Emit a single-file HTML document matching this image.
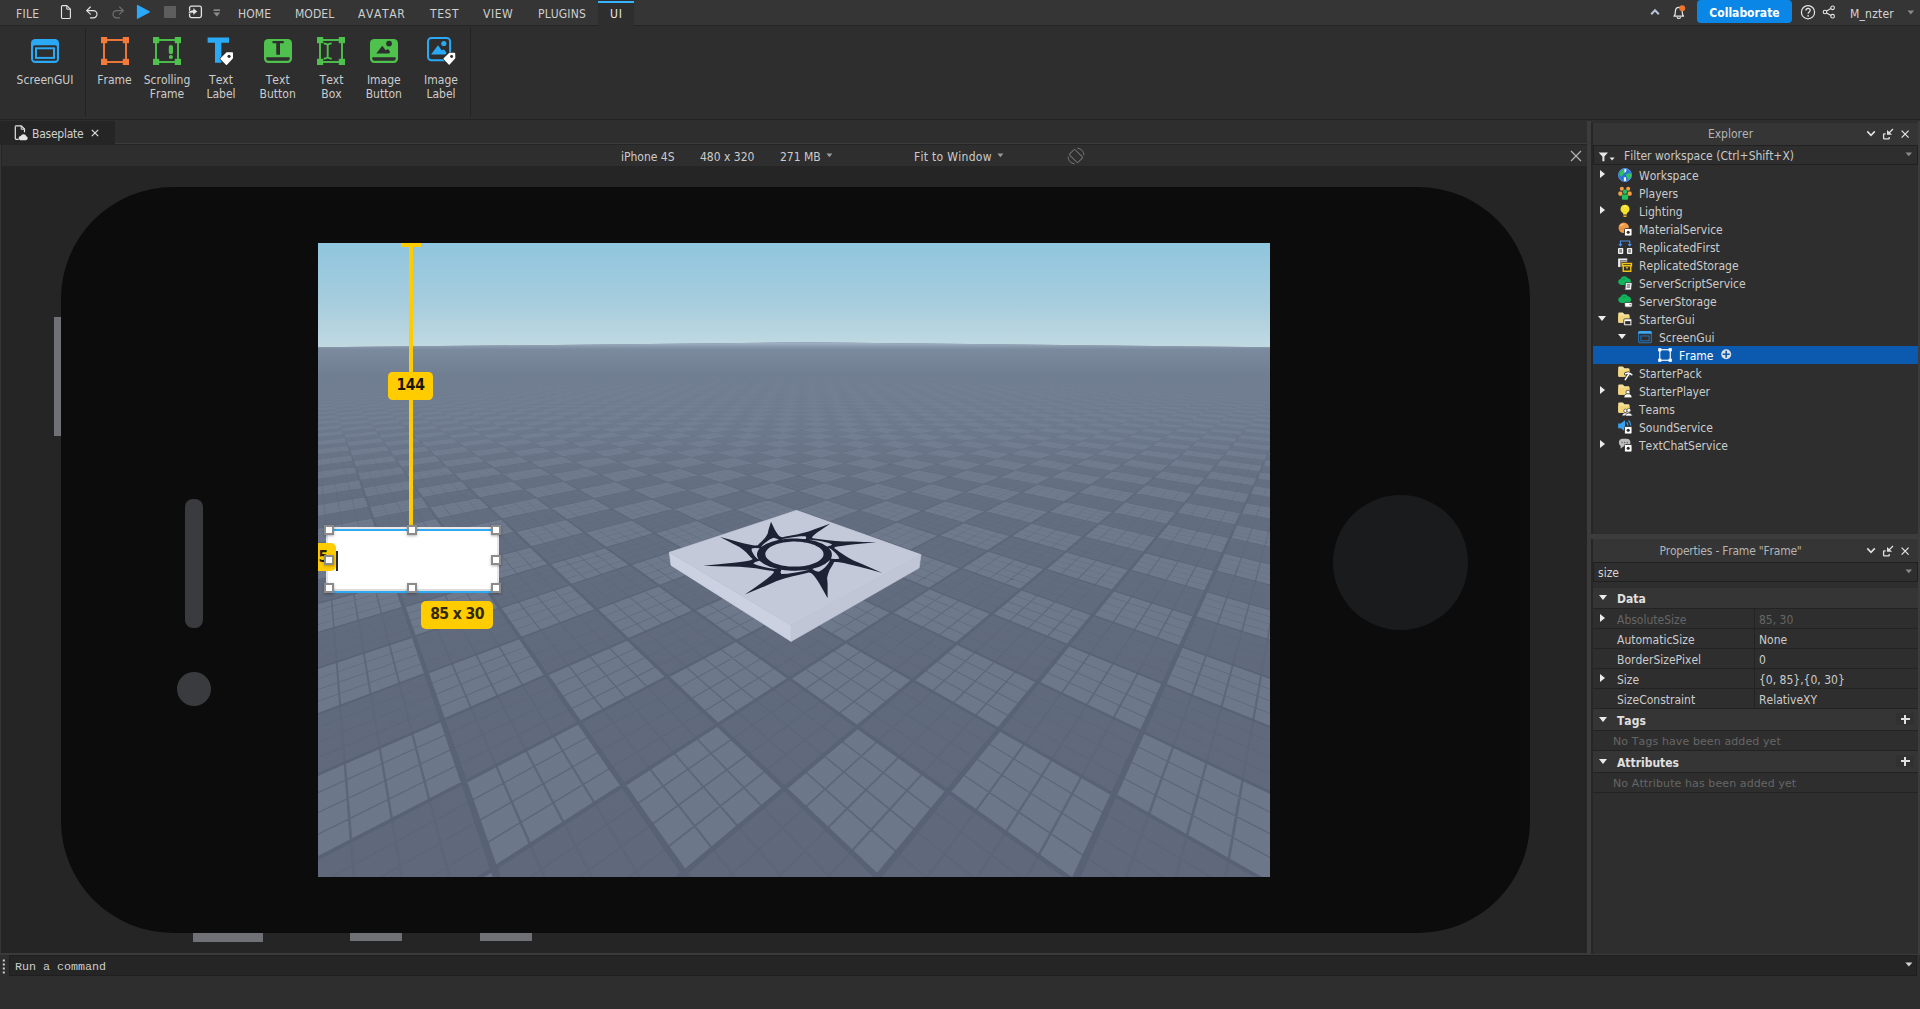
<!DOCTYPE html>
<html lang="en">
<head>
<meta charset="utf-8">
<title>Baseplate - Roblox Studio</title>
<style>
*{box-sizing:border-box;margin:0;padding:0}
html,body{width:1920px;height:1009px;overflow:hidden;background:#2e2e2e}
body{position:relative;font-kerning:none;font-family:"DejaVu Sans Condensed","Liberation Sans",sans-serif;font-size:12px;color:#ccc;line-height:14px;-webkit-font-smoothing:antialiased}
.abs{position:absolute}
.t{position:absolute;white-space:nowrap;line-height:14px}
.c{transform:translateX(-50%);text-align:center}
svg{position:absolute;overflow:visible}
/* top bar */
#topbar{position:absolute;left:0;top:0;width:1920px;height:25px;background:#353535}
#topline{position:absolute;left:0;top:25px;width:1920px;height:1px;background:#252525}
#ribbon{position:absolute;left:0;top:26px;width:1920px;height:93px;background:#2e2e2e}
#ribline{position:absolute;left:0;top:119px;width:1920px;height:1px;background:#232323}
.menu{top:6px;font-size:12px;color:#ccc}
#uitab{position:absolute;left:598px;top:0;width:36px;height:26px;background:#2e2e2e}
#uitab:before{content:"";position:absolute;left:0;top:1px;width:36px;height:2px;background:#35b5ff}
.vsep{position:absolute;top:28px;width:1px;height:89px;background:#232323}
.rl{top:73px;color:#ccc}
/* doc tab + device bar */
#tabbar{position:absolute;left:0;top:120px;width:1587px;height:24px;background:#2e2e2e}
#tabbar .line{position:absolute;left:115px;right:0;top:23px;height:1px;background:#3c3c3c}
#doctab{position:absolute;left:0;top:1px;width:115px;height:24px;background:#252525}
#devbar{position:absolute;left:2px;top:145px;width:1585px;height:21px;background:#2e2e2e}
#viewport{position:absolute;left:0;top:144px;width:1587px;height:810px;background:#252525}
#vpbottom{position:absolute;left:0;top:953px;width:1920px;height:2px;background:#3a3a3a}
#device{position:absolute;left:61px;top:187px;width:1469px;height:746px;border-radius:112px;background:#0c0c0c}
#screen{position:absolute;left:318px;top:243px;width:952px;height:634px;overflow:hidden;background:#8fc5de}
.hw{position:absolute;background:#707177}
/* command bar */
#cmd{position:absolute;left:0;top:955px;width:1920px;height:21px;background:#2e2e2e}
#cmdbox{position:absolute;left:9px;top:0;width:1908px;height:21px;background:#252525;border:1px solid #1f1f1f}
#cmdtxt{position:absolute;left:15px;top:5px;font-family:"Liberation Mono",monospace;font-size:11.67px;color:#ccc;white-space:nowrap;line-height:14px}
/* side panels */
#split{position:absolute;left:1587px;top:121px;width:4px;height:833px;background:#3c3c3c}
#rightedge{position:absolute;left:1918px;top:121px;width:2px;height:833px;background:#3c3c3c}
.panel{position:absolute;left:1591px;width:1329px;background:#2e2e2e}
.phead{position:absolute;left:1593px;width:325px;height:22px;background:#353535}
.ptitle{top:4px;left:137px;color:#bdbdbd}
.row{position:absolute;left:1593px;width:325px;height:18px}
.row.sel{background:#0b5aaf}
.row .t{top:3px}
.arr{position:absolute;width:0;height:0}
.arr.r{border-left:5.4px solid #ececec;border-top:4.2px solid transparent;border-bottom:4.2px solid transparent}
.arr.d{border-top:5.2px solid #ececec;border-left:4.1px solid transparent;border-right:4.1px solid transparent}
.ico{position:absolute;width:14px;height:14px;top:2px}
.prow{position:absolute;left:1593px;width:325px;height:20px;border-bottom:1px solid #232323}
.prow .t{top:4px}
.psec{position:absolute;left:1593px;width:325px;height:21px;background:#353535;border-bottom:1px solid #232323}
.psec .t{top:4px;left:24px;font-weight:bold;color:#e0e0e0;font-size:12px}
.dim{color:#666}
.pdiv{position:absolute;left:161px;top:0;width:1px;height:20px;background:#232323}
.plus{position:absolute;left:303px;top:4px;width:18px;height:12px;background:#313131}
.plus:before{content:"";position:absolute;left:4.5px;top:5.4px;width:9px;height:1.2px;background:#e0e0e0}
.plus:after{content:"";position:absolute;left:8.4px;top:1.5px;width:1.2px;height:9px;background:#e0e0e0}
</style>
</head>
<body>
<div id="topbar"></div><div id="topline"></div><div id="ribbon"></div><div id="ribline"></div>
<div id="uitab"></div>
<div class="t" style="left:16px;top:7px;color:#cfcfcf;letter-spacing:0.25px">FILE</div>
<div class="t" style="left:238px;top:7px;color:#cfcfcf;letter-spacing:0.1px">HOME</div>
<div class="t" style="left:295px;top:7px;color:#cfcfcf;letter-spacing:0.05px">MODEL</div>
<div class="t" style="left:358px;top:7px;color:#cfcfcf;letter-spacing:0.63px">AVATAR</div>
<div class="t" style="left:430px;top:7px;color:#cfcfcf;letter-spacing:0.57px">TEST</div>
<div class="t" style="left:483px;top:7px;color:#cfcfcf;letter-spacing:0.57px">VIEW</div>
<div class="t" style="left:538px;top:7px;color:#cfcfcf;letter-spacing:0.14px">PLUGINS</div>
<div class="t" style="left:610px;top:7px;color:#e6e6e6;letter-spacing:0.8px">UI</div>
<svg style="left:60px;top:4px" width="12" height="16" viewBox="0 0 12 16" ><path d="M2.400 1.600h4.400l3.600 3.600v8.400a.9.900 0 0 1-.9.900H2.400a.9.900 0 0 1-.9-.9V2.500a.9.900 0 0 1 .9-.9z" fill="none" stroke="#e4e4e4" stroke-width="1.150" stroke-linejoin="round"/><path d="M6.800 1.800v3.400h3.400" fill="none" stroke="#e4e4e4" stroke-width="1"/></svg>
<svg style="left:85px;top:5px" width="14" height="14" viewBox="0 0 14 14" ><path d="M5.400 2L1.600 5.600l3.800 3.600M1.900 5.600h6.500a3.600 3.600 0 0 1 0 7.200H5.400" fill="none" stroke="#e4e4e4" stroke-width="1.150" stroke-linecap="round" stroke-linejoin="round"/></svg>
<svg style="left:111px;top:5px" width="14" height="14" viewBox="0 0 14 14" ><path d="M8.600 2l3.800 3.600-3.800 3.600M12.100 5.600H5.600a3.600 3.600 0 0 0 0 7.200h3" fill="none" stroke="#707070" stroke-width="1.150" stroke-linecap="round" stroke-linejoin="round"/></svg>
<svg style="left:136px;top:4px" width="16" height="17" viewBox="0 0 16 17" ><path d="M1.500 1.500v12.800L13.200 7.900z" fill="#2aa9f9" stroke="#2aa9f9" stroke-width="1.200" stroke-linejoin="round"/></svg>
<div class="abs" style="left:164px;top:6px;width:12px;height:12px;background:#5e5e5e;border-radius:1px"></div>
<svg style="left:188px;top:5px" width="15" height="14" viewBox="0 0 15 14" ><rect x="1.6" y="1.2" width="11.8" height="11.4" rx="1.8" fill="none" stroke="#e4e4e4" stroke-width="1.3"/><path d="M0 8.6c.6-2.6 2.4-3.6 5-3.6V2.6l4.6 3.9L5 10.4V8c-2 0-3.6.2-5 .6z" fill="#e4e4e4" stroke="#353535" stroke-width=".7"/></svg>
<svg style="left:213px;top:9px" width="8" height="9" viewBox="0 0 8 9" ><rect x=".6" y=".3" width="6.4" height="1.6" fill="#8d8d8d"/><path d="M.4 3.6h6.8L3.8 7.6z" fill="#8d8d8d"/></svg>
<svg style="left:1650px;top:8px" width="10" height="8" viewBox="0 0 10 8" ><path d="M1.2 6.2L5 2.2l3.8 4" fill="none" stroke="#b9c2d6" stroke-width="2.1"/></svg>
<svg style="left:1671px;top:4px" width="16" height="17" viewBox="0 0 16 17" ><path d="M3 12.2c1.2-1 1.4-2.4 1.4-4.6 0-2.4 1.4-4.2 3.4-4.2s3.4 1.8 3.4 4.2c0 2.2.2 3.6 1.4 4.6z" fill="none" stroke="#e4e4e4" stroke-width="1.25" stroke-linejoin="round"/><path d="M6 13.2a1.9 1.9 0 0 0 3.6 0" fill="none" stroke="#e4e4e4" stroke-width="1.25"/><circle cx="11.2" cy="4.2" r="3" fill="#f0742b"/></svg>
<div class="abs" style="left:1697px;top:0;width:95px;height:23px;border-radius:4px;background:#0a86e6"></div>
<div class="t c" style="left:1744.5px;top:6px;font-weight:bold;color:#fff;font-size:12px">Collaborate</div>
<svg style="left:1800px;top:4px" width="16" height="16" viewBox="0 0 16 16" ><circle cx="8" cy="8.2" r="6.6" fill="none" stroke="#e4e4e4" stroke-width="1.2"/><path d="M5.9 6.6c0-1.4 1-2.2 2.2-2.2s2.1.8 2.1 1.9c0 1.6-2.1 1.7-2.1 3.5" fill="none" stroke="#e4e4e4" stroke-width="1.25"/><circle cx="8.1" cy="11.8" r=".85" fill="#e4e4e4"/></svg>
<svg style="left:1822px;top:5px" width="14" height="14" viewBox="0 0 14 14" ><circle cx="10.6" cy="2.8" r="1.8" fill="none" stroke="#e4e4e4" stroke-width="1.1"/><circle cx="10.6" cy="11.2" r="1.8" fill="none" stroke="#e4e4e4" stroke-width="1.1"/><circle cx="3" cy="7" r="1.8" fill="none" stroke="#e4e4e4" stroke-width="1.1"/><path d="M4.6 6.1l4.4-2.5M4.6 7.9l4.4 2.5" stroke="#e4e4e4" stroke-width="1.1"/></svg>
<div class="t" style="left:1850px;top:7px;color:#d6d6d6;letter-spacing:.2px">M_nzter</div>
<svg style="left:1907px;top:10px" width="8" height="5" viewBox="0 0 8 5" ><path d="M.5 .6h6.6L3.8 4.4z" fill="#8a8a8a"/></svg>
<div class="vsep" style="left:85px"></div><div class="vsep" style="left:470px"></div>
<svg style="left:31px;top:39px" width="28" height="24" viewBox="0 0 28 24" ><rect x="0" y="0" width="28" height="24" rx="4.2" fill="#2aa9f6"/><rect x="2.1" y="6.2" width="23.8" height="15.6" rx="1.6" fill="#2e2e2e"/><rect x="5" y="9.3" width="18" height="9.6" fill="none" stroke="#2aa9f6" stroke-width="2"/></svg>
<svg style="left:101px;top:37px" width="28" height="28" viewBox="0 0 28 28" ><rect x="3" y="3" width="22" height="22" fill="none" stroke="#f37a38" stroke-width="1.9"/><rect x="0" y="0" width="6.2" height="6.2" fill="#f37a38"/><rect x="0" y="21.8" width="6.2" height="6.2" fill="#f37a38"/><rect x="21.8" y="0" width="6.2" height="6.2" fill="#f37a38"/><rect x="21.8" y="21.8" width="6.2" height="6.2" fill="#f37a38"/></svg>
<svg style="left:153px;top:37px" width="28" height="28" viewBox="0 0 28 28" ><rect x="3" y="3" width="22" height="22" fill="none" stroke="#4ec24d" stroke-width="1.9"/><rect x="0" y="0" width="6.2" height="6.2" fill="#4ec24d"/><rect x="0" y="21.8" width="6.2" height="6.2" fill="#4ec24d"/><rect x="21.8" y="0" width="6.2" height="6.2" fill="#4ec24d"/><rect x="21.8" y="21.8" width="6.2" height="6.2" fill="#4ec24d"/><rect x="15.8" y="8" width="4.2" height="9.3" rx="2.1" fill="#4ec24d"/><circle cx="17.9" cy="20" r="2.1" fill="#4ec24d"/></svg>
<svg style="left:207px;top:37px" width="28" height="29" viewBox="0 0 28 29" ><path d="M.6 .4h21.400v5.400H14.400v20H8V5.800H.6z" fill="#2aa9f6"/><g transform="translate(13.2 15.1) scale(1.08)"><path d="M5.9 .2l5.3-.1q.6 0 .6.600l.1 4.600q0 .5-.4.900L6.300 11.800q-.5.500-1 0L.3 6.700q-.5-.5 0-1z" fill="#fff" stroke="#2e2e2e" stroke-width="1.100" paint-order="stroke"/><circle cx="8.200" cy="3.900" r="1.450" fill="#2e2e2e"/></g></svg>
<svg style="left:264px;top:39px" width="28" height="24" viewBox="0 0 28 24" ><rect width="28" height="24" rx="4.200" fill="#4ec24d"/><path d="M2.300 18.200h23.400v1.500a2 2 0 0 1-2 2H4.300a2 2 0 0 1-2-2z" fill="#2e2e2e"/><path d="M8.500 2.100h11.250v2.200H16v11.500h-3.750V4.300H8.500z" fill="#2e2e2e"/></svg>
<svg style="left:317px;top:37px" width="28" height="28" viewBox="0 0 28 28" ><rect x="3" y="3" width="22" height="22" fill="none" stroke="#4ec24d" stroke-width="1.9"/><rect x="0" y="0" width="6.2" height="6.2" fill="#4ec24d"/><rect x="0" y="21.8" width="6.2" height="6.2" fill="#4ec24d"/><rect x="21.8" y="0" width="6.2" height="6.2" fill="#4ec24d"/><rect x="21.8" y="21.8" width="6.2" height="6.2" fill="#4ec24d"/><path d="M6.700 6.400q2.700.200 4 1.400 1.300-1.200 4-1.400M6.700 21.800q2.700-.2 4-1.400 1.300 1.200 4 1.400M10.700 7.600v13" fill="none" stroke="#4ec24d" stroke-width="1.900"/></svg>
<svg style="left:370px;top:39px" width="28" height="24" viewBox="0 0 28 24" ><rect width="28" height="24" rx="4.200" fill="#4ec24d"/><path d="M2.300 18.200h23.400v1.500a2 2 0 0 1-2 2H4.300a2 2 0 0 1-2-2z" fill="#2e2e2e"/><path d="M6.300 14.500L12.300 6.800l3.400 4.500 2.300-1.300 1.800 2.300q.6 2.200-1.200 2.200z" fill="#2e2e2e"/><circle cx="19.050" cy="4.600" r="2.900" fill="#2e2e2e"/></svg>
<svg style="left:427px;top:37px" width="30" height="29" viewBox="0 0 30 29" ><rect x="1" y=".9" width="22.100" height="22.300" rx="3.400" fill="none" stroke="#2aa9f6" stroke-width="2"/><path d="M4 17.600L11 8.200l3.700 5 2.300-.8 2.200 2.900q.5 2.300-1.300 2.300z" fill="#2aa9f6"/><circle cx="16.800" cy="6.500" r="2.600" fill="#2aa9f6"/><g transform="translate(16.4 15.6) scale(1)"><path d="M5.9 .2l5.3-.1q.6 0 .6.600l.1 4.600q0 .5-.4.900L6.300 11.800q-.5.500-1 0L.3 6.700q-.5-.5 0-1z" fill="#fff" stroke="#2e2e2e" stroke-width="1.100" paint-order="stroke"/><circle cx="8.200" cy="3.900" r="1.450" fill="#2e2e2e"/></g></svg>
<div class="t c" style="left:45px;top:73px;">ScreenGUI</div>
<div class="t c" style="left:114.5px;top:73px;">Frame</div>
<div class="t c" style="left:167px;top:73px;">Scrolling</div>
<div class="t c" style="left:167px;top:87px;">Frame</div>
<div class="t c" style="left:221px;top:73px;">Text</div>
<div class="t c" style="left:221px;top:87px;">Label</div>
<div class="t c" style="left:277.7px;top:73px;">Text</div>
<div class="t c" style="left:277.7px;top:87px;">Button</div>
<div class="t c" style="left:331.5px;top:73px;">Text</div>
<div class="t c" style="left:331.5px;top:87px;">Box</div>
<div class="t c" style="left:383.8px;top:73px;">Image</div>
<div class="t c" style="left:383.8px;top:87px;">Button</div>
<div class="t c" style="left:441px;top:73px;">Image</div>
<div class="t c" style="left:441px;top:87px;">Label</div>
<div id="viewport"></div><div class="abs" style="left:0;top:145px;width:1px;height:809px;background:#363636"></div>
<div id="tabbar"><div class="line"></div><div id="doctab"></div></div>
<svg style="left:14px;top:124.5px" width="14" height="16" viewBox="0 0 14 16" ><path d="M1.3 1.6a.8.8 0 0 1 .8-.8h5.2l3.2 3.2v3.2" fill="none" stroke="#e4e4e4" stroke-width="1.2"/><path d="M7.2 1v3.2h3.2" fill="none" stroke="#e4e4e4" stroke-width="1"/><path d="M1.3 1.6v12a.8.8 0 0 0 .8.8h2.6" fill="none" stroke="#e4e4e4" stroke-width="1.2"/><path d="M6.2 15.2a2.2 2.2 0 0 1 .5-4.3 3 3 0 0 1 5.6.4 2 2 0 0 1-.3 3.9z" fill="#e4e4e4"/></svg>
<div class="t" style="left:32px;top:127px;color:#d0d0d0;letter-spacing:-.25px">Baseplate</div>
<svg style="left:91px;top:129px" width="8" height="8" viewBox="0 0 8 8" ><path d="M.8 .8l6.4 6.4M7.2 .8L.8 7.2" stroke="#dcdcdc" stroke-width="1.2"/></svg>
<div id="devbar"></div>
<div class="t" style="left:621px;top:150px;">iPhone 4S</div>
<div class="t" style="left:700px;top:150px;">480 x 320</div>
<div class="t" style="left:780px;top:150px;">271 MB</div>
<svg style="left:826px;top:153px" width="7" height="5" viewBox="0 0 7 5" ><path d="M.4 .4h6L3.4 4.2z" fill="#9a9a9a"/></svg>
<div class="t" style="left:914px;top:150px;letter-spacing:.3px">Fit to Window</div>
<svg style="left:997px;top:153px" width="7" height="5" viewBox="0 0 7 5" ><path d="M.4 .4h6L3.4 4.2z" fill="#9a9a9a"/></svg>
<svg style="left:1067px;top:147px" width="18" height="18" viewBox="0 0 18 18" ><g fill="none" stroke="#73767b" stroke-width="1"><rect x="5.200" y="3.050" width="7.600" height="11.900" rx=".9" transform="rotate(-45 9 9)"/><path d="M10.400 1.100A8 8 0 0 1 17 8.300M7.600 16.900A8 8 0 0 1 1 9.700"/></g></svg>
<svg style="left:1570px;top:150px" width="12" height="12" viewBox="0 0 12 12" ><path d="M1 1l10 10M11 1L1 11" stroke="#b4b4b4" stroke-width="1.2"/></svg>
<div class="hw" style="left:54px;top:317px;width:7px;height:119px"></div>
<div class="hw" style="left:193px;top:933px;width:70px;height:9px"></div>
<div class="hw" style="left:350px;top:933px;width:52px;height:8px"></div>
<div class="hw" style="left:480px;top:933px;width:52px;height:8px"></div>
<div id="device"></div>
<div class="abs" style="left:185px;top:498.500px;width:18px;height:129.500px;border-radius:8px;background:#3a3b3e"></div>
<div class="abs" style="left:177px;top:672px;width:34px;height:34px;border-radius:17px;background:#3a3b3e"></div>
<div class="abs" style="left:1333px;top:494.500px;width:135px;height:135px;border-radius:68px;background:#1a1b1d"></div>
<div id="screen"><svg class="scene" width="952" height="634" viewBox="0 0 952 634">
<defs><linearGradient id="sky" x1="0" y1="0" x2="0" y2="1"><stop offset="0" stop-color="#8fc5de"/><stop offset="0.55" stop-color="#a7cddd"/><stop offset="1" stop-color="#c4dbe2"/></linearGradient><linearGradient id="gnd" gradientUnits="userSpaceOnUse" x1="0" y1="100" x2="0" y2="634"><stop offset="0" stop-color="#667083"/><stop offset="0.12" stop-color="#667083"/><stop offset="0.3" stop-color="#60697c"/><stop offset="1" stop-color="#60697c"/></linearGradient><linearGradient id="fog" gradientUnits="userSpaceOnUse" x1="0" y1="100" x2="0" y2="634"><stop offset="0" stop-color="#a6b8cb" stop-opacity="0.9"/><stop offset="0.012" stop-color="#8698ac" stop-opacity="0.66"/><stop offset="0.06" stop-color="#8093a6" stop-opacity="0.42"/><stop offset="0.25" stop-color="#8093a6" stop-opacity="0.13"/><stop offset="0.6" stop-color="#8093a6" stop-opacity="0.03"/><stop offset="1" stop-color="#8093a6" stop-opacity="0"/></linearGradient><clipPath id="scclip"><rect x="0" y="0" width="952" height="634"/></clipPath></defs>
<g clip-path="url(#scclip)">
<rect x="0" y="0" width="952" height="110" fill="url(#sky)"/>
<polygon points="655054.8,7210.2 211603.4,2385.4 486.6,99.3 -10662.2,214.9 -627201.6,7210.2" fill="url(#gnd)"/>
<path fill="#6d778a" d="M-14 949.5l233.7-196.6 -43.9-127.5 -188.3 120.9zM-11.5 621.1l157.5-81.9 -21.4-62.1 -135.5 59.1zM-10.4 474.9l118.8-44.7 -12.6-36.7 -105.9 35zM-9.8 392.2l95.4-28.1 -8.3-24.2 -86.9 23.1zM-9.4 339l79.7-19.3 -5.9-17.2 -73.7 16.4zM-9.1 301.9l68.4-14.1 -4.4-12.8 -63.9 12.2zM-8.9 274.5l59.9-10.7 -3.4-9.9 -56.5 9.5zM-8.8 253.5l53.4-8.4 -2.8-7.9 -50.5 7.6zM-8.7 236.9l48.1-6.8 -2.2-6.4 -45.8 6.2zM-8.6 223.5l43.8-5.6 -1.9-5.4 -41.8 5.1zM-8.5 212.3l40.1-4.7 -1.5-4.5 -38.5 4.3zM-8.4 202.9l37-4 -1.3-3.8 -35.7 3.7zM-8.3 194.9l34.3-3.4 -1.1-3.4 -33.2 3.2zM-8.3 188l32.1-3 -1-2.9 -31.1 2.8zM-8.2 182l30.1-2.7 -.9-2.5 -29.2 2.4zM-8.2 176.7l28.3-2.3 -.7-2.3 -27.6 2.2zM291.5 960.9l165.2-201.3 -90.6-129.9 -146.4 123.2zM175.8 625.4l129.3-83.1 -43.9-62.9 -115.2 59.8zM124.6 477.1l103.6-45.2 -25.9-37 -93.9 35.3zM95.8 393.5l85.8-28.3 -17-24.4 -79 23.3zM77.3 339.9l73.1-19.4 -12.1-17.3 -68 16.5zM64.4 302.5l63.6-14.1 -8.9-12.9 -59.8 12.3zM54.9 275l56.3-10.7 -6.9-10 -53.3 9.5zM47.6 253.9l50.5-8.4 -5.5-7.9 -48 7.5zM41.8 237.2l45.8-6.8 -4.5-6.4 -43.7 6.1zM37.2 223.7l41.8-5.6 -3.8-5.4 -40 5.2zM33.3 212.5l38.5-4.7 -3.2-4.5 -37 4.3zM30.1 203.1l35.6-4 -2.7-3.9 -34.4 3.7zM27.3 195.1l33.2-3.5 -2.3-3.3 -32.2 3.2zM24.9 188.1l31.1-3 -2-2.9 -30.2 2.8zM22.8 182.1l29.2-2.6 -1.8-2.6 -28.3 2.4zM21 176.8l27.5-2.3 -1.6-2.3 -26.8 2.2zM19.4 172.1l26-2.1 -1.4-2.1 -25.4 2zM605.2 972.5l93.3-206.1 -138.9-132.2 -102.9 125.4zM366.1 629.7l100.3-84.3 -66.9-63.7 -94.4 60.6zM261.2 479.4l87.9-45.7 -39.2-37.4 -81.7 35.6zM202.3 394.9l76.1-28.6 -25.8-24.6 -71 23.5zM164.6 340.8l66.4-19.6 -18.2-17.3 -62.4 16.6zM138.3 303.2l58.9-14.2 -13.6-13 -55.6 12.4zM119.1 275.5l52.6-10.8 -10.5-10 -50 9.6zM104.3 254.3l47.6-8.5 -8.4-7.9 -45.4 7.6zM92.6 237.6l43.4-6.9 -6.8-6.5 -41.6 6.2zM83.1 224l39.9-5.7 -5.7-5.4 -38.3 5.2zM75.2 212.7l36.9-4.7 -4.7-4.5 -35.6 4.3zM68.6 203.3l34.4-4 -4.1-3.9 -33.2 3.7zM63 195.2l32.1-3.4 -3.5-3.4 -31.1 3.2zM58.2 188.3l30.1-3 -3.1-3 -29.2 2.8zM54 182.2l28.3-2.6 -2.7-2.6 -27.6 2.5zM50.2 176.9l26.8-2.3 -2.4-2.3 -26.1 2.2zM46.9 172.2l25.4-2.1 -2.1-2.1 -24.8 2zM927.5 984.5l17.9-211.1 -189-134.7 -57.9 127.7zM559.6 634.2l70.3-85.7 -90.5-64.5 -73 61.4zM399.5 481.7l71.9-46.2 -53-37.8 -69.3 36zM309.9 396.3l66.1-28.8 -34.8-24.8 -62.8 23.6zM252.6 341.7l59.7-19.7 -24.6-17.5 -56.7 16.7zM212.8 303.9l53.9-14.3 -18.2-13 -51.3 12.4zM183.6 276l48.9-10.8 -14.1-10.1 -46.7 9.6zM161.2 254.7l44.7-8.5 -11.2-8 -42.8 7.6zM143.5 237.9l41.1-6.9 -9.1-6.5 -39.5 6.2zM129.2 224.2l38-5.6 -7.6-5.4 -36.6 5.1zM117.3 212.9l35.3-4.7 -6.4-4.6 -34.1 4.4zM107.4 203.5l32.9-4.1 -5.5-3.9 -31.8 3.8zM98.9 195.4l30.9-3.5 -4.8-3.4 -29.9 3.3zM91.6 188.4l29-3 -4.1-3 -28.2 2.9zM85.2 182.3l27.4-2.6 -3.6-2.6 -26.7 2.5zM79.6 177l26-2.4 -3.3-2.3 -25.3 2.3zM74.6 172.3l24.7-2.1 -2.9-2.1 -24.1 2zM756.4 638.7l39.3-87 -114.7-65.4 -51.1 62.2zM539.4 484l55.5-46.7 -66.9-38.2 -56.6 36.4zM418.4 397.7l56-29.1 -43.8-25 -54.6 23.9zM341.2 342.7l52.9-19.9 -30.9-17.6 -50.9 16.8zM287.7 304.5l49-14.4 -23-13 -47 12.5zM248.5 276.6l45.2-11 -17.8-10.1 -43.4 9.7zM218.4 255.1l41.8-8.6 -14.1-8 -40.2 7.7zM194.7 238.2l38.7-6.9 -11.5-6.5 -37.3 6.2zM175.5 224.5l36-5.7 -9.5-5.4 -34.8 5.2zM159.6 213.2l33.6-4.8 -8-4.6 -32.6 4.4zM146.2 203.6l31.6-4 -6.9-3.9 -30.6 3.7zM134.8 195.5l29.7-3.4 -5.9-3.4 -28.8 3.2zM125 188.5l28.1-3 -5.2-2.9 -27.3 2.8zM116.5 182.4l26.5-2.6 -4.5-2.6 -25.9 2.5zM109 177.1l25.2-2.4 -4.1-2.3 -24.5 2.2zM102.3 172.3l24-2 -3.6-2.1 -23.4 2zM956.4 643.2l7.5-88.3 -139.6-66.2 -28.6 63zM681 486.3l38.7-47.2 -81.2-38.5 -43.6 36.7zM528 399.1l45.7-29.3 -53.1-25.2 -46.2 24zM430.6 343.6l45.8-20 -37.3-17.7 -45 16.9zM363.2 305.2l43.9-14.5 -27.7-13.1 -42.7 12.5zM313.7 277.1l41.4-11 -21.4-10.2 -40 9.7zM275.9 255.5l38.8-8.6 -17-8.1 -37.5 7.7zM246.1 238.5l36.3-6.9 -13.8-6.6 -35.2 6.3zM221.9 224.8l34.1-5.8 -11.5-5.4 -33 5.2zM202 213.4l32-4.8 -9.7-4.6 -31.1 4.4zM185.2 203.8l30.2-4 -8.3-4 -29.3 3.8zM170.9 195.7l28.5-3.5 -7.1-3.4 -27.8 3.3zM158.6 188.7l27-3.1 -6.2-2.9 -26.3 2.8zM147.9 182.6l25.6-2.7 -5.5-2.6 -25 2.5zM138.5 177.2l24.4-2.4 -4.9-2.3 -23.8 2.2zM130.1 172.4l23.3-2 -4.4-2.1 -22.7 2zM824.3 488.7l21.6-47.8 -95.7-38.9 -30.5 37.1zM638.5 400.6l35.3-29.7 -62.5-25.3 -37.6 24.2zM520.6 344.6l38.8-20.2 -43.9-17.8 -39.1 17zM439.1 305.9l38.8-14.6 -32.5-13.2 -38.3 12.6zM379.4 277.6l37.5-11.1 -25.1-10.2 -36.7 9.8zM333.7 255.9l35.8-8.6 -19.9-8.1 -34.9 7.7zM297.7 238.8l33.9-6.9 -16.2-6.6 -33 6.3zM268.6 225l32.1-5.7 -13.5-5.5 -31.2 5.2zM244.5 213.6l30.4-4.8 -11.3-4.6 -29.6 4.4zM224.3 204l28.8-4.1 -9.7-3.9 -28 3.8zM207.1 195.8l27.3-3.4 -8.3-3.4 -26.7 3.2zM192.3 188.8l25.9-3 -7.3-3 -25.3 2.8zM179.4 182.7l24.7-2.7 -6.4-2.6 -24.2 2.5zM168 177.3l23.6-2.4 -5.7-2.3 -23 2.2zM158 172.5l22.5-2.1 -5.1-2 -22 2zM969.3 491.1l4.1-48.3 -110.5-39.3 -17 37.4zM750.2 402l24.5-29.9 -71.9-25.6 -29 24.4zM611.3 345.6l31.6-20.3 -50.5-18 -33 17.1zM515.5 306.6l33.7-14.7 -37.5-13.3 -33.8 12.7zM445.4 278.1l33.6-11.1 -28.8-10.3 -33.3 9.8zM391.8 256.3l32.8-8.7 -22.9-8.1 -32.2 7.8zM349.6 239.2l31.5-7 -18.7-6.7 -30.8 6.4zM315.4 225.3l30.1-5.8 -15.4-5.5 -29.4 5.3zM287.2 213.8l28.7-4.8 -13-4.6 -28 4.4zM263.6 204.2l27.3-4.1 -11.1-3.9 -26.7 3.7zM243.4 196l26.1-3.5 -9.6-3.4 -25.5 3.3zM226.1 189l24.9-3.1 -8.4-3 -24.4 2.9zM210.9 182.8l23.8-2.7 -7.3-2.6 -23.3 2.5zM197.7 177.4l22.7-2.3 -6.5-2.4 -22.3 2.2zM185.9 172.6l21.8-2.1 -5.8-2 -21.4 1.9zM862.9 403.5l13.6-30.2 -81.6-25.8 -20.2 24.6zM702.8 346.5l24.3-20.4 -57.3-18.1 -26.9 17.3zM592.4 307.3l28.4-14.8 -42.3-13.4 -29.3 12.8zM511.7 278.6l29.7-11.2 -32.6-10.3 -29.8 9.9zM450.2 256.7l29.7-8.7 -25.9-8.2 -29.4 7.8zM401.7 239.5l29-7 -21-6.7 -28.6 6.4zM362.4 225.5l28.2-5.7 -17.5-5.5 -27.6 5.2zM330.1 214l27-4.8 -14.6-4.6 -26.6 4.4zM302.9 204.4l26-4.1 -12.5-4 -25.5 3.8zM279.8 196.2l24.9-3.5 -10.8-3.5 -24.4 3.3zM259.9 189.1l23.9-3.1 -9.5-3 -23.3 2.9zM242.6 182.9l22.9-2.6 -8.3-2.7 -22.5 2.5zM227.4 177.5l21.9-2.3 -7.3-2.4 -21.6 2.3zM213.9 172.7l21.1-2.1 -6.6-2.1 -20.7 2zM976.6 404.9l2.6-30.4 -91.5-26 -11.2 24.8zM794.9 347.5l16.9-20.6 -64.1-18.2 -20.6 17.4zM669.8 308l23.2-14.9 -47.4-13.4 -24.8 12.8zM578.5 279.1l25.7-11.2 -36.4-10.4 -26.4 9.9zM508.8 257.1l26.6-8.8 -28.9-8.2 -26.6 7.9zM454 239.8l26.6-7.1 -23.5-6.6 -26.4 6.4zM409.7 225.8l26-5.8 -19.4-5.5 -25.7 5.3zM373.1 214.3l25.4-4.9 -16.4-4.6 -25 4.4zM342.5 204.6l24.5-4.1 -14-4 -24.1 3.8zM316.4 196.3l23.6-3.5 -12-3.4 -23.3 3.3zM293.9 189.2l22.8-3 -10.5-3 -22.4 2.8zM274.3 183l22-2.6 -9.3-2.7 -21.5 2.6zM257.2 177.6l21.1-2.3 -8.2-2.4 -20.8 2.3zM242 172.8l20.3-2.1 -7.3-2.1 -20 2zM887.7 348.5l9.4-20.8 -70.9-18.3 -14.4 17.5zM747.7 308.7l17.8-15 -52.4-13.5 -20.1 12.9zM645.6 279.7l21.7-11.3 -40.3-10.4 -22.8 9.9zM567.8 257.5l23.5-8.8 -32-8.2 -23.9 7.8zM506.5 240.1l24.1-7.1 -25.9-6.7 -24.1 6.4zM457.1 226.1l24-5.8 -21.5-5.6 -23.9 5.3zM416.3 214.5l23.7-4.9 -18.1-4.7 -23.4 4.5zM382.1 204.8l23.1-4.2 -15.4-4 -22.8 3.9zM353 196.5l22.4-3.6 -13.3-3.4 -22.1 3.3zM328 189.4l21.7-3.1 -11.6-3 -21.4 2.9zM306.2 183.2l21-2.7 -10.2-2.7 -20.7 2.6zM287 177.7l20.3-2.3 -9-2.4 -20 2.3zM270.1 172.9l19.6-2.1 -8.1-2.1 -19.3 2zM981.3 349.5l1.8-20.9 -78-18.5 -8 17.6zM826.2 309.4l12.3-15 -57.5-13.7 -15.5 13zM713.1 280.2l17.7-11.4 -44.2-10.4 -19.3 10zM627 258l20.4-8.9 -35-8.3 -21.1 7.9zM559.3 240.5l21.6-7.2 -28.4-6.7 -21.9 6.4zM504.7 226.3l22-5.8 -23.6-5.6 -22 5.4zM459.6 214.7l22-4.9 -19.8-4.7 -21.8 4.5zM421.9 204.9l21.6-4.1 -16.9-4 -21.4 3.8zM389.8 196.6l21.2-3.5 -14.6-3.5 -21 3.3zM362.1 189.5l20.7-3.1 -12.7-3 -20.4 2.9zM338.1 183.3l20.1-2.7 -11.2-2.7 -19.8 2.6zM317 177.8l19.5-2.3 -10-2.4 -19.2 2.3zM298.3 173l18.9-2.1 -8.9-2.1 -18.6 2zM905.1 310.1l6.9-15.1 -62.7-13.7 -10.8 13.1zM781 280.7l13.6-11.4 -48.2-10.5 -15.6 10zM686.6 258.4l17.1-8.9 -38.1-8.4 -18.2 8zM612.4 240.8l19-7.2 -30.9-6.7 -19.6 6.4zM552.5 226.6l19.9-5.9 -25.6-5.5 -20.1 5.3zM503.1 214.9l20.3-4.9 -21.6-4.7 -20.2 4.5zM461.8 205.1l20.2-4.1 -18.4-4 -20.1 3.8zM426.6 196.8l20-3.6 -15.8-3.4 -19.8 3.3zM396.4 189.6l19.6-3 -13.8-3.1 -19.4 2.9zM370.1 183.4l19.1-2.7 -12.1-2.6 -18.9 2.5zM347 177.9l18.6-2.3 -10.7-2.4 -18.4 2.3zM326.5 173.1l18.2-2.1 -9.6-2.1 -17.9 2zM984.6 310.8l1.3-15.2 -68-13.8 -5.9 13.2zM849.3 281.3l9.4-11.5 -52.1-10.6 -12 10.1zM746.4 258.8l14-9 -41.3-8.3 -15.4 8zM665.6 241.1l16.5-7.2 -33.5-6.7 -17.2 6.4zM600.5 226.9l17.8-5.9 -27.7-5.6 -18.2 5.3zM546.8 215.2l18.5-5 -23.3-4.7 -18.6 4.5zM501.8 205.3l18.8-4.1 -19.9-4.1 -18.7 3.9zM463.6 197l18.7-3.6 -17.1-3.5 -18.6 3.3zM430.8 189.8l18.5-3.1 -15-3 -18.3 2.9zM402.2 183.5l18.2-2.7 -13.2-2.6 -18 2.5zM377.1 178.1l17.8-2.4 -11.6-2.4 -17.7 2.3zM354.9 173.2l17.4-2.1 -10.4-2.1 -17.2 2zM917.9 281.8l5.3-11.6 -56.2-10.6 -8.3 10.2zM806.6 259.2l10.7-9 -44.4-8.4 -12.5 8zM719.1 241.5l13.9-7.3 -36-6.8 -14.9 6.5zM648.6 227.2l15.8-6 -29.8-5.6 -16.3 5.4zM590.6 215.4l16.8-5 -25-4.7 -17.1 4.5zM542 205.5l17.3-4.2 -21.3-4 -17.4 3.9zM500.7 197.1l17.5-3.5 -18.4-3.5 -17.5 3.3zM465.2 189.9l17.4-3.1 -16-3 -17.3 2.9zM434.3 183.7l17.3-2.8 -14.1-2.6 -17.1 2.5zM407.2 178.2l17-2.4 -12.5-2.4 -16.8 2.3zM383.3 173.3l16.7-2.1 -11.2-2.1 -16.5 2zM987 282.3l1-11.6 -60.2-10.7 -4.6 10.2zM867 259.6l7.4-9 -47.5-8.5 -9.6 8.1zM772.9 241.8l11.3-7.3 -38.6-6.8 -12.6 6.5zM697 227.4l13.6-5.9 -31.8-5.7 -14.4 5.4zM634.6 215.6l15-4.9 -26.8-4.8 -15.4 4.5zM582.4 205.7l15.7-4.2 -22.8-4 -16 3.8zM538 197.3l16.1-3.6 -19.6-3.5 -16.3 3.4zM499.8 190.1l16.3-3.1 -17.1-3.1 -16.4 2.9zM466.6 183.8l16.3-2.7 -15.1-2.7 -16.2 2.5zM437.5 178.3l16.1-2.4 -13.3-2.4 -16.1 2.3zM411.7 173.4l16-2.1 -11.9-2.2 -15.8 2.1zM927.8 260l4.1-9.1 -50.8-8.4 -6.7 8.1zM826.9 242.1l8.6-7.3 -41.1-6.8 -10.2 6.5zM745.6 227.7l11.5-6 -34-5.6 -12.5 5.4zM678.8 215.8l13.2-4.9 -28.6-4.8 -13.8 4.6zM622.8 205.9l14.3-4.2 -24.3-4.1 -14.7 3.9zM575.3 197.5l14.9-3.6 -21-3.5 -15.1 3.3zM534.5 190.2l15.2-3.1 -18.3-3.1 -15.3 3zM499 183.9l15.3-2.7 -16.1-2.7 -15.3 2.6zM467.8 178.4l15.3-2.4 -14.2-2.4 -15.3 2.3zM440.3 173.5l15.2-2.2 -12.7-2.1 -15.1 2.1zM988.9 260.5l.7-9.2 -54-8.5 -3.7 8.1zM881.1 242.5l6-7.4 -43.7-6.9 -7.9 6.6zM794.4 228l9.3-6 -36.1-5.7 -10.5 5.4zM723.1 216.1l11.4-5 -30.3-4.8 -12.2 4.6zM663.4 206.1l12.8-4.2 -25.8-4.1 -13.3 3.9zM612.8 197.6l13.6-3.6 -22.3-3.5 -13.9 3.4zM569.2 190.4l14.1-3.2 -19.4-3 -14.2 2.9zM531.4 184l14.4-2.7 -17.1-2.7 -14.4 2.6zM498.2 178.5l14.5-2.4 -15.1-2.4 -14.5 2.3zM468.9 173.6l14.4-2.2 -13.4-2.1 -14.4 2zM935.6 242.8l3.3-7.3 -46.4-7 -5.4 6.6zM843.4 228.2l7.1-6 -38.3-5.7 -8.5 5.5zM767.6 216.3l9.6-5 -32.2-4.8 -10.5 4.6zM704.2 206.3l11.2-4.3 -27.3-4 -11.9 3.9zM650.4 197.8l12.3-3.6 -23.6-3.6 -12.7 3.4zM604.1 190.5l13-3.1 -20.5-3.1 -13.3 2.9zM563.9 184.2l13.4-2.8 -18-2.7 -13.5 2.6zM528.7 178.6l13.6-2.4 -16-2.4 -13.6 2.3zM497.6 173.7l13.6-2.2 -14.2-2.1 -13.7 2zM990.3 243.1l.6-7.3 -49-7 -3 6.7zM892.5 228.5l5-6 -40.5-5.8 -6.5 5.5zM812.2 216.5l7.8-5 -33.9-4.8 -8.9 4.6zM745 206.5l9.8-4.3 -28.9-4.1 -10.5 3.9zM688.1 198l11-3.7 -24.9-3.5 -11.5 3.4zM639.1 190.6l11.9-3.1 -21.7-3.1 -12.2 3zM596.6 184.3l12.4-2.8 -19.1-2.7 -12.6 2.6zM559.3 178.7l12.7-2.4 -16.9-2.4 -12.8 2.3zM526.3 173.8l12.9-2.2 -15-2.1 -13 2zM941.9 228.8l2.8-6.1 -42.7-5.7 -4.5 5.5zM857 216.7l6-5 -35.8-4.8 -7.2 4.6zM786.1 206.7l8.2-4.3 -30.5-4.1 -9 3.9zM725.9 198.1l9.7-3.6 -26.2-3.6 -10.3 3.4zM674.2 190.8l10.7-3.2 -22.8-3.1 -11.1 3zM629.3 184.4l11.4-2.8 -20.1-2.7 -11.6 2.6zM589.9 178.8l11.9-2.4 -17.8-2.4 -12 2.3zM555.1 173.9l12.2-2.2 -15.8-2.1 -12.3 2zM991.5 229.1l.5-6.1 -44.8-5.8 -2.5 5.5zM902 217l4.2-5.1 -37.7-4.8 -5.5 4.6zM827.2 206.9l6.7-4.3 -32-4.1 -7.6 3.9zM763.8 198.3l8.4-3.7 -27.6-3.5 -9 3.4zM709.4 190.9l9.6-3.1 -24-3.1 -10.1 2.9zM662.1 184.5l10.4-2.7 -21.1-2.8 -10.7 2.6zM620.6 178.9l11-2.4 -18.6-2.4 -11.2 2.3zM584 174l11.4-2.2 -16.6-2.1 -11.5 2zM947.2 217.2l2.3-5.1 -39.5-4.8 -3.8 4.6zM868.5 207.1l5.1-4.3 -33.5-4.2 -6.2 4zM801.9 198.5l7-3.7 -28.9-3.6 -7.8 3.4zM744.6 191.1l8.5-3.2 -25.1-3.1 -9 3zM695 184.7l9.4-2.8 -22.1-2.8 -9.8 2.7zM651.4 179l10.2-2.4 -19.6-2.4 -10.4 2.3zM613 174.1l10.6-2.2 -17.4-2.2 -10.8 2.1zM992.5 217.4l.4-5.1 -41.3-4.8 -2.1 4.6zM910 207.3l3.5-4.4 -35.1-4.1 -4.8 4zM840.1 198.6l5.7-3.7 -30.3-3.5 -6.6 3.4zM780 191.2l7.3-3.2 -26.3-3.1 -7.9 3zM728 184.8l8.4-2.8 -23.1-2.7 -8.9 2.6zM682.3 179.1l9.3-2.4 -20.5-2.4 -9.5 2.3zM642 174.2l9.9-2.2 -18.3-2.2 -10 2.1zM951.6 207.5l1.9-4.4 -36.7-4.1 -3.3 3.9zM878.4 198.8l4.4-3.7 -31.7-3.6 -5.3 3.4zM815.5 191.4l6.2-3.2 -27.5-3.2 -6.9 3zM761 184.9l7.5-2.8 -24.2-2.7 -7.9 2.6zM713.3 179.3l8.4-2.5 -21.4-2.4 -8.7 2.3zM671.1 174.3l9.1-2.2 -19-2.2 -9.3 2.1zM993.3 207.6l.4-4.3 -38.3-4.2 -1.9 4zM916.8 199l3-3.7 -32.9-3.7 -4.1 3.5zM851.1 191.5l5-3.2 -28.6-3.1 -5.8 3zM794.2 185l6.4-2.8 -25.1-2.7 -7 2.6zM744.3 179.4l7.5-2.5 -22.2-2.4 -7.9 2.3zM700.3 174.4l8.3-2.2 -19.9-2.2 -8.5 2.1zM955.4 199.1l1.6-3.7 -34.3-3.6 -2.9 3.5zM886.9 191.6l3.8-3.2 -29.9-3.1 -4.7 3zM827.5 185.2l5.4-2.8 -26.2-2.8 -6.1 2.6zM775.5 179.5l6.5-2.5 -23.1-2.4 -7.1 2.3zM729.6 174.5l7.4-2.2 -20.6-2.2 -7.8 2.1zM922.7 191.8l2.6-3.2 -31-3.2 -3.6 3zM860.8 185.3l4.4-2.8 -27.2-2.8 -5.1 2.7zM806.7 179.6l5.7-2.5 -24.1-2.4 -6.3 2.3zM758.9 174.6l6.6-2.2 -21.4-2.2 -7.1 2.1zM958.6 191.9l1.5-3.2 -32.3-3.2 -2.5 3.1zM894.3 185.4l3.3-2.8 -28.3-2.8 -4.1 2.7zM838 179.7l4.7-2.5 -25-2.4 -5.3 2.3zM788.3 174.7l5.8-2.2 -22.2-2.2 -6.4 2.1zM927.8 185.5l2.3-2.8 -29.3-2.8 -3.2 2.7zM869.3 179.8l3.9-2.5 -25.9-2.4 -4.6 2.3zM817.7 174.8l5.1-2.2 -23.1-2.2 -5.6 2.1zM961.4 185.7l1.3-2.9 -30.4-2.8 -2.2 2.7zM900.8 179.9l3-2.5 -26.9-2.4 -3.7 2.3zM847.3 174.9l4.2-2.2 -23.9-2.2 -4.8 2.1zM932.3 180l2.1-2.5 -27.8-2.4 -2.8 2.3zM876.9 175l3.4-2.3 -24.7-2.2 -4.1 2.2zM963.9 180.2l1.2-2.6 -28.8-2.4 -1.9 2.3zM906.6 175.1l2.6-2.3 -25.6-2.2 -3.3 2.1zM936.3 175.2l1.9-2.3 -26.5-2.2 -2.5 2.1zM966.2 175.3l1-2.3 -27.3-2.2 -1.7 2.1z"/>
<path fill="#6c7689" d="M-8.2 172l26.8-2.1 -.7-2 -26.1 1.9zM-8.1 167.8l25.3-1.9 -.6-1.8 -24.7 1.7zM-8.1 164l24.1-1.7 -.6-1.6 -23.5 1.6zM17.9 167.9l24.8-1.9 -1.3-1.8 -24.2 1.7zM16.6 164.1l23.5-1.7 -1.1-1.6 -23 1.5zM44 167.9l24.1-1.8 -1.9-1.9 -23.5 1.8zM41.4 164.2l23-1.7 -1.8-1.7 -22.5 1.6zM70.2 168l23.5-1.8 -2.6-1.9 -23 1.8zM66.2 164.2l22.4-1.6 -2.3-1.7 -21.9 1.6zM96.4 168.1l22.8-1.9 -3.2-1.8 -22.3 1.8zM91.1 164.3l21.8-1.7 -2.9-1.6 -21.4 1.6zM122.7 168.2l22.2-1.9 -3.9-1.8 -21.8 1.7zM116 164.4l21.3-1.7 -3.6-1.7 -20.8 1.6zM149 168.3l21.6-1.9 -4.6-1.9 -21.1 1.8zM141 164.5l20.7-1.7 -4.2-1.7 -20.2 1.6zM175.4 168.4l21-1.9 -5.3-1.9 -20.5 1.8zM166 164.5l20.1-1.6 -4.7-1.7 -19.7 1.6zM201.9 168.5l20.3-1.9 -5.9-1.9 -19.9 1.8zM191.1 164.6l19.5-1.7 -5.3-1.7 -19.2 1.7zM228.4 168.5l19.6-1.9 -6.6-1.8 -19.2 1.8zM216.3 164.7l18.9-1.7 -6-1.7 -18.6 1.6zM255 168.6l19-1.9 -7.3-1.8 -18.7 1.7zM241.4 164.8l18.4-1.7 -6.6-1.7 -18 1.6zM281.6 168.7l18.4-1.9 -8-1.9 -18 1.8zM266.7 164.9l17.8-1.8 -7.2-1.7 -17.5 1.7zM308.3 168.8l17.7-1.9 -8.6-1.9 -17.4 1.8zM292 164.9l17.2-1.7 -7.8-1.7 -16.9 1.6zM335.1 168.9l17-1.9 -9.3-1.9 -16.8 1.8zM317.4 165l16.6-1.7 -8.5-1.7 -16.3 1.6zM361.9 169l16.4-1.9 -10-1.9 -16.2 1.8zM342.8 165.1l16-1.7 -9.1-1.7 -15.7 1.6zM388.8 169.1l15.7-2 -10.7-1.9 -15.5 1.9zM368.3 165.2l15.3-1.8 -9.6-1.7 -15.2 1.7zM415.8 169.1l15-1.9 -11.4-1.9 -14.9 1.8zM393.8 165.2l14.8-1.7 -10.3-1.7 -14.7 1.6zM442.8 169.2l14.3-1.9 -12.1-1.9 -14.2 1.8zM419.4 165.3l14.2-1.7 -10.9-1.7 -14.1 1.6zM469.9 169.3l13.6-1.9 -12.8-1.9 -13.6 1.8zM445 165.4l13.6-1.7 -11.5-1.8 -13.5 1.7zM497 169.4l13-1.9 -13.5-1.9 -13 1.8zM470.7 165.5l13-1.8 -12.2-1.7 -12.9 1.7zM524.2 169.5l12.3-2 -14.2-1.9 -12.3 1.9zM496.5 165.6l12.3-1.8 -12.8-1.7 -12.3 1.6zM471.5 162l12.3-1.6 -11.6-1.5 -12.3 1.5zM551.5 169.6l11.6-2 -14.9-1.9 -11.7 1.8zM522.3 165.6l11.7-1.7 -13.4-1.8 -11.8 1.7zM496 162.1l11.8-1.6 -12.2-1.6 -11.8 1.5zM578.8 169.7l10.9-2 -15.6-1.9 -11 1.8zM548.2 165.7l11.1-1.7 -14.1-1.8 -11.2 1.7zM520.6 162.1l11.2-1.5 -12.8-1.6 -11.2 1.5zM606.2 169.7l10.2-1.9 -16.3-1.9 -10.4 1.8zM574.1 165.8l10.5-1.8 -14.8-1.7 -10.5 1.7zM545.2 162.2l10.6-1.6 -13.3-1.5 -10.7 1.5zM633.6 169.8l9.6-1.9 -17.1-2 -9.7 1.9zM600.1 165.9l9.8-1.8 -15.4-1.7 -9.9 1.6zM569.8 162.3l10.1-1.6 -13.9-1.6 -10.2 1.5zM661.2 169.9l8.8-1.9 -17.8-2 -9 1.9zM626.1 165.9l9.2-1.7 -16-1.8 -9.4 1.7zM594.5 162.4l9.6-1.6 -14.6-1.6 -9.6 1.5zM688.7 170l8.2-2 -18.5-1.9 -8.4 1.9zM652.2 166l8.6-1.7 -16.7-1.8 -8.8 1.7zM619.3 162.4l9-1.6 -15.2-1.6 -9 1.6zM716.4 170.1l7.4-2 -19.2-1.9 -7.7 1.8zM678.4 166.1l7.9-1.8 -17.3-1.7 -8.2 1.7zM644.1 162.5l8.4-1.6 -15.7-1.6 -8.5 1.5zM744.1 170.2l6.7-2 -20-1.9 -7 1.8zM704.6 166.2l7.3-1.8 -18-1.8 -7.6 1.7zM669 162.6l7.8-1.6 -16.3-1.6 -8 1.5zM771.9 170.3l6-2 -20.7-2 -6.4 1.9zM730.8 166.3l6.7-1.8 -18.6-1.8 -7 1.7zM693.9 162.6l7.2-1.6 -16.9-1.6 -7.4 1.6zM799.7 170.4l5.3-2 -21.5-2 -5.6 1.9zM757.2 166.3l6-1.7 -19.3-1.8 -6.4 1.7zM718.9 162.7l6.6-1.6 -17.5-1.6 -6.9 1.5zM827.6 170.5l4.6-2 -22.2-2 -5 1.9zM783.5 166.4l5.5-1.8 -20-1.7 -5.8 1.7zM743.9 162.8l6.1-1.6 -18.1-1.6 -6.4 1.5zM855.6 170.5l3.8-1.9 -22.9-2 -4.3 1.9zM810 166.5l4.8-1.8 -20.7-1.8 -5.1 1.7zM769 162.9l5.5-1.7 -18.7-1.6 -5.8 1.6zM883.6 170.6l3.1-2 -23.6-1.9 -3.7 1.9zM836.5 166.6l4.1-1.8 -21.3-1.8 -4.5 1.7zM794.1 162.9l4.9-1.6 -19.3-1.6 -5.2 1.5zM911.7 170.7l2.4-2 -24.4-2 -3 1.9zM863.1 166.7l3.4-1.8 -22-1.8 -3.9 1.7zM819.3 163l4.3-1.6 -19.9-1.6 -4.7 1.5zM939.9 170.8l1.6-2 -25.1-2 -2.3 1.9zM889.7 166.7l2.8-1.8 -22.7-1.7 -3.3 1.7zM844.5 163.1l3.8-1.6 -20.6-1.7 -4.1 1.6zM968.1 170.9l.9-2 -25.9-2 -1.6 1.9zM916.4 166.8l2.1-1.8 -23.3-1.8 -2.7 1.7zM869.8 163.2l3.1-1.7 -21.1-1.6 -3.5 1.6zM943.1 166.9l1.5-1.8 -24.1-1.8 -2 1.7zM895.2 163.2l2.5-1.6 -21.8-1.6 -3 1.5zM969.9 167l.8-1.8 -24.7-1.8 -1.4 1.7zM920.5 163.3l2-1.6 -22.4-1.7 -2.4 1.6zM946 163.4l1.3-1.7 -22.9-1.6 -1.9 1.6zM971.5 163.5l.7-1.7 -23.6-1.6 -1.3 1.5z"/>
<path fill="#6b7588" d="M-8.1 160.6l23-1.5 -.5-1.5 -22.5 1.4zM-8.1 157.5l22-1.3 -.5-1.4 -21.5 1.3zM-8 154.7l20.9-1.2 -.4-1.3 -20.5 1.2zM15.4 160.7l22.5-1.5 -1.1-1.5 -21.9 1.4zM14.4 157.6l21.4-1.4 -.9-1.4 -21 1.4zM13.4 154.8l20.5-1.3 -.8-1.2 -20.2 1.2zM39 160.8l21.9-1.6 -1.6-1.5 -21.4 1.5zM36.8 157.7l21-1.4 -1.4-1.4 -20.6 1.3zM34.9 154.8l20.1-1.2 -1.3-1.3 -19.8 1.2zM62.6 160.8l21.4-1.5 -2.1-1.5 -21 1.4zM59.3 157.7l20.6-1.4 -2-1.4 -20.1 1.4zM56.4 154.9l19.7-1.3 -1.8-1.2 -19.3 1.2zM86.3 160.9l20.9-1.5 -2.7-1.6 -20.5 1.5zM81.9 157.8l20.1-1.4 -2.5-1.4 -19.6 1.3zM77.9 154.9l19.3-1.2 -2.2-1.3 -18.9 1.2zM110 161l20.4-1.6 -3.3-1.5 -19.9 1.5zM104.5 157.8l19.6-1.3 -3-1.4 -19.1 1.3zM99.5 155l18.8-1.3 -2.6-1.2 -18.5 1.2zM133.7 161l19.9-1.5 -3.8-1.5 -19.4 1.4zM127.1 157.9l19.1-1.4 -3.4-1.4 -18.7 1.4zM121.1 155.1l18.4-1.3 -3.1-1.3 -18.1 1.2zM157.5 161.1l19.4-1.5 -4.3-1.6 -19 1.5zM149.8 158l18.7-1.4 -4-1.4 -18.3 1.3zM142.8 155.1l18-1.3 -3.6-1.2 -17.7 1.2zM181.4 161.2l18.8-1.6 -4.9-1.5 -18.4 1.5zM172.6 158l18.1-1.4 -4.4-1.4 -17.8 1.4zM164.5 155.2l17.6-1.3 -4.1-1.3 -17.2 1.2zM205.3 161.2l18.3-1.5 -5.4-1.5 -18 1.4zM195.3 158.1l17.7-1.4 -4.9-1.4 -17.4 1.3zM186.3 155.2l17.1-1.2 -4.5-1.3 -16.8 1.2zM229.2 161.3l17.8-1.5 -6-1.6 -17.4 1.5zM218.2 158.2l17.2-1.4 -5.5-1.5 -16.9 1.4zM208.1 155.3l16.6-1.3 -4.9-1.3 -16.4 1.3zM253.2 161.4l17.3-1.6 -6.5-1.5 -17 1.5zM241 158.2l16.7-1.4 -5.9-1.4 -16.4 1.4zM229.9 155.3l16.2-1.2 -5.4-1.3 -16 1.2zM277.3 161.4l16.7-1.5 -7.1-1.6 -16.4 1.5zM264 158.3l16.2-1.4 -6.5-1.4 -16 1.3zM251.8 155.4l15.8-1.3 -5.9-1.3 -15.6 1.3zM301.4 161.5l16.1-1.5 -7.6-1.6 -15.9 1.5zM286.9 158.3l15.7-1.4 -6.9-1.4 -15.5 1.4zM273.7 155.5l15.3-1.3 -6.3-1.3 -15.1 1.2zM325.5 161.6l15.7-1.6 -8.2-1.5 -15.5 1.5zM309.9 158.4l15.2-1.4 -7.4-1.4 -15.1 1.3zM295.7 155.5l14.8-1.3 -6.8-1.3 -14.7 1.3zM349.7 161.7l15.1-1.6 -8.7-1.6 -14.9 1.5zM333 158.5l14.7-1.4 -8-1.5 -14.6 1.4zM317.7 155.6l14.4-1.3 -7.3-1.3 -14.3 1.2zM374 161.7l14.5-1.5 -9.3-1.6 -14.4 1.5zM356.1 158.5l14.2-1.4 -8.5-1.4 -14.1 1.4zM339.7 155.6l14-1.3 -7.8-1.3 -13.8 1.3zM398.3 161.8l14-1.6 -9.9-1.5 -13.9 1.5zM379.2 158.6l13.7-1.4 -9-1.4 -13.6 1.3zM361.8 155.7l13.5-1.3 -8.2-1.3 -13.4 1.2zM422.7 161.9l13.4-1.6 -10.5-1.6 -13.3 1.5zM402.4 158.7l13.2-1.5 -9.5-1.4 -13.2 1.4zM383.9 155.8l13.1-1.3 -8.7-1.4 -13 1.3zM447.1 161.9l12.8-1.5 -11-1.6 -12.8 1.5zM425.6 158.7l12.8-1.4 -10.1-1.4 -12.7 1.3zM406.1 155.8l12.6-1.3 -9.2-1.3 -12.5 1.3zM448.9 158.8l12.2-1.4 -10.5-1.5 -12.2 1.4zM428.3 155.9l12.2-1.3 -9.7-1.3 -12.1 1.2zM472.2 158.9l11.8-1.5 -11.1-1.4 -11.8 1.4zM450.6 155.9l11.7-1.3 -10.2-1.3 -11.6 1.3zM495.6 158.9l11.2-1.4 -11.6-1.5 -11.2 1.4zM472.9 156l11.2-1.3 -10.6-1.3 -11.2 1.2zM519 159l10.7-1.5 -12.1-1.4 -10.8 1.4zM495.2 156l10.8-1.3 -11.2-1.3 -10.7 1.3zM542.5 159.1l10.2-1.5 -12.7-1.4 -10.3 1.3zM517.6 156.1l10.3-1.3 -11.6-1.3 -10.3 1.2zM566 159.1l9.7-1.4 -13.2-1.5 -9.8 1.4zM540 156.2l9.8-1.4 -12.1-1.3 -9.8 1.3zM589.5 159.2l9.2-1.5 -13.7-1.4 -9.3 1.4zM562.5 156.2l9.3-1.3 -12.5-1.3 -9.5 1.2zM613.1 159.2l8.7-1.4 -14.3-1.5 -8.8 1.4zM585 156.3l8.9-1.3 -13.1-1.4 -9 1.3zM636.8 159.3l8.2-1.4 -14.9-1.5 -8.3 1.4zM607.5 156.3l8.4-1.3 -13.5-1.3 -8.5 1.3zM660.5 159.4l7.6-1.5 -15.3-1.4 -7.8 1.4zM630.1 156.4l8-1.3 -14.1-1.4 -8.1 1.3zM684.2 159.4l7.2-1.4 -16-1.5 -7.3 1.4zM652.8 156.5l7.4-1.4 -14.5-1.3 -7.6 1.3zM708 159.5l6.6-1.5 -16.4-1.4 -6.8 1.4zM675.4 156.5l7-1.3 -15-1.3 -7.2 1.2zM731.9 159.6l6-1.5 -17-1.5 -6.3 1.4zM698.2 156.6l6.5-1.4 -15.6-1.3 -6.7 1.3zM755.8 159.6l5.5-1.4 -17.6-1.5 -5.8 1.4zM720.9 156.6l6.1-1.3 -16.1-1.3 -6.2 1.2zM779.7 159.7l5-1.5 -18.1-1.4 -5.3 1.4zM743.7 156.7l5.6-1.3 -16.6-1.4 -5.7 1.3zM803.7 159.8l4.5-1.5 -18.7-1.5 -4.8 1.4zM766.6 156.8l5.1-1.4 -17.1-1.3 -5.3 1.3zM827.7 159.8l4-1.4 -19.3-1.5 -4.2 1.4zM789.5 156.8l4.6-1.3 -17.6-1.4 -4.8 1.3zM851.8 159.9l3.4-1.5 -19.8-1.5 -3.7 1.5zM812.4 156.9l4.1-1.4 -18-1.3 -4.4 1.3zM875.9 160l2.9-1.5 -20.3-1.5 -3.3 1.4zM835.4 156.9l3.6-1.3 -18.6-1.4 -3.9 1.3zM900.1 160l2.3-1.4 -20.9-1.5 -2.7 1.4zM858.5 157l3.1-1.3 -19.1-1.4 -3.5 1.3zM924.4 160.1l1.7-1.5 -21.4-1.5 -2.3 1.5zM881.5 157.1l2.6-1.4 -19.6-1.3 -2.9 1.3zM842.5 154.3l3.3-1.2 -18-1.3 -3.6 1.2zM948.6 160.2l1.3-1.5 -22.1-1.5 -1.7 1.4zM904.7 157.1l2.1-1.3 -20.1-1.4 -2.6 1.3zM864.5 154.4l2.9-1.3 -18.4-1.2 -3.2 1.2zM973 160.2l.6-1.5 -22.6-1.4 -1.1 1.4zM927.8 157.2l1.6-1.4 -20.6-1.3 -2 1.3zM886.7 154.4l2.4-1.2 -19-1.3 -2.7 1.2zM951 157.3l1.1-1.4 -21.1-1.4 -1.6 1.3zM908.8 154.5l1.9-1.3 -19.3-1.2 -2.3 1.2zM974.3 157.3l.6-1.4 -21.7-1.3 -1.1 1.3zM931 154.5l1.5-1.2 -19.9-1.3 -1.9 1.2zM953.2 154.6l1.1-1.3 -20.4-1.2 -1.4 1.2zM975.5 154.6l.6-1.2 -20.9-1.3 -.9 1.2z"/>
<path fill="#6b7487" d="M-8 152.1l20.1-1.1 -.4-1.2 -19.7 1.1zM-8 149.8l19.3-1.1 -.4-1.1 -18.9 1.1zM12.5 152.2l19.7-1.2 -.8-1.1 -19.3 1.1zM11.7 149.8l18.9-1 -.7-1.1 -18.6 1zM33.1 152.3l19.3-1.2 -1.2-1.2 -19 1.1zM31.4 149.9l18.6-1.1 -1.1-1.1 -18.3 1.1zM53.7 152.3l18.9-1.2 -1.7-1.1 -18.5 1.1zM51.2 149.9l18.2-1 -1.5-1.1 -17.9 1zM74.3 152.4l18.5-1.2 -2-1.2 -18.2 1.1zM70.9 150l17.9-1.1 -1.9-1.1 -17.5 1.1zM95 152.4l18.1-1.2 -2.5-1.1 -17.8 1.1zM90.8 150l17.5-1.1 -2.3-1 -17.2 1zM115.7 152.5l17.7-1.2 -2.9-1.2 -17.4 1.1zM110.6 150.1l17.2-1.1 -2.7-1.1 -16.8 1zM136.4 152.5l17.4-1.2 -3.4-1.1 -17 1.1zM130.5 150.1l16.8-1.1 -3.1-1 -16.4 1zM157.2 152.6l16.9-1.2 -3.7-1.2 -16.6 1.1zM150.4 150.2l16.4-1.1 -3.4-1.1 -16.1 1zM178 152.6l16.5-1.2 -4.1-1.1 -16.3 1.1zM170.4 150.2l16-1.1 -3.8-1.1 -15.8 1.1zM198.9 152.7l16.1-1.2 -4.6-1.2 -15.9 1.1zM190.4 150.3l15.7-1.1 -4.3-1.1 -15.4 1zM219.8 152.7l15.7-1.2 -5-1.1 -15.5 1.1zM210.4 150.3l15.3-1.1 -4.6-1.1 -15 1.1zM201.8 148.1l14.9-1 -4.3-1 -14.6 .9zM240.7 152.8l15.3-1.2 -5.4-1.2 -15.1 1.1zM230.5 150.4l14.9-1.1 -5-1.1 -14.7 1zM221.1 148.1l14.5-1 -4.6-1 -14.3 1zM261.7 152.8l14.9-1.2 -5.9-1.1 -14.7 1.1zM250.6 150.4l14.5-1.1 -5.4-1.1 -14.3 1.1zM240.4 148.2l14.2-1 -5-1 -14 .9zM282.7 152.9l14.5-1.2 -6.3-1.2 -14.3 1.1zM270.7 150.5l14.2-1.1 -5.8-1.1 -14 1zM259.7 148.2l13.8-1 -5.3-1 -13.6 1zM303.7 152.9l14.1-1.2 -6.7-1.1 -13.9 1.1zM290.9 150.5l13.8-1.1 -6.2-1.1 -13.6 1.1zM279.1 148.3l13.5-1 -5.8-1.1 -13.3 1zM324.8 153l13.7-1.2 -7.2-1.2 -13.5 1.1zM311.1 150.6l13.4-1.1 -6.6-1.1 -13.2 1zM298.5 148.3l13.1-1 -6.1-1 -12.9 1zM345.9 153l13.3-1.2 -7.6-1.1 -13.1 1.1zM331.3 150.6l13.1-1.1 -7-1.1 -12.9 1.1zM317.9 148.4l12.8-1 -6.5-1.1 -12.6 1zM367.1 153.1l12.8-1.2 -8-1.2 -12.7 1.1zM351.6 150.7l12.6-1.1 -7.3-1.1 -12.5 1zM337.4 148.4l12.4-1 -6.8-1 -12.3 1zM388.3 153.1l12.4-1.1 -8.4-1.2 -12.4 1.1zM371.9 150.7l12.3-1.1 -7.8-1.1 -12.2 1.1zM356.9 148.5l12-1.1 -7.2-1 -11.9 1zM409.5 153.2l12-1.2 -8.9-1.2 -11.9 1.2zM392.3 150.8l11.8-1.1 -8.2-1.2 -11.7 1.1zM376.4 148.5l11.7-1 -7.6-1 -11.6 .9zM430.8 153.3l11.6-1.2 -9.3-1.2 -11.6 1.1zM412.6 150.8l11.5-1.1 -8.6-1.1 -11.4 1.1zM395.9 148.5l11.4-1 -7.9-1 -11.3 1zM452.1 153.3l11.2-1.2 -9.8-1.2 -11.1 1.2zM433.1 150.9l11-1.2 -8.9-1.1 -11.1 1.1zM415.5 148.6l11-1 -8.3-1.1 -10.9 1zM473.5 153.4l10.7-1.2 -10.2-1.2 -10.7 1.1zM453.5 150.9l10.7-1.1 -9.4-1.1 -10.7 1zM435.2 148.6l10.6-1 -8.7-1 -10.6 1zM494.8 153.4l10.4-1.2 -10.7-1.2 -10.3 1.2zM474 151l10.3-1.2 -9.8-1.1 -10.3 1.1zM454.8 148.7l10.3-1 -9.1-1.1 -10.2 1zM516.3 153.5l9.9-1.2 -11.1-1.2 -9.9 1.1zM494.5 151l9.9-1.1 -10.2-1.1 -9.9 1zM474.5 148.7l9.9-1 -9.4-1 -9.9 1zM537.7 153.5l9.5-1.2 -11.5-1.2 -9.5 1.2zM515.1 151.1l9.5-1.2 -10.6-1.1 -9.6 1.1zM494.2 148.8l9.6-1.1 -9.9-1 -9.5 1zM559.3 153.6l9-1.2 -12-1.2 -9.1 1.1zM535.7 151.1l9.1-1.1 -11-1.1 -9.2 1zM514 148.8l9.2-1 -10.2-1 -9.2 .9zM580.8 153.6l8.6-1.2 -12.4-1.2 -8.7 1.2zM556.3 151.2l8.7-1.2 -11.4-1.1 -8.8 1.1zM533.8 148.9l8.8-1.1 -10.6-1 -8.8 1zM602.4 153.7l8.2-1.2 -12.9-1.2 -8.3 1.1zM577 151.2l8.3-1.1 -11.9-1.1 -8.4 1zM553.6 148.9l8.4-1 -10.9-1.1 -8.5 1zM624 153.7l7.8-1.2 -13.4-1.2 -7.8 1.2zM597.7 151.3l7.9-1.2 -12.3-1.1 -8 1.1zM573.4 149l8.1-1.1 -11.3-1 -8.2 1zM645.7 153.8l7.3-1.2 -13.8-1.2 -7.4 1.1zM618.4 151.3l7.5-1.1 -12.7-1.1 -7.6 1zM593.3 149l7.7-1 -11.7-1.1 -7.8 1zM667.4 153.9l6.9-1.3 -14.3-1.2 -7 1.2zM639.2 151.4l7.1-1.2 -13.1-1.1 -7.3 1.1zM613.2 149.1l7.4-1.1 -12.1-1 -7.5 1zM689.1 153.9l6.5-1.2 -14.8-1.2 -6.5 1.1zM660 151.4l6.7-1.1 -13.5-1.2 -6.9 1.1zM633.2 149.1l7-1 -12.5-1.1 -7.1 1zM710.9 154l6-1.3 -15.2-1.2 -6.1 1.2zM680.8 151.5l6.4-1.2 -14-1.1 -6.5 1.1zM653.2 149.1l6.6-1 -12.9-1 -6.7 1zM732.7 154l5.6-1.2 -15.7-1.2 -5.7 1.1zM701.7 151.5l6-1.1 -14.4-1.2 -6.1 1.1zM673.2 149.2l6.2-1.1 -13.3-1 -6.3 1zM754.6 154.1l5.1-1.3 -16.1-1.2 -5.3 1.2zM722.6 151.6l5.6-1.2 -14.9-1.1 -5.6 1.1zM693.3 149.2l5.8-1 -13.7-1.1 -6 1zM776.5 154.1l4.7-1.2 -16.6-1.2 -4.9 1.1zM743.6 151.6l5.1-1.1 -15.2-1.2 -5.3 1.1zM713.3 149.3l5.5-1.1 -14-1 -5.7 1zM798.5 154.2l4.2-1.3 -17.1-1.2 -4.4 1.2zM764.6 151.7l4.7-1.2 -15.7-1.1 -4.9 1.1zM733.5 149.3l5.1-1 -14.5-1.1 -5.3 1zM820.4 154.2l3.8-1.2 -17.5-1.2 -4 1.1zM785.6 151.7l4.3-1.1 -16.1-1.2 -4.5 1.1zM753.6 149.4l4.8-1.1 -14.9-1 -4.9 1zM806.7 151.8l3.9-1.2 -16.6-1.1 -4.1 1.1zM773.8 149.4l4.4-1 -15.3-1.1 -4.5 1zM827.8 151.8l3.5-1.1 -17-1.2 -3.7 1.1zM794 149.5l4-1.1 -15.6-1 -4.2 1zM849 151.9l3-1.2 -17.4-1.1 -3.3 1.1zM814.3 149.5l3.6-1 -16.1-1.1 -3.8 1zM870.1 151.9l2.7-1.1 -17.9-1.2 -2.9 1.1zM834.6 149.6l3.2-1.1 -16.5-1.1 -3.4 1.1zM891.4 152l2.2-1.2 -18.3-1.1 -2.5 1.1zM854.9 149.6l2.9-1 -16.9-1.1 -3.1 1zM912.6 152l1.8-1.1 -18.7-1.2 -2.1 1.1zM875.3 149.7l2.4-1.1 -17.2-1.1 -2.7 1.1zM933.9 152.1l1.4-1.2 -19.2-1.1 -1.7 1.1zM895.7 149.7l2-1.1 -17.6-1 -2.4 1zM955.2 152.1l1-1.1 -19.6-1.2 -1.3 1.1zM916.1 149.8l1.7-1.1 -18.1-1.1 -2 1zM976.6 152.2l.5-1.2 -20-1.1 -.9 1.1zM936.6 149.8l1.3-1.1 -18.5-1 -1.6 1zM957.1 149.9l.9-1.1 -18.9-1.1 -1.2 1z"/>
<path fill="#6a7486" d="M-8 147.6l18.6-1 -.4-1 -18.2 1zM-8 145.6l17.9-.9 -.3-.9 -17.6 .8zM-8 143.7l17.3-.8 -.3-.9 -17 .8zM10.9 147.6l18.3-.9 -.7-1 -17.9 .9zM10.2 145.6l17.6-.9 -.6-.9 -17.3 .9zM9.6 143.8l16.9-.9 -.6-.8 -16.6 .8zM29.9 147.7l17.9-1 -1.1-1 -17.5 1zM28.5 145.7l17.2-.9 -.9-1 -17 .9zM27.2 143.8l16.6-.9 -.9-.8 -16.4 .8zM48.9 147.7l17.5-1 -1.4-.9 -17.2 .9zM46.7 145.7l17-.9 -1.3-.9 -16.7 .9zM44.8 143.8l16.3-.8 -1.2-.9 -16.1 .8zM67.9 147.8l17.2-1 -1.8-1 -16.9 .9zM65 145.8l16.7-1 -1.7-.9 -16.3 .9zM62.4 143.9l16.1-.9 -1.5-.8 -15.9 .8zM86.9 147.8l16.9-1 -2.1-1 -16.6 1zM83.3 145.8l16.4-.9 -2-1 -16 .9zM80 143.9l15.8-.8 -1.8-.9 -15.5 .8zM106 147.9l16.5-1 -2.4-1 -16.3 .9zM101.7 145.8l16-.9 -2.3-.9 -15.7 .9zM97.7 143.9l15.5-.8 -2.1-.9 -15.3 .9zM125.1 147.9l16.2-1 -2.8-1 -16 1zM120.1 145.9l15.7-.9 -2.6-1 -15.5 .9zM115.4 144l15.3-.9 -2.5-.8 -15 .8zM144.2 148l15.9-1 -3.2-1 -15.6 .9zM138.5 145.9l15.4-.9 -3-.9 -15.1 .9zM133.2 144l14.9-.8 -2.7-.9 -14.7 .8zM163.4 148l15.5-1 -3.5-1 -15.3 1zM156.9 146l15.1-1 -3.3-.9 -14.8 .9zM150.9 144.1l14.7-.9 -3.1-.9 -14.4 .9zM182.6 148l15.2-1 -3.9-1 -15 1zM175.4 146l14.8-.9 -3.7-1 -14.5 .9zM168.7 144.1l14.4-.9 -3.4-.8 -14.1 .8zM193.9 146l14.4-.9 -3.9-.9 -14.2 .9zM186.5 144.1l14.1-.8 -3.7-.9 -13.8 .8zM212.4 146.1l14.1-.9 -4.2-1 -14 .9zM204.4 144.2l13.7-.9 -4-.9 -13.5 .9zM231 146.1l13.8-.9 -4.6-.9 -13.7 .9zM222.3 144.2l13.4-.8 -4.3-.9 -13.3 .8zM249.6 146.2l13.4-1 -4.9-.9 -13.3 .9zM240.2 144.3l13.1-.9 -4.6-.9 -13 .9zM268.2 146.2l13.1-.9 -5.3-1 -13 .9zM258.1 144.3l12.8-.9 -4.9-.8 -12.7 .8zM286.8 146.2l12.9-.9 -5.7-.9 -12.7 .9zM276 144.3l12.6-.8 -5.3-.9 -12.4 .8zM305.5 146.3l12.5-.9 -6-1 -12.3 .9zM294 144.4l12.3-.9 -5.6-.9 -12.1 .9zM324.2 146.3l12.2-.9 -6.3-1 -12.1 1zM312 144.4l12-.9 -5.9-.8 -11.8 .8zM343 146.4l11.8-1 -6.7-.9 -11.7 .9zM330.1 144.4l11.6-.8 -6.2-.9 -11.5 .8zM361.7 146.4l11.5-.9 -7-1 -11.4 .9zM348.1 144.5l11.4-.9 -6.5-.9 -11.3 .9zM380.5 146.5l11.2-1 -7.3-.9 -11.2 .9zM366.2 144.5l11.1-.8 -6.9-.9 -10.9 .8zM399.4 146.5l10.8-.9 -7.7-1 -10.8 .9zM384.4 144.6l10.7-.9 -7.2-.9 -10.6 .9zM418.2 146.5l10.5-.9 -8-1 -10.5 1zM402.5 144.6l10.4-.9 -7.5-.9 -10.3 .9zM437.1 146.6l10.2-1 -8.4-.9 -10.2 .9zM420.7 144.6l10.1-.8 -7.8-.9 -10.1 .8zM456 146.6l9.9-.9 -8.8-1 -9.8 .9zM438.9 144.7l9.8-.9 -8.1-.9 -9.8 .9zM475 146.7l9.5-1 -9.1-.9 -9.5 .9zM457.1 144.7l9.5-.9 -8.4-.8 -9.5 .8zM493.9 146.7l9.2-.9 -9.4-1 -9.2 .9zM475.4 144.8l9.2-.9 -8.8-.9 -9.2 .8zM513 146.8l8.8-1 -9.8-1 -8.9 1zM493.7 144.8l8.9-.9 -9.2-.9 -8.8 .9zM532 146.8l8.5-1 -10.1-.9 -8.6 .9zM512 144.8l8.6-.8 -9.5-.9 -8.5 .8zM551.1 146.8l8.1-.9 -10.5-1 -8.2 .9zM530.4 144.9l8.2-.9 -9.8-.9 -8.2 .9zM511.1 143.1l8.3-.9 -9.1-.8 -8.3 .8zM570.2 146.9l7.8-1 -10.9-.9 -7.9 .9zM548.7 144.9l8-.9 -10.1-.9 -8 .9zM528.8 143.1l8-.8 -9.4-.9 -8 .8zM589.3 146.9l7.5-.9 -11.2-1 -7.6 .9zM567.1 145l7.7-.9 -10.5-.9 -7.6 .8zM546.6 143.1l7.7-.8 -9.8-.8 -7.7 .8zM608.5 147l7.1-1 -11.6-1 -7.2 1zM585.6 145l7.3-.9 -10.8-.9 -7.3 .9zM564.3 143.2l7.4-.9 -10-.8 -7.4 .8zM627.7 147l6.8-1 -12-.9 -6.9 .9zM604 145l7-.9 -11.1-.9 -7 .9zM582.1 143.2l7.1-.8 -10.3-.9 -7.2 .8zM646.9 147.1l6.5-1 -12.3-1 -6.6 .9zM622.5 145.1l6.7-.9 -11.4-.9 -6.8 .8zM599.9 143.2l6.8-.8 -10.6-.8 -6.9 .8zM666.1 147.1l6.2-1 -12.7-.9 -6.2 .9zM641.1 145.1l6.3-.9 -11.8-.9 -6.4 .9zM617.8 143.3l6.5-.8 -11-.9 -6.6 .8zM685.4 147.1l5.8-.9 -13-1 -5.9 .9zM659.6 145.2l6-.9 -12.1-.9 -6.1 .8zM635.6 143.3l6.2-.8 -11.2-.9 -6.3 .9zM704.8 147.2l5.4-1 -13.4-1 -5.6 1zM678.2 145.2l5.7-.9 -12.5-.9 -5.8 .9zM653.5 143.4l5.9-.9 -11.5-.8 -6.1 .8zM724.1 147.2l5.1-.9 -13.8-1 -5.2 .9zM696.8 145.2l5.4-.9 -12.8-.9 -5.5 .9zM671.4 143.4l5.7-.8 -11.9-.9 -5.8 .8zM743.5 147.3l4.7-1 -14.1-1 -4.9 1zM715.4 145.3l5.1-.9 -13.1-.9 -5.2 .8zM689.4 143.4l5.3-.8 -12.2-.9 -5.4 .9zM762.9 147.3l4.4-1 -14.5-.9 -4.6 .9zM734.1 145.3l4.7-.9 -13.4-.9 -4.9 .9zM707.4 143.5l5-.9 -12.6-.8 -5.1 .8zM782.4 147.4l4-1 -14.9-1 -4.2 .9zM752.8 145.4l4.4-.9 -13.8-1 -4.6 .9zM725.4 143.5l4.7-.8 -12.9-.9 -4.8 .8zM801.8 147.4l3.7-1 -15.2-1 -3.9 1zM771.5 145.4l4.1-.9 -14.1-.9 -4.3 .9zM743.4 143.5l4.4-.8 -13.2-.8 -4.5 .8zM821.3 147.4l3.4-.9 -15.6-1 -3.6 .9zM790.3 145.4l3.7-.9 -14.5-.9 -3.9 .9zM761.5 143.6l4.1-.9 -13.5-.8 -4.3 .8zM840.9 147.5l3-1 -16-1 -3.2 1zM809.1 145.5l3.4-.9 -14.9-.9 -3.6 .8zM779.5 143.6l3.8-.8 -13.8-.9 -3.9 .8zM860.5 147.5l2.6-.9 -16.4-1 -2.8 .9zM827.9 145.5l3.1-.9 -15.2-.9 -3.3 .9zM797.6 143.7l3.5-.9 -14.1-.8 -3.7 .8zM880.1 147.6l2.2-1 -16.7-1 -2.5 1zM846.7 145.6l2.8-.9 -15.5-1 -3 .9zM815.8 143.7l3.2-.9 -14.5-.8 -3.4 .8zM899.7 147.6l1.9-1 -17.1-1 -2.2 1zM865.6 145.6l2.4-.9 -15.9-.9 -2.6 .9zM834 143.7l2.8-.8 -14.7-.9 -3.1 .8zM919.4 147.7l1.5-1 -17.5-1 -1.8 .9zM884.5 145.6l2.1-.9 -16.2-.9 -2.4 .9zM852.1 143.8l2.6-.9 -15.1-.8 -2.8 .8zM939.1 147.7l1.2-1 -17.9-1 -1.5 1zM903.4 145.7l1.8-.9 -16.6-1 -2 .9zM870.4 143.8l2.2-.8 -15.4-.9 -2.5 .8zM958.8 147.8l.8-1 -18.2-1 -1.1 .9zM922.4 145.7l1.4-.9 -16.9-.9 -1.7 .9zM888.6 143.8l2-.8 -15.8-.9 -2.2 .9zM941.4 145.8l1.1-.9 -17.3-1 -1.4 .9zM906.9 143.9l1.6-.9 -16-.8 -1.9 .8zM960.4 145.8l.8-.9 -17.7-.9 -1 .9zM925.2 143.9l1.3-.8 -16.4-.9 -1.6 .8zM943.5 144l1.1-.9 -16.8-.9 -1.3 .9zM961.9 144l.7-.9 -17.1-.8 -.9 .8z"/>
<path fill="#697386" d="M-8 142l16.7-.8 -.3-.8 -16.3 .8zM-7.9 140.4l16.1-.8 -.3-.7 -15.8 .7zM9 142l16.4-.8 -.6-.8 -16.1 .8zM8.4 140.4l15.9-.7 -.6-.8 -15.5 .7zM25.9 142.1l16.2-.8 -.9-.8 -15.8 .7zM24.8 140.4l15.6-.7 -.8-.8 -15.3 .8zM23.7 138.9l15.2-.7 -.8-.7 -14.9 .7zM42.9 142.1l15.9-.8 -1.2-.8 -15.5 .8zM41.2 140.5l15.4-.8 -1.1-.7 -15.1 .7zM39.6 138.9l14.9-.7 -1-.7 -14.6 .7zM59.9 142.1l15.6-.8 -1.4-.8 -15.3 .8zM57.6 140.5l15.1-.8 -1.3-.7 -14.8 .7zM55.5 139l14.6-.7 -1.2-.7 -14.4 .6zM77 142.2l15.3-.8 -1.7-.8 -15.1 .7zM74.1 140.5l14.8-.7 -1.5-.8 -14.7 .7zM71.4 139l14.4-.7 -1.5-.7 -14.2 .7zM94 142.2l15.1-.8 -2-.8 -14.8 .8zM90.6 140.6l14.6-.8 -1.9-.7 -14.4 .7zM87.4 139l14.1-.7 -1.7-.7 -14 .7zM111.1 142.2l14.8-.8 -2.3-.8 -14.5 .8zM107.1 140.6l14.3-.8 -2.1-.7 -14.1 .7zM103.3 139.1l13.9-.7 -1.9-.7 -13.8 .6zM128.2 142.3l14.5-.8 -2.5-.8 -14.3 .7zM123.6 140.6l14.1-.7 -2.4-.8 -13.9 .7zM119.3 139.1l13.7-.7 -2.3-.7 -13.5 .7zM145.4 142.3l14.2-.8 -2.9-.8 -14 .8zM140.2 140.7l13.8-.8 -2.7-.7 -13.6 .7zM135.3 139.1l13.4-.7 -2.4-.7 -13.3 .7zM162.5 142.3l14-.8 -3.2-.8 -13.7 .8zM156.7 140.7l13.6-.8 -2.9-.7 -13.4 .7zM151.3 139.2l13.2-.7 -2.7-.8 -13.1 .7zM179.7 142.4l13.7-.8 -3.5-.8 -13.4 .7zM173.3 140.7l13.3-.7 -3.2-.8 -13.1 .7zM167.4 139.2l12.9-.7 -3-.7 -12.8 .7zM196.9 142.4l13.4-.8 -3.7-.8 -13.2 .8zM189.9 140.8l13.1-.8 -3.5-.8 -12.9 .8zM183.4 139.2l12.8-.7 -3.3-.7 -12.6 .7zM214.1 142.4l13.2-.8 -4-.8 -13 .8zM206.6 140.8l12.8-.8 -3.8-.7 -12.6 .7zM199.5 139.2l12.5-.7 -3.5-.7 -12.3 .7zM231.4 142.5l12.8-.8 -4.3-.8 -12.6 .7zM223.3 140.8l12.5-.7 -4-.8 -12.4 .7zM215.6 139.3l12.3-.7 -3.8-.7 -12.1 .6zM248.7 142.5l12.6-.8 -4.6-.8 -12.5 .8zM239.9 140.9l12.3-.8 -4.3-.8 -12.1 .8zM231.8 139.3l12-.7 -4-.7 -11.9 .7zM266 142.6l12.3-.9 -4.9-.8 -12.1 .8zM256.7 140.9l12-.8 -4.6-.7 -11.9 .7zM247.9 139.3l11.8-.7 -4.3-.7 -11.6 .7zM283.3 142.6l12-.8 -5.1-.8 -11.9 .7zM273.4 140.9l11.8-.7 -4.9-.8 -11.6 .7zM264.1 139.4l11.5-.7 -4.5-.7 -11.4 .6zM300.7 142.6l11.7-.8 -5.4-.8 -11.7 .8zM290.2 141l11.5-.8 -5.2-.8 -11.3 .8zM280.3 139.4l11.3-.7 -4.8-.7 -11.2 .7zM318.1 142.7l11.4-.9 -5.7-.8 -11.4 .8zM307 141l11.2-.8 -5.4-.7 -11.1 .7zM296.5 139.4l11.1-.7 -5.1-.7 -10.9 .7zM335.5 142.7l11.2-.8 -6.1-.8 -11.1 .7zM323.8 141l10.9-.7 -5.6-.8 -10.9 .7zM312.8 139.5l10.8-.7 -5.3-.8 -10.7 .7zM353 142.7l10.8-.8 -6.3-.8 -10.8 .8zM340.6 141.1l10.7-.8 -6-.8 -10.6 .8zM329.1 139.5l10.5-.7 -5.6-.7 -10.4 .7zM370.4 142.8l10.6-.8 -6.7-.9 -10.5 .8zM357.5 141.1l10.4-.8 -6.2-.7 -10.4 .7zM345.3 139.5l10.3-.7 -5.8-.7 -10.2 .7zM387.9 142.8l10.3-.8 -6.9-.8 -10.3 .8zM374.3 141.1l10.2-.7 -6.5-.8 -10.1 .7zM361.7 139.6l10-.8 -6.1-.7 -10 .7zM405.4 142.8l10.1-.8 -7.3-.8 -10 .8zM391.3 141.2l9.9-.8 -6.8-.8 -9.9 .8zM378 139.6l9.8-.7 -6.4-.7 -9.7 .6zM423 142.9l9.7-.8 -7.6-.9 -9.6 .8zM408.2 141.2l9.6-.8 -7.1-.7 -9.5 .7zM394.4 139.6l9.5-.7 -6.6-.7 -9.5 .7zM440.6 142.9l9.4-.8 -7.9-.8 -9.4 .8zM425.1 141.2l9.4-.7 -7.3-.8 -9.4 .7zM410.7 139.7l9.3-.8 -6.9-.7 -9.2 .7zM458.2 143l9.1-.9 -8.2-.8 -9.1 .8zM442.1 141.3l9.1-.8 -7.6-.8 -9.1 .8zM427.2 139.7l9-.7 -7.2-.8 -9 .7zM475.8 143l8.9-.8 -8.5-.9 -8.9 .8zM459.1 141.3l8.9-.8 -8-.7 -8.8 .7zM443.6 139.7l8.8-.7 -7.4-.7 -8.8 .7zM493.4 143l8.6-.8 -8.8-.8 -8.5 .8zM476.2 141.3l8.5-.7 -8.2-.8 -8.5 .7zM460 139.8l8.6-.8 -7.7-.7 -8.5 .7zM493.2 141.4l8.3-.8 -8.5-.8 -8.3 .8zM476.5 139.8l8.3-.7 -8-.8 -8.2 .7zM510.3 141.4l8-.8 -8.8-.7 -8 .7zM493 139.8l8-.7 -8.2-.7 -8 .7zM527.4 141.4l7.8-.7 -9.1-.8 -7.8 .7zM509.5 139.9l7.8-.8 -8.5-.7 -7.8 .7zM544.5 141.5l7.5-.8 -9.3-.8 -7.5 .8zM526.1 139.9l7.5-.7 -8.8-.8 -7.5 .7zM561.7 141.5l7.2-.8 -9.7-.8 -7.2 .8zM542.7 139.9l7.2-.7 -9-.7 -7.3 .7zM578.9 141.5l6.9-.7 -9.9-.8 -7 .7zM559.2 139.9l7-.7 -9.3-.7 -7 .7zM596.1 141.6l6.6-.8 -10.2-.8 -6.7 .8zM575.9 140l6.7-.7 -9.6-.8 -6.8 .7zM613.3 141.6l6.4-.8 -10.5-.8 -6.5 .8zM592.5 140l6.5-.7 -9.9-.7 -6.5 .7zM630.6 141.6l6.1-.7 -10.9-.8 -6.1 .7zM609.2 140l6.2-.7 -10.1-.7 -6.3 .7zM647.9 141.7l5.8-.8 -11.1-.8 -5.9 .8zM625.8 140.1l6-.8 -10.4-.7 -6 .7zM665.2 141.7l5.5-.8 -11.4-.8 -5.6 .8zM642.6 140.1l5.7-.7 -10.7-.8 -5.8 .7zM682.5 141.7l5.2-.7 -11.7-.8 -5.3 .7zM659.3 140.1l5.4-.7 -10.9-.7 -5.5 .7zM699.8 141.8l5-.8 -12-.8 -5.1 .8zM676 140.2l5.2-.8 -11.2-.7 -5.3 .7zM717.2 141.8l4.7-.8 -12.3-.8 -4.8 .8zM692.8 140.2l4.9-.7 -11.4-.8 -5.1 .7zM734.6 141.9l4.4-.8 -12.5-.8 -4.6 .7zM709.6 140.2l4.7-.7 -11.8-.7 -4.8 .7zM752.1 141.9l4.1-.8 -12.9-.8 -4.3 .8zM726.5 140.3l4.4-.8 -12.1-.7 -4.5 .7zM769.5 141.9l3.9-.8 -13.2-.8 -4 .8zM743.3 140.3l4.1-.7 -12.3-.8 -4.2 .7zM787 142l3.6-.8 -13.5-.8 -3.7 .7zM760.2 140.3l3.8-.7 -12.6-.7 -4 .7zM804.5 142l3.3-.8 -13.8-.8 -3.4 .8zM777.1 140.4l3.6-.8 -12.9-.7 -3.8 .7zM822.1 142l2.9-.8 -14-.8 -3.2 .8zM794 140.4l3.3-.7 -13.1-.8 -3.5 .7zM839.6 142.1l2.7-.8 -14.4-.8 -2.9 .7zM811 140.4l3-.7 -13.4-.8 -3.3 .8zM784.2 138.9l3.3-.7 -12.6-.7 -3.5 .7zM857.2 142.1l2.4-.8 -14.7-.8 -2.6 .8zM827.9 140.5l2.8-.8 -13.7-.7 -3 .7zM800.6 138.9l3.1-.6 -12.9-.7 -3.3 .6zM874.8 142.1l2.1-.8 -15-.8 -2.3 .8zM844.9 140.5l2.5-.7 -14-.8 -2.7 .7zM817 139l2.9-.7 -13.2-.7 -3 .7zM892.5 142.2l1.8-.8 -15.3-.8 -2.1 .7zM861.9 140.5l2.3-.7 -14.3-.8 -2.5 .8zM833.4 139l2.6-.7 -13.4-.7 -2.7 .7zM910.1 142.2l1.6-.8 -15.6-.8 -1.8 .8zM879 140.6l2-.8 -14.6-.7 -2.2 .7zM849.9 139l2.4-.7 -13.7-.7 -2.6 .7zM927.8 142.2l1.3-.8 -15.9-.8 -1.5 .8zM896.1 140.6l1.7-.7 -14.9-.8 -1.9 .7zM866.4 139.1l2.1-.7 -13.9-.7 -2.3 .6zM945.5 142.3l1-.8 -16.2-.8 -1.2 .7zM913.2 140.6l1.4-.7 -15.2-.8 -1.6 .8zM882.9 139.1l1.9-.7 -14.3-.7 -2 .7zM963.3 142.3l.6-.8 -16.5-.8 -.9 .8zM930.3 140.7l1.1-.8 -15.4-.7 -1.4 .7zM899.4 139.1l1.6-.7 -14.4-.7 -1.8 .7zM947.4 140.7l.9-.7 -15.7-.8 -1.2 .7zM916 139.2l1.3-.7 -14.7-.7 -1.6 .6zM964.6 140.7l.6-.7 -16-.8 -.9 .8zM932.6 139.2l1.1-.7 -15.1-.7 -1.3 .7zM949.2 139.2l.8-.7 -15.3-.7 -1 .7zM965.8 139.3l.6-.7 -15.6-.8 -.8 .7z"/>
<path fill="#687285" d="M-7.9 138.8l15.6-.6 -.3-.7 -15.3 .6zM-7.9 137.4l15.1-.6 -.3-.7 -14.8 .6zM-7.9 136.1l14.6-.6 -.2-.6 -14.4 .6zM7.9 138.9l15.3-.7 -.4-.7 -15.1 .7zM7.4 137.5l14.9-.7 -.5-.7 -14.6 .7zM6.9 136.1l14.5-.6 -.5-.6 -14.2 .6zM22.8 137.5l14.6-.7 -.7-.6 -14.4 .6zM21.8 136.1l14.2-.6 -.6-.6 -14 .6zM38.1 137.5l14.5-.6 -1-.7 -14.2 .6zM36.7 136.2l14-.6 -.8-.7 -13.9 .6zM53.5 137.5l14.2-.6 -1.1-.7 -14 .7zM51.6 136.2l13.8-.6 -1.1-.6 -13.6 .6zM68.9 137.6l14-.7 -1.4-.6 -13.8 .6zM66.6 136.2l13.6-.6 -1.3-.6 -13.5 .6zM84.3 137.6l13.8-.7 -1.6-.6 -13.6 .6zM81.5 136.3l13.4-.7 -1.5-.6 -13.2 .6zM99.8 137.6l13.5-.6 -1.8-.7 -13.4 .6zM96.5 136.3l13.2-.6 -1.8-.7 -13 .6zM115.3 137.7l13.3-.7 -2.1-.7 -13.2 .7zM111.5 136.3l12.9-.6 -1.9-.6 -12.8 .6zM130.7 137.7l13.1-.7 -2.3-.6 -12.9 .6zM126.5 136.3l12.7-.6 -2.2-.6 -12.6 .6zM146.3 137.7l12.8-.6 -2.5-.7 -12.8 .6zM141.5 136.4l12.6-.7 -2.5-.6 -12.4 .6zM161.8 137.7l12.6-.6 -2.8-.7 -12.5 .7zM156.6 136.4l12.3-.6 -2.6-.7 -12.2 .6zM177.3 137.8l12.5-.7 -3.1-.7 -12.3 .7zM171.6 136.4l12.2-.6 -2.9-.6 -12 .6zM192.9 137.8l12.2-.7 -3.3-.6 -12 .6zM186.7 136.4l11.9-.6 -3.1-.6 -11.7 .6zM208.5 137.8l12-.6 -3.6-.7 -11.8 .6zM201.8 136.5l11.7-.6 -3.3-.7 -11.6 .6zM224.1 137.9l11.8-.7 -3.8-.7 -11.6 .7zM216.9 136.5l11.5-.6 -3.5-.6 -11.4 .6zM239.8 137.9l11.5-.7 -4-.6 -11.4 .6zM232.1 136.5l11.3-.6 -3.8-.6 -11.2 .6zM255.4 137.9l11.3-.6 -4.3-.7 -11.1 .6zM247.3 136.6l11-.7 -4-.6 -10.9 .6zM271.1 138l11-.7 -4.4-.7 -11 .7zM262.4 136.6l10.9-.6 -4.2-.7 -10.8 .6zM286.8 138l10.8-.7 -4.7-.7 -10.8 .7zM277.7 136.6l10.6-.6 -4.5-.6 -10.5 .6zM302.5 138l10.6-.7 -5-.6 -10.5 .6zM292.9 136.6l10.4-.6 -4.7-.6 -10.3 .6zM318.3 138l10.3-.6 -5.2-.7 -10.3 .6zM308.1 136.7l10.2-.7 -4.9-.6 -10.1 .6zM298.6 135.4l10-.6 -4.6-.6 -9.9 .6zM334 138.1l10.1-.7 -5.4-.7 -10.1 .7zM323.4 136.7l10-.6 -5.2-.7 -9.9 .6zM313.4 135.4l9.8-.6 -4.8-.6 -9.8 .6zM349.8 138.1l9.9-.7 -5.7-.6 -9.9 .6zM338.7 136.7l9.7-.6 -5.3-.6 -9.7 .6zM328.2 135.4l9.6-.6 -5-.6 -9.6 .6zM365.6 138.1l9.7-.6 -6-.7 -9.6 .6zM354 136.8l9.5-.7 -5.6-.6 -9.5 .6zM343.1 135.5l9.4-.6 -5.3-.6 -9.4 .5zM381.4 138.2l9.5-.7 -6.3-.7 -9.3 .7zM369.3 136.8l9.3-.6 -5.8-.7 -9.3 .6zM357.9 135.5l9.2-.6 -5.5-.6 -9.1 .6zM397.3 138.2l9.2-.7 -6.5-.7 -9.1 .7zM384.6 136.8l9.2-.6 -6.1-.7 -9.1 .7zM372.8 135.5l9-.6 -5.7-.6 -9 .6zM413.1 138.2l9-.7 -6.7-.6 -8.9 .6zM400 136.8l8.9-.6 -6.3-.6 -8.8 .6zM387.7 135.5l8.8-.6 -6-.6 -8.7 .6zM429 138.2l8.8-.6 -7-.7 -8.7 .6zM415.4 136.9l8.7-.7 -6.6-.6 -8.6 .6zM402.6 135.6l8.6-.6 -6.2-.6 -8.5 .5zM445 138.3l8.4-.7 -7.2-.7 -8.4 .7zM430.8 136.9l8.4-.6 -6.7-.7 -8.4 .6zM417.5 135.6l8.4-.6 -6.4-.6 -8.3 .6zM460.9 138.3l8.2-.7 -7.4-.6 -8.3 .6zM446.2 136.9l8.3-.6 -7.1-.7 -8.2 .7zM432.5 135.6l8.1-.6 -6.6-.6 -8.1 .6zM476.8 138.3l8.1-.6 -7.8-.7 -8 .6zM461.7 137l8-.7 -7.3-.6 -7.9 .6zM447.4 135.6l8-.6 -6.8-.6 -8 .6zM492.8 138.4l7.8-.7 -8-.7 -7.7 .7zM477.1 137l7.8-.7 -7.5-.6 -7.7 .6zM462.4 135.7l7.8-.6 -7.1-.6 -7.7 .5zM508.8 138.4l7.6-.7 -8.3-.7 -7.5 .7zM492.6 137l7.6-.6 -7.7-.7 -7.6 .6zM477.4 135.7l7.6-.6 -7.3-.6 -7.5 .6zM524.8 138.4l7.3-.6 -8.4-.7 -7.3 .6zM508.1 137l7.4-.6 -8-.6 -7.3 .6zM492.5 135.7l7.3-.6 -7.5-.6 -7.3 .6zM540.9 138.5l7-.7 -8.7-.7 -7.1 .7zM523.7 137.1l7.1-.7 -8.2-.6 -7.1 .6zM507.5 135.8l7.1-.6 -7.7-.7 -7.1 .6zM556.9 138.5l6.9-.7 -9-.7 -6.9 .7zM539.2 137.1l6.9-.6 -8.4-.7 -6.9 .6zM522.6 135.8l6.9-.6 -8-.6 -6.9 .6zM573 138.5l6.6-.7 -9.2-.7 -6.6 .7zM554.8 137.1l6.6-.6 -8.6-.7 -6.7 .7zM537.7 135.8l6.6-.6 -8.1-.6 -6.7 .6zM589.1 138.6l6.4-.7 -9.5-.7 -6.4 .6zM570.4 137.1l6.4-.6 -8.9-.6 -6.5 .6zM552.8 135.8l6.4-.6 -8.3-.6 -6.6 .6zM605.3 138.6l6.1-.7 -9.8-.7 -6.1 .7zM586 137.2l6.2-.7 -9.2-.6 -6.2 .6zM567.9 135.9l6.2-.6 -8.6-.7 -6.3 .6zM621.4 138.6l5.9-.7 -10-.7 -5.9 .7zM601.6 137.2l6-.6 -9.4-.7 -6 .6zM583 135.9l6.1-.6 -8.9-.6 -6.1 .6zM637.6 138.6l5.6-.6 -10.3-.7 -5.6 .6zM617.3 137.2l5.7-.6 -9.6-.7 -5.8 .7zM598.2 135.9l5.8-.6 -9-.6 -5.9 .6zM653.8 138.7l5.4-.7 -10.6-.7 -5.4 .7zM632.9 137.3l5.5-.7 -9.8-.6 -5.6 .6zM613.4 135.9l5.6-.6 -9.3-.6 -5.7 .6zM670 138.7l5.1-.7 -10.7-.7 -5.2 .7zM648.6 137.3l5.3-.7 -10.1-.6 -5.4 .6zM628.6 136l5.4-.6 -9.5-.7 -5.5 .6zM686.3 138.7l4.8-.7 -11-.7 -5 .7zM664.4 137.3l5-.6 -10.4-.7 -5.1 .6zM643.8 136l5.2-.6 -9.8-.6 -5.2 .6zM702.5 138.8l4.6-.7 -11.3-.7 -4.7 .6zM680.1 137.3l4.8-.6 -10.6-.7 -4.9 .7zM659 136l5-.6 -10-.6 -5 .6zM718.8 138.8l4.4-.7 -11.6-.7 -4.5 .7zM695.8 137.4l4.6-.7 -10.8-.6 -4.7 .6zM674.3 136l4.7-.6 -10.2-.6 -4.8 .6zM735.1 138.8l4.1-.7 -11.8-.7 -4.2 .7zM711.6 137.4l4.4-.6 -11.1-.7 -4.5 .6zM689.6 136.1l4.5-.6 -10.4-.7 -4.7 .6zM751.4 138.9l3.9-.7 -12.1-.7 -4 .6zM727.4 137.4l4.1-.6 -11.3-.7 -4.2 .7zM704.9 136.1l4.3-.6 -10.7-.6 -4.4 .6zM767.8 138.9l3.6-.7 -12.3-.7 -3.8 .7zM743.2 137.5l3.9-.7 -11.6-.6 -4 .6zM720.2 136.1l4.1-.6 -10.9-.6 -4.2 .6zM759.1 137.5l3.6-.7 -11.8-.6 -3.8 .6zM735.5 136.2l3.9-.7 -11.1-.6 -4 .6zM774.9 137.5l3.4-.6 -12-.7 -3.6 .6zM750.9 136.2l3.6-.6 -11.3-.6 -3.8 .5zM790.8 137.6l3.2-.7 -12.3-.7 -3.4 .7zM766.3 136.2l3.4-.6 -11.6-.6 -3.6 .6zM806.7 137.6l3-.7 -12.6-.6 -3.1 .6zM781.7 136.2l3.2-.6 -11.9-.6 -3.3 .6zM822.6 137.6l2.7-.6 -12.8-.7 -2.8 .6zM797.1 136.3l3-.6 -12.1-.7 -3.1 .6zM838.6 137.6l2.5-.6 -13.1-.7 -2.7 .7zM812.5 136.3l2.8-.6 -12.3-.6 -2.9 .6zM854.6 137.7l2.2-.7 -13.3-.7 -2.4 .7zM828 136.3l2.5-.6 -12.5-.6 -2.7 .6zM870.5 137.7l2-.7 -13.6-.6 -2.1 .6zM843.5 136.3l2.3-.6 -12.8-.6 -2.5 .6zM886.6 137.7l1.7-.6 -13.8-.7 -2 .6zM858.9 136.4l2.1-.6 -13-.7 -2.2 .6zM902.6 137.8l1.5-.7 -14.1-.7 -1.7 .7zM874.5 136.4l1.8-.6 -13.2-.6 -2.1 .6zM918.6 137.8l1.3-.7 -14.3-.6 -1.5 .6zM890 136.4l1.7-.6 -13.5-.6 -1.9 .6zM934.7 137.8l1-.6 -14.6-.7 -1.2 .6zM905.6 136.5l1.4-.7 -13.7-.6 -1.6 .6zM950.8 137.8l.8-.6 -14.9-.7 -1 .7zM921.1 136.5l1.2-.6 -13.9-.7 -1.4 .6zM966.9 137.9l.6-.7 -15.1-.7 -.8 .7zM936.7 136.5l1-.6 -14.2-.6 -1.2 .6zM952.4 136.5l.7-.6 -14.5-.6 -.9 .6zM968 136.6l.5-.7 -14.7-.6 -.7 .6z"/>
<path fill="#677184" d="M20.9 134.9l13.9-.6 -.6-.6 -13.7 .6zM35.4 134.9l13.6-.6 -.8-.5 -13.4 .5zM49.9 134.9l13.4-.5 -1-.6 -13.3 .5zM48.2 133.8l13.1-.6 -1-.5 -12.9 .5zM64.3 135l13.3-.6 -1.3-.6 -13 .6zM62.3 133.8l12.8-.6 -1.1-.5 -12.7 .5zM78.9 135l13-.6 -1.5-.6 -12.8 .6zM76.3 133.8l12.7-.5 -1.3-.6 -12.6 .5zM74 132.7l12.4-.5 -1.3-.6 -12.3 .5zM93.4 135l12.8-.6 -1.6-.5 -12.7 .5zM90.4 133.8l12.6-.5 -1.6-.6 -12.4 .6zM87.7 132.7l12.2-.5 -1.5-.5 -12 .5zM107.9 135l12.7-.5 -1.9-.6 -12.5 .5zM104.6 133.9l12.3-.6 -1.8-.6 -12.1 .6zM101.4 132.7l12-.5 -1.6-.5 -11.9 .5zM122.5 135.1l12.4-.6 -2.1-.6 -12.2 .6zM118.7 133.9l12.1-.6 -1.9-.5 -12 .5zM115.1 132.7l11.9-.5 -1.9-.5 -11.7 .5zM137 135.1l12.3-.6 -2.3-.6 -12.1 .6zM132.8 133.9l12-.5 -2.2-.6 -11.8 .5zM128.9 132.8l11.6-.5 -2-.6 -11.5 .5zM151.6 135.1l12.1-.6 -2.5-.6 -11.9 .6zM147 133.9l11.8-.5 -2.4-.6 -11.6 .6zM142.6 132.8l11.5-.5 -2.2-.6 -11.4 .6zM166.3 135.1l11.8-.5 -2.7-.6 -11.7 .5zM161.2 133.9l11.6-.5 -2.6-.6 -11.4 .6zM156.4 132.8l11.3-.5 -2.4-.5 -11.2 .5zM180.9 135.2l11.6-.6 -2.9-.6 -11.5 .6zM175.4 134l11.4-.6 -2.8-.5 -11.2 .5zM170.2 132.8l11.2-.5 -2.6-.5 -11.1 .5zM195.5 135.2l11.5-.6 -3.1-.6 -11.4 .6zM189.6 134l11.2-.6 -2.9-.5 -11.1 .5zM184 132.9l11-.6 -2.8-.5 -10.8 .5zM210.2 135.2l11.2-.6 -3.3-.6 -11.1 .6zM203.9 134l11-.5 -3.2-.6 -10.9 .5zM197.9 132.9l10.7-.5 -2.9-.6 -10.7 .5zM224.9 135.3l11-.6 -3.5-.6 -11 .5zM218.1 134l10.8-.5 -3.3-.6 -10.7 .6zM211.7 132.9l10.6-.5 -3.2-.5 -10.5 .5zM239.6 135.3l10.8-.6 -3.7-.6 -10.8 .6zM232.4 134.1l10.6-.6 -3.6-.5 -10.5 .5zM225.6 132.9l10.4-.5 -3.4-.5 -10.3 .5zM254.3 135.3l10.7-.6 -4-.6 -10.6 .6zM246.7 134.1l10.4-.6 -3.8-.5 -10.3 .5zM239.4 133l10.3-.6 -3.6-.5 -10.1 .5zM269.1 135.3l10.4-.6 -4.2-.6 -10.3 .6zM261 134.1l10.2-.5 -3.9-.6 -10.2 .5zM253.3 133l10.1-.5 -3.7-.6 -10 .5zM283.8 135.4l10.3-.6 -4.5-.6 -10.1 .5zM275.3 134.1l10.1-.5 -4.2-.6 -10 .6zM267.3 133l9.8-.5 -3.9-.6 -9.8 .6zM289.6 134.2l9.9-.6 -4.4-.5 -9.7 .5zM281.2 133l9.7-.5 -4.1-.5 -9.7 .5zM304 134.2l9.7-.6 -4.6-.5 -9.6 .5zM295.1 133.1l9.6-.6 -4.4-.5 -9.4 .5zM318.4 134.2l9.5-.5 -4.8-.6 -9.4 .5zM309.1 133.1l9.3-.6 -4.5-.5 -9.2 .5zM332.8 134.2l9.3-.5 -5-.6 -9.2 .6zM323.1 133.1l9.1-.5 -4.7-.6 -9.1 .5zM347.2 134.3l9.1-.6 -5.2-.6 -9 .6zM337.1 133.1l8.9-.5 -4.9-.5 -8.9 .5zM361.6 134.3l8.9-.6 -5.4-.5 -8.8 .5zM351.1 133.1l8.8-.5 -5.1-.5 -8.8 .5zM376.1 134.3l8.7-.5 -5.6-.6 -8.7 .5zM365.1 133.2l8.6-.6 -5.3-.5 -8.5 .5zM390.5 134.3l8.5-.5 -5.8-.6 -8.4 .6zM379.2 133.2l8.4-.5 -5.5-.6 -8.4 .5zM405 134.4l8.3-.6 -6-.6 -8.3 .6zM393.2 133.2l8.3-.5 -5.7-.6 -8.2 .6zM419.5 134.4l8.1-.6 -6.2-.5 -8.1 .5zM407.3 133.2l8.1-.5 -5.9-.5 -8 .5zM434 134.4l8-.5 -6.5-.6 -7.9 .5zM421.4 133.3l7.9-.6 -6.1-.5 -7.8 .5zM448.6 134.4l7.7-.5 -6.7-.6 -7.6 .6zM435.5 133.3l7.7-.5 -6.3-.6 -7.6 .5zM463.1 134.5l7.6-.6 -6.9-.6 -7.5 .6zM449.6 133.3l7.5-.5 -6.4-.6 -7.5 .6zM477.7 134.5l7.3-.6 -7-.5 -7.3 .5zM463.8 133.3l7.3-.5 -6.7-.5 -7.3 .5zM492.3 134.5l7.1-.5 -7.3-.6 -7.1 .5zM478 133.4l7.1-.6 -6.9-.5 -7.1 .5zM506.9 134.5l6.9-.5 -7.5-.6 -6.9 .6zM492.1 133.4l7-.6 -7.1-.5 -6.9 .5zM521.5 134.6l6.8-.6 -7.7-.6 -6.8 .6zM506.3 133.4l6.8-.5 -7.3-.6 -6.7 .5zM536.2 134.6l6.5-.6 -7.9-.5 -6.5 .5zM520.6 133.4l6.5-.5 -7.5-.6 -6.5 .6zM550.9 134.6l6.3-.5 -8.2-.6 -6.3 .5zM534.8 133.5l6.4-.6 -7.7-.5 -6.4 .5zM565.5 134.6l6.2-.5 -8.4-.6 -6.1 .6zM549 133.5l6.2-.6 -7.9-.5 -6.1 .5zM533.5 132.4l6.2-.5 -7.5-.6 -6.2 .5zM580.2 134.7l6-.6 -8.6-.6 -5.9 .6zM563.3 133.5l6-.5 -8.1-.6 -6 .5zM547.3 132.4l6.1-.5 -7.7-.5 -6 .5zM595 134.7l5.7-.6 -8.8-.6 -5.7 .6zM577.6 133.5l5.8-.5 -8.3-.6 -5.8 .6zM561.2 132.4l5.9-.5 -7.9-.5 -5.8 .5zM609.7 134.7l5.5-.5 -9-.6 -5.5 .5zM591.9 133.5l5.6-.5 -8.5-.5 -5.6 .5zM575.1 132.4l5.7-.5 -8-.5 -5.7 .5zM624.5 134.7l5.3-.5 -9.2-.6 -5.4 .6zM606.2 133.6l5.4-.6 -8.7-.5 -5.4 .5zM589 132.5l5.5-.5 -8.2-.6 -5.5 .5zM639.2 134.8l5.1-.6 -9.4-.6 -5.1 .6zM620.6 133.6l5.2-.5 -8.9-.6 -5.3 .5zM602.9 132.5l5.3-.5 -8.4-.5 -5.3 .5zM654 134.8l4.9-.6 -9.6-.6 -5 .6zM634.9 133.6l5-.5 -9.1-.6 -5 .6zM616.9 132.5l5.1-.5 -8.6-.5 -5.2 .5zM668.8 134.8l4.7-.6 -9.8-.5 -4.8 .5zM649.3 133.6l4.8-.5 -9.3-.5 -4.9 .5zM630.8 132.5l5-.5 -8.8-.5 -5 .5zM683.7 134.8l4.4-.5 -10-.6 -4.6 .5zM663.7 133.7l4.6-.6 -9.5-.5 -4.7 .5zM644.8 132.6l4.8-.6 -9-.5 -4.8 .5zM698.5 134.9l4.3-.6 -10.3-.6 -4.4 .6zM678.1 133.7l4.4-.6 -9.7-.5 -4.5 .5zM658.8 132.6l4.6-.5 -9.2-.6 -4.6 .5zM713.4 134.9l4.1-.6 -10.5-.6 -4.2 .6zM692.5 133.7l4.3-.5 -10-.6 -4.3 .5zM672.8 132.6l4.4-.5 -9.4-.5 -4.4 .5zM728.3 134.9l3.8-.6 -10.7-.5 -3.9 .5zM707 133.7l4-.5 -10.1-.6 -4.1 .6zM686.8 132.6l4.3-.5 -9.6-.5 -4.3 .5zM743.2 135l3.6-.6 -10.9-.6 -3.8 .5zM721.4 133.8l3.9-.6 -10.4-.5 -3.9 .5zM700.9 132.6l4-.5 -9.8-.5 -4 .5zM758.1 135l3.4-.6 -11.1-.6 -3.6 .6zM735.9 133.8l3.7-.6 -10.6-.5 -3.7 .5zM714.9 132.7l3.9-.5 -10-.6 -3.9 .5zM773 135l3.3-.6 -11.4-.6 -3.4 .6zM750.4 133.8l3.5-.5 -10.8-.6 -3.5 .5zM729 132.7l3.7-.5 -10.2-.6 -3.7 .6zM788 135l3-.6 -11.6-.5 -3.1 .5zM764.9 133.8l3.3-.5 -11-.6 -3.3 .6zM743.1 132.7l3.5-.5 -10.4-.5 -3.5 .5zM803 135.1l2.8-.6 -11.8-.6 -3 .5zM779.4 133.9l3.1-.6 -11.2-.5 -3.1 .5zM757.2 132.7l3.3-.5 -10.6-.5 -3.3 .5zM818 135.1l2.6-.6 -12.1-.6 -2.7 .6zM794 133.9l2.9-.6 -11.4-.5 -3 .5zM771.3 132.8l3.1-.6 -10.7-.5 -3.2 .5zM833 135.1l2.4-.6 -12.3-.6 -2.5 .6zM808.5 133.9l2.7-.5 -11.6-.6 -2.7 .5zM785.5 132.8l2.9-.5 -11-.6 -3 .5zM848 135.1l2.2-.6 -12.5-.5 -2.3 .5zM823.1 133.9l2.5-.5 -11.8-.6 -2.6 .6zM799.6 132.8l2.8-.5 -11.2-.5 -2.8 .5zM863.1 135.2l2-.6 -12.7-.6 -2.2 .5zM837.7 134l2.3-.6 -12-.5 -2.4 .5zM813.8 132.8l2.5-.5 -11.3-.5 -2.6 .5zM878.2 135.2l1.7-.6 -12.9-.6 -1.9 .6zM852.4 134l2-.6 -12.2-.5 -2.2 .5zM828 132.9l2.3-.6 -11.5-.5 -2.5 .5zM893.3 135.2l1.5-.6 -13.2-.6 -1.7 .6zM867 134l1.9-.5 -12.5-.6 -2 .5zM842.2 132.9l2.2-.5 -11.8-.6 -2.3 .5zM908.4 135.2l1.3-.5 -13.4-.6 -1.5 .5zM881.6 134l1.7-.5 -12.6-.6 -1.8 .6zM856.4 132.9l2-.5 -11.9-.6 -2.1 .6zM923.5 135.3l1.1-.6 -13.6-.6 -1.3 .6zM896.3 134.1l1.5-.6 -12.9-.6 -1.6 .6zM870.7 132.9l1.8-.5 -12.2-.5 -1.9 .5zM938.6 135.3l1-.6 -13.9-.6 -1.1 .6zM911 134.1l1.3-.6 -13.1-.5 -1.4 .5zM884.9 132.9l1.6-.5 -12.3-.5 -1.7 .5z"/>
<path fill="#667083" d="M98.4 131.7l11.7-.5 -1.5-.5 -11.6 .5zM111.8 131.7l11.5-.5 -1.7-.5 -11.5 .5zM125.1 131.7l11.4-.5 -1.9-.5 -11.3 .5zM138.5 131.7l11.2-.5 -2.1-.5 -11.1 .5zM151.9 131.7l11.1-.4 -2.3-.5 -11 .4zM165.3 131.8l10.9-.5 -2.4-.5 -10.8 .5zM178.8 131.8l10.7-.5 -2.7-.5 -10.6 .5zM192.2 131.8l10.6-.5 -2.9-.5 -10.4 .5zM205.7 131.8l10.4-.5 -3.1-.5 -10.2 .5zM219.1 131.9l10.3-.5 -3.2-.5 -10.1 .4zM232.6 131.9l10.1-.5 -3.4-.5 -9.9 .5zM246.1 131.9l9.9-.5 -3.5-.5 -9.8 .5zM259.7 131.9l9.7-.5 -3.8-.5 -9.6 .5zM273.2 131.9l9.5-.4 -3.9-.6 -9.4 .5zM286.8 132l9.3-.5 -4.1-.5 -9.3 .5zM300.3 132l9.2-.5 -4.2-.5 -9.2 .5zM313.9 132l9-.5 -4.4-.5 -9 .5zM327.5 132l8.9-.5 -4.7-.5 -8.8 .5zM341.1 132.1l8.7-.5 -4.8-.5 -8.6 .4zM331.7 131l8.6-.4 -4.6-.5 -8.5 .4zM354.8 132.1l8.5-.5 -5-.5 -8.5 .5zM345 131.1l8.4-.5 -4.8-.5 -8.3 .5zM368.4 132.1l8.4-.5 -5.2-.5 -8.3 .5zM358.3 131.1l8.2-.5 -4.9-.5 -8.2 .5zM382.1 132.1l8.1-.5 -5.3-.5 -8.1 .5zM371.6 131.1l8-.5 -5.1-.5 -8 .5zM395.8 132.1l8-.5 -5.6-.5 -8 .5zM384.9 131.1l7.9-.5 -5.3-.4 -7.9 .4zM409.5 132.2l7.8-.5 -5.8-.5 -7.7 .4zM398.2 131.1l7.7-.4 -5.4-.5 -7.7 .4zM423.2 132.2l7.6-.5 -5.9-.5 -7.6 .5zM411.5 131.2l7.6-.5 -5.6-.5 -7.6 .5zM436.9 132.2l7.5-.5 -6.2-.5 -7.4 .5zM424.9 131.2l7.4-.5 -5.8-.5 -7.4 .5zM450.7 132.2l7.2-.5 -6.3-.5 -7.2 .5zM438.2 131.2l7.3-.5 -6-.5 -7.2 .5zM464.4 132.3l7.1-.5 -6.5-.6 -7.1 .5zM451.6 131.2l7.1-.5 -6.2-.4 -7 .4zM478.2 132.3l6.9-.5 -6.7-.5 -6.9 .5zM465 131.2l6.9-.4 -6.3-.5 -6.9 .4zM492 132.3l6.7-.5 -6.8-.5 -6.8 .5zM478.4 131.3l6.8-.5 -6.5-.5 -6.8 .5zM505.8 132.3l6.6-.5 -7.1-.5 -6.6 .5zM491.9 131.3l6.5-.5 -6.7-.5 -6.5 .5zM519.6 132.3l6.4-.5 -7.2-.5 -6.4 .5zM505.3 131.3l6.4-.5 -6.9-.5 -6.4 .5zM518.8 131.3l6.2-.5 -7.1-.4 -6.2 .4zM532.2 131.3l6.1-.4 -7.2-.5 -6.1 .4zM545.7 131.4l5.9-.5 -7.4-.5 -5.9 .5zM559.2 131.4l5.8-.5 -7.6-.5 -5.8 .5zM572.8 131.4l5.5-.5 -7.8-.5 -5.5 .5zM586.3 131.4l5.4-.4 -8-.5 -5.4 .4zM599.8 131.5l5.2-.5 -8.1-.5 -5.2 .5zM613.4 131.5l5-.5 -8.3-.5 -5.1 .5zM627 131.5l4.9-.5 -8.6-.5 -4.9 .5zM640.6 131.5l4.7-.5 -8.7-.5 -4.7 .5zM654.2 131.5l4.5-.4 -8.9-.5 -4.5 .4zM667.8 131.6l4.4-.5 -9.1-.5 -4.4 .5zM681.5 131.6l4.1-.5 -9.2-.5 -4.2 .5zM695.1 131.6l4-.5 -9.4-.5 -4.1 .5zM708.8 131.6l3.8-.5 -9.6-.5 -3.9 .5zM722.5 131.6l3.7-.4 -9.8-.5 -3.8 .4zM736.2 131.7l3.5-.5 -10-.5 -3.5 .5zM749.9 131.7l3.3-.5 -10.1-.5 -3.4 .5zM763.7 131.7l3.1-.5 -10.4-.5 -3.2 .5zM777.4 131.7l3-.5 -10.6-.5 -3 .5zM791.2 131.8l2.8-.5 -10.8-.5 -2.8 .4zM805 131.8l2.6-.5 -10.9-.5 -2.7 .5zM818.8 131.8l2.4-.5 -11.1-.5 -2.5 .5zM832.6 131.8l2.2-.5 -11.3-.5 -2.3 .5zM846.5 131.8l2-.4 -11.5-.5 -2.2 .4zM860.3 131.9l1.9-.5 -11.7-.5 -2 .5z"/>
<path fill="#5a6377" fill-opacity="0.13" d="M1.3 208.8l.7-.1 -.8-9 -.6 .1zM13 217.9l.7-.1 -1.8-10.4 -.7 .1zM11.3 207.6l.6-.1 -1.5-8.8 -.6 .1zM23.6 216.5l.6 0 -2.6-10.2 -.6 .1zM21 206.5l.6-.1 -2.2-8.6 -.6 .1zM44.1 214l.6-.1 -4.3-9.8 -.6 .1zM39.9 204.3l.6 0 -3.6-8.3 -.6 0zM940.8 208.6l4.7-8.6 -.6 0 -4.7 8.6zM54 212.7l.6 0 -5-9.6 -.6 .1zM924.9 217.2l6.2-9.9 -.6-.1 -6.3 9.9zM931 207.5l5.4-8.5 -.6 0 -5.4 8.4zM63.7 211.5l.6-.1 -5.7-9.3 -.6 0zM914.5 215.8l7-9.6 -.6-.1 -7 9.7zM921.4 206.3l6-8.3 -.5 0 -6.1 8.2zM82.6 209.2l.6-.1 -7.1-9 -.6 0zM894.5 213.2l8.4-9.3 -.5 0 -8.5 9.2zM902.8 204l7.3-7.9 -.6-.1 -7.3 8zM91.7 208l.6-.1 -7.8-8.8 -.5 0zM884.8 211.9l9.1-9.1 -.6 0 -9.1 9zM110.4 217l.6-.1 -9.9-10.2 -.5 .1zM100.7 206.9l.6-.1 -8.4-8.7 -.5 .1zM875.3 210.7l9.8-8.9 -.6-.1 -9.8 8.9zM129.2 214.4l.5-.1 -11.2-9.8 -.5 .1zM118.1 204.7l.6-.1 -9.6-8.3 -.5 0zM857 208.2l10.9-8.5 -.6-.1 -10.9 8.6zM138.2 213.2l.6-.1 -11.8-9.6 -.6 0zM834.8 216.8l13.4-9.9 -.5 0 -13.5 9.8zM848.1 207.1l11.4-8.4 -.5-.1 -11.5 8.4zM147.1 211.9l.6 0 -12.4-9.5 -.6 .1zM825.5 215.4l14-9.6 -.5-.1 -14.1 9.6zM839.3 205.9l12.1-8.2 -.6-.1 -12 8.2zM164.4 209.6l.5-.1 -13.5-9.1 -.5 .1zM807.5 212.8l15.1-9.2 -.5-.1 -15.2 9.2zM172.8 208.4l.5-.1 -14.1-8.9 -.5 .1zM798.7 211.5l15.7-9 -.5-.1 -15.7 9zM197.9 217.5l.6-.1 -17.3-10.3 -.5 0zM181 207.3l.5-.1 -14.6-8.7 -.5 0zM790.2 210.3l16.2-8.9 -.5-.1 -16.2 8.9zM214.9 214.9l.5-.1 -18.3-9.9 -.5 .1zM196.9 205.1l.5-.1 -15.6-8.4 -.4 .1zM753.9 217.7l20-10 -.5-.1 -20.1 10zM773.7 207.8l17.1-8.5 -.5 0 -17.2 8.5zM223.1 213.6l.5-.1 -18.7-9.7 -.5 .1zM745.4 216.3l20.5-9.8 -.5 0 -20.5 9.7zM765.7 206.7l17.5-8.4 -.5 0 -17.6 8.3zM231.2 212.4l.5-.1 -19.3-9.5 -.4 0zM737.1 214.9l21-9.5 -.5-.1 -21 9.6zM757.8 205.5l17.9-8.1 -.4-.1 -18 8.2zM246.8 210l.5-.1 -20.1-9.1 -.5 0zM721.1 212.3l21.8-9.1 -.5-.1 -21.8 9.2zM254.4 208.8l.4-.1 -20.5-8.9 -.4 0zM713.3 211.1l22.2-9 -.5-.1 -22.2 9zM286.1 217.9l.5 0 -24.7-10.4 -.5 0zM261.8 207.7l.4-.1 -20.9-8.8 -.4 .1zM705.7 209.8l22.5-8.7 -.4-.1 -22.6 8.8zM301.3 215.3l.4-.1 -25.4-9.9 -.5 0zM276.2 205.5l.4-.1 -21.6-8.5 -.4 .1zM664.1 217.2l27.2-9.9 -.4-.1 -27.2 9.9zM691 207.4l23.2-8.4 -.5-.1 -23.2 8.5zM308.6 214l.5 0 -25.8-9.8 -.5 .1zM283.2 204.4l.4-.1 -21.9-8.3 -.5 .1zM656.7 215.8l27.5-9.6 -.5-.1 -27.5 9.6zM683.8 206.3l23.5-8.3 -.4 0 -23.5 8.2zM315.8 212.8l.5-.1 -26.2-9.6 -.4 .1zM649.4 214.5l27.8-9.5 -.4 0 -27.9 9.4zM676.8 205.2l23.8-8.2 -.4 0 -23.8 8.1zM329.8 210.4l.4-.1 -26.7-9.2 -.5 .1zM635.3 211.9l28.3-9.1 -.4 0 -28.4 9zM336.5 209.2l.5-.1 -27.1-9 -.4 .1zM628.5 210.7l28.5-8.9 -.4-.1 -28.6 8.9zM343.2 208.1l.4-.1 -27.3-8.9 -.4 .1zM621.8 209.4l28.8-8.7 -.4-.1 -28.9 8.8zM388.3 215.8l.4-.1 -32.7-10.1 -.4 .1zM356 205.8l.4 0 -27.8-8.6 -.3 .1zM575.1 216.7l34.2-9.8 -.4-.1 -34.3 9.9zM608.8 207.1l29.2-8.4 -.4-.1 -29.2 8.4zM394.7 214.5l.5-.1 -33-9.8 -.4 0zM362.3 204.8l.4-.1 -28-8.4 -.4 .1zM568.6 215.4l34.4-9.6 -.4-.1 -34.4 9.6zM602.5 205.9l29.4-8.2 -.3-.1 -29.5 8.2zM401.1 213.2l.4 0 -33.1-9.7 -.4 .1zM562.3 214.1l34.6-9.5 -.4 0 -34.6 9.4zM596.4 204.8l29.6-8.1 -.4 0 -29.6 8zM413.3 210.8l.4-.1 -33.5-9.2 -.3 0zM550.1 211.5l34.8-9 -.4-.1 -34.8 9zM419.3 209.6l.4 0 -33.7-9.1 -.3 0zM544.2 210.2l34.9-8.8 -.3-.1 -35 8.9zM425.1 208.5l.4-.1 -33.8-8.9 -.4 0zM538.4 209l35-8.6 -.3-.1 -35 8.6zM476 216.2l.3-.1 -40.1-10.1 -.3 .1zM436.4 206.2l.4 0 -34.1-8.6 -.3 0zM486.6 216.3l41.2-9.8 -.3 0 -41.2 9.7zM527.2 206.7l35.2-8.4 -.3 0 -35.2 8.3zM481.5 214.9l.4 0 -40.2-10 -.3 .1zM441.9 205.1l.4 0 -34.2-8.5 -.3 .1zM481.2 214.9l41.2-9.5 -.4-.1 -41.1 9.5zM521.8 205.5l35.2-8.1 -.3-.1 -35.2 8.1zM487 213.7l.3-.1 -40.2-9.7 -.3 0zM475.9 213.6l41.1-9.3 -.3-.1 -41.2 9.3zM516.5 204.4l35.3-8 -.4-.1 -35.2 8zM497.5 211.2l.3-.1 -40.2-9.3 -.4 .1zM465.6 211.1l41.1-9 -.3-.1 -41.1 9zM502.6 210l.3 0 -40.3-9.2 -.3 .1zM460.6 209.8l41.1-8.8 -.3 0 -41.1 8.8zM507.6 208.9l.4-.1 -40.4-9 -.3 .1zM455.7 208.6l41.1-8.6 -.3-.1 -41.1 8.6zM564.3 216.7l.3-.1 -47.6-10.2 -.3 .1zM517.4 206.6l.3-.1 -40.4-8.6 -.3 .1zM398.9 215.8l48-9.7 -.3 0 -48 9.6zM446.2 206.3l41-8.3 -.3-.1 -41 8.3zM568.9 215.4l.3-.1 -47.5-10 -.3 .1zM522.1 205.5l.3 0 -40.4-8.5 -.3 0zM394.4 214.5l47.9-9.5 -.3-.1 -47.8 9.5zM441.6 205.1l41-8.1 -.3 0 -41 8.1zM573.5 214.1l.3-.1 -47.4-9.8 -.3 .1zM526.7 204.4l.3 0 -40.3-8.4 -.3 .1zM390.1 213.2l47.7-9.3 -.3-.1 -47.7 9.3zM437.1 204l40.9-7.9 -.2-.1 -41 8zM582.3 211.6l.3 0 -47.2-9.4 -.3 0zM381.6 210.6l47.4-8.9 -.2 0 -47.4 8.9zM586.6 210.5l.2-.1 -47.1-9.2 -.2 0zM377.5 209.4l47.3-8.7 -.3-.1 -47.2 8.7zM590.7 209.3l.3-.1 -47-9 -.2 0zM373.5 208.2l47.1-8.5 -.2-.1 -47.1 8.5zM653.3 217.1l.2 0 -55.1-10.3 -.3 .1zM598.9 207l.2-.1 -46.7-8.7 -.3 .1zM311.8 215.4l54.7-9.6 -.2-.1 -54.7 9.6zM365.8 205.9l46.8-8.2 -.3-.1 -46.8 8.2zM657 215.8l.2 0 -54.9-10.1 -.2 .1zM602.8 205.9l.3-.1 -46.7-8.5 -.2 .1zM308.3 214l54.4-9.4 -.2 0 -54.4 9.4zM362 204.8l46.6-8.1 -.2-.1 -46.6 8.1zM660.6 214.6l.3-.1 -54.7-9.9 -.3 .1zM606.7 204.8l.2 0 -46.5-8.4 -.2 0zM304.9 212.7l54.2-9.2 -.3 0 -54.1 9.2zM667.7 212.1l.2-.1 -54.2-9.5 -.2 .1zM298.3 210.2l53.6-8.8 -.2-.1 -53.6 8.9zM671.1 210.9l.2-.1 -54-9.3 -.2 .1zM295.1 209l53.3-8.6 -.2-.1 -53.3 8.6zM674.4 209.7l.3-.1 -53.8-9.1 -.2 .1zM230.6 217.6l62.2-9.9 -.2-.1 -62.2 10zM291.9 207.8l53.1-8.5 -.2 0 -53.1 8.4zM742.9 217.6l.2-.1 -62.8-10.3 -.2 .1zM680.9 207.4l.2-.1 -53.2-8.7 -.2 0zM225.4 214.9l61.3-9.5 -.2-.1 -61.3 9.5zM285.9 205.5l52.5-8.2 -.3 0 -52.4 8.1zM745.7 216.3l.2-.1 -62.4-10.1 -.2 .1zM684.1 206.3l.2-.1 -53-8.6 -.2 .1zM222.8 213.6l60.9-9.3 -.1-.1 -60.9 9.3zM282.9 204.4l52.2-8 -.2-.1 -52.2 8zM748.4 215l.2-.1 -62.1-9.9 -.2 .1zM687.2 205.2l.2-.1 -52.8-8.4 -.2 .1zM220.3 212.3l60.5-9.1 -.1-.1 -60.5 9.1zM753.7 212.5l.2-.1 -61.3-9.5 -.2 .1zM215.5 209.8l59.7-8.8 -.2 0 -59.6 8.7zM756.2 211.3l.2-.1 -60.9-9.3 -.2 0zM213.2 208.6l59.3-8.6 -.2-.1 -59.2 8.6zM758.7 210.1l.2-.1 -60.6-9.1 -.1 0zM142.8 217.2l69.1-9.9 -.2-.1 -69 9.9zM210.9 207.4l58.9-8.4 -.2-.1 -58.8 8.5zM763.6 207.8l.1-.1 -59.8-8.8 -.2 .1zM139.5 214.5l67.9-9.5 -.1-.1 -67.9 9.5zM206.5 205.1l58.1-8.1 -.2 0 -58 8.1zM835.1 216.8l.1-.1 -70.1-10.2 -.1 0zM765.9 206.7l.2-.1 -59.5-8.7 -.1 .1zM137.9 213.2l67.4-9.3 -.2-.1 -67.3 9.3zM204.4 204l57.7-7.9 -.2-.1 -57.7 7.9zM836.9 215.5l.1-.1 -69.6-10 -.1 0zM768.2 205.6l.2-.1 -59.1-8.5 -.2 .1zM136.4 211.9l66.8-9.1 -.2-.1 -66.7 9.1zM840.3 212.9l.1 0 -68.5-9.6 -.1 0zM133.4 209.4l65.7-8.7 -.2-.1 -65.6 8.7zM842 211.7l.1-.1 -68-9.4 -.1 .1zM131.9 208.2l65.2-8.5 -.1-.1 -65.2 8.5zM843.6 210.5l.1-.1 -67.4-9.2 -.2 .1zM55.7 216.7l75.8-9.8 -.1-.1 -75.7 9.8zM130.5 207l64.6-8.3 -.1-.1 -64.6 8.4zM846.8 208.2l.1-.1 -66.5-8.9 -.1 .1zM54.4 214l74.3-9.4 -.1 0 -74.3 9.3zM127.7 204.8l63.6-8.1 -.1-.1 -63.6 8.1zM925.2 217.2l0-.1 -77.8-10.2 -.1 0zM848.3 207.1l.1-.1 -66-8.7 -.1 0zM53.7 212.7l73.6-9.2 -.1 0 -73.6 9.2zM926 215.9l0-.1 -77.1-10 -.1 0zM849.9 206l.1-.1 -65.6-8.6 -.1 .1zM53 211.5l73-9.1 -.1 0 -72.9 9zM927.6 213.4l.1-.1 -75.8-9.7 -.1 .1zM51.8 209l71.6-8.7 -.1 0 -71.6 8.6zM928.4 212.1l0 0 -75.1-9.5 -.1 0zM-31 217.6l83.3-9.9 -.1-.1 -83.1 9.9zM51.1 207.8l71-8.5 0 0 -71 8.4zM929.1 210.9l.1 0 -74.5-9.3 -.1 0zM-30.7 216.3l82.4-9.8 -.1-.1 -82.3 9.8zM50.5 206.6l70.4-8.3 -.1 0 -70.3 8.3zM930.6 208.6l.1-.1 -73.3-8.9 -.1 0zM-30.2 213.6l80.7-9.3 -.1-.1 -80.6 9.3zM49.4 204.4l69.1-8 -.1-.1 -69.1 8zM1015.9 217.7l0-.1 -85.7-10.4 0 .1zM931.3 207.5l.1-.1 -72.7-8.8 0 .1zM-30 212.3l79.9-9.1 0-.1 -79.8 9.1zM1015.8 216.4l0-.1 -84.9-10.2 0 .1zM932 206.3l.1 0 -72-8.6 -.1 0zM-29.7 211l79-8.9 0-.1 -79 9zM1015.5 213.8l0-.1 -83.2-9.7 0 .1zM933.4 204.2l0-.1 -70.8-8.3 -.1 .1zM-29.3 208.6l77.5-8.6 0-.1 -77.4 8.6zM1015.4 212.6l0-.1 -82.4-9.6 -.1 .1zM-29 207.4l76.7-8.4 0-.1 -76.7 8.4zM1015.3 211.4l-.1-.1 -81.6-9.4 0 .1zM-28.8 206.3l76-8.3 -.1-.1 -75.9 8.3zM1015 209l0-.1 -80.1-9 0 .1zM-28.4 204l74.6-7.9 -.1-.1 -74.5 7.9zM1014.9 207.9l0-.1 -79.4-8.8 0 0zM1014.8 206.7l0 0 -78.6-8.7 -.1 .1zM1014.5 204.6l0-.1 -77.2-8.4 0 .1z"/>
<path fill="#5a6377" fill-opacity="0.27" d="M3.1 231.8l.8-.1 -1.1-12.7 -.7 .1zM2.2 219.2l.7-.1 -.9-10.6 -.7 .1zM15 230.2l.8-.1 -2.2-12.5 -.7 .1zM26.6 228.6l.7-.1 -3.1-12.2 -.7 .1zM952.9 234l4.5-12.7 -.7-.1 -4.6 12.6zM957.3 221.5l3.8-10.6 -.7 0 -3.8 10.5zM49 225.5l.7-.1 -5.1-11.7 -.6 .1zM929 230.5l6.5-12 -.7-.1 -6.5 12zM935.4 218.6l5.5-10.1 -.6-.1 -5.6 10.1zM59.8 224l.7-.1 -6-11.4 -.6 .1zM917.5 228.8l7.5-11.7 -.7-.1 -7.5 11.7zM70.4 222.5l.7-.1 -6.9-11.1 -.6 .1zM906.3 227.2l8.3-11.5 -.6-.1 -8.4 11.5zM100.8 232.4l.7-.1 -10.2-12.9 -.6 .1zM90.8 219.7l.7-.1 -8.4-10.7 -.6 .1zM884.7 224l9.9-10.9 -.6-.1 -10 10.9zM111.5 230.7l.7-.1 -11-12.5 -.6 .1zM100.7 218.3l.7 0 -9.2-10.5 -.6 .1zM861.5 235.2l12.9-12.9 -.7-.1 -12.9 12.8zM874.2 222.5l10.8-10.7 -.7-.1 -10.7 10.7zM122 229.1l.7-.1 -11.8-12.2 -.7 0zM850.5 233.4l13.7-12.6 -.6-.1 -13.8 12.6zM864 221l11.5-10.5 -.6-.1 -11.5 10.5zM142.3 226l.6-.1 -13.3-11.7 -.6 .1zM829.3 229.9l15.2-11.9 -.6-.1 -15.3 11.9zM844.3 218.1l12.8-10 -.5-.1 -12.9 10.1zM152.1 224.5l.6-.1 -14.1-11.5 -.5 .1zM819 228.3l16-11.7 -.6-.1 -16 11.6zM161.7 223l.6-.1 -14.8-11.2 -.6 .1zM809.1 226.6l16.6-11.4 -.6 0 -16.7 11.3zM199.2 233l.6-.1 -19.3-13 -.6 .1zM180.2 220.2l.6-.1 -16.1-10.8 -.5 .1zM789.8 223.5l17.9-10.9 -.6-.1 -17.9 10.9zM208.8 231.3l.6-.1 -19.9-12.6 -.6 0zM189.2 218.8l.5-.1 -16.6-10.5 -.6 .1zM758.7 234.5l22.1-12.7 -.6-.1 -22.1 12.7zM780.5 222l18.5-10.6 -.6-.1 -18.5 10.6zM218.2 229.7l.6-.1 -20.6-12.4 -.6 .1zM749 232.8l22.7-12.4 -.5-.1 -22.8 12.4zM771.4 220.5l19.1-10.4 -.6-.1 -19 10.4zM236.4 226.5l.5-.1 -21.8-11.8 -.5 .1zM730.4 229.4l23.8-11.9 -.5-.1 -23.9 11.8zM245.1 225l.6-.1 -22.4-11.5 -.5 .1zM721.4 227.7l24.3-11.6 -.5-.1 -24.4 11.6zM253.7 223.5l.5-.1 -22.8-11.3 -.5 .1zM712.6 226.1l24.8-11.3 -.5-.1 -24.8 11.3zM298.5 233.6l.5-.1 -28.6-13.1 -.5 .1zM270.3 220.7l.5-.1 -23.9-10.8 -.4 0zM695.7 223l25.7-10.8 -.5-.1 -25.7 10.8zM307 231.9l.5-.1 -29.1-12.8 -.5 .1zM278.3 219.3l.5-.1 -24.3-10.6 -.5 .1zM656.7 233.9l31.2-12.6 -.5-.1 -31.2 12.6zM687.5 221.5l26.1-10.6 -.4 0 -26.2 10.5zM315.2 230.2l.6-.1 -29.6-12.4 -.5 .1zM648.4 232.2l31.6-12.3 -.5-.1 -31.7 12.3zM679.5 220l26.6-10.3 -.5-.1 -26.6 10.3zM331.2 227.1l.5-.1 -30.4-11.9 -.4 .1zM632.3 228.8l32.3-11.8 -.5 0 -32.3 11.7zM338.9 225.6l.5-.1 -30.7-11.7 -.5 .1zM624.5 227.2l32.6-11.5 -.4-.1 -32.7 11.5zM346.4 224.1l.5-.1 -31.1-11.4 -.4 0zM616.9 225.6l32.9-11.3 -.4 0 -32.9 11.2zM398.6 234.2l.5-.2 -38.1-13.1 -.5 .1zM361 221.2l.5-.1 -31.7-10.9 -.5 0zM562.9 235.1l40-12.8 -.5-.1 -40 12.8zM602.3 222.5l33.4-10.7 -.4-.1 -33.4 10.7zM405.9 232.5l.5-.1 -38.4-12.9 -.5 .1zM368.1 219.8l.4-.1 -32-10.7 -.4 .1zM555.6 233.3l40.2-12.5 -.4-.1 -40.2 12.5zM595.3 221l33.6-10.5 -.4-.1 -33.7 10.5zM413.1 230.8l.4-.1 -38.6-12.5 -.5 0zM374.9 218.4l.5-.1 -32.3-10.4 -.4 0zM548.6 231.6l40.3-12.2 -.4-.1 -40.4 12.2zM588.4 219.5l33.8-10.2 -.4-.1 -33.9 10.3zM426.8 227.6l.4-.1 -39-12 -.4 .1zM535 228.2l40.6-11.6 -.4-.1 -40.6 11.6zM433.5 226.1l.4-.1 -39.3-11.7 -.4 0zM528.4 226.6l40.8-11.4 -.4-.1 -40.8 11.4zM439.9 224.6l.4-.1 -39.4-11.5 -.4 .1zM522 225l40.9-11.1 -.4-.1 -40.9 11.1zM499.6 234.8l.4-.1 -47.8-13.3 -.4 .1zM452.5 221.7l.4-.1 -39.7-11 -.4 .1zM461.3 234.5l49-12.7 -.3-.1 -49.1 12.7zM509.7 222l41-10.7 -.4 0 -41 10.6zM505.8 233.1l.3-.2 -47.8-12.9 -.4 .1zM458.5 220.3l.4-.1 -39.8-10.8 -.4 .1zM455.4 232.8l49-12.5 -.4-.1 -49 12.4zM503.7 220.5l41.1-10.4 -.4-.1 -41 10.4zM511.7 231.4l.4-.1 -47.9-12.7 -.4 .1zM464.5 218.9l.3-.1 -39.9-10.5 -.3 0zM449.6 231l49-12.1 -.4-.1 -48.9 12.1zM497.9 219.1l41.1-10.2 -.4-.1 -41.1 10.2zM523.2 228.2l.4-.1 -47.9-12.1 -.4 .1zM438.5 227.7l48.8-11.6 -.3-.1 -48.9 11.6zM528.8 226.6l.3-.1 -47.9-11.8 -.3 .1zM433.1 226.1l48.8-11.3 -.4-.1 -48.7 11.3zM534.2 225.1l.3-.1 -47.8-11.6 -.4 .1zM427.9 224.5l48.6-11 -.3-.1 -48.6 11zM601.5 235.4l.3-.1 -57.6-13.4 -.3 .1zM544.7 222.2l.3-.1 -47.8-11.1 -.3 .1zM360.6 233.9l58-12.6 -.4-.1 -57.9 12.6zM417.8 221.5l48.4-10.6 -.3-.1 -48.4 10.6zM606.4 233.6l.3-.1 -57.4-13 -.3 .1zM549.7 220.8l.4-.1 -47.8-10.9 -.3 .1zM356 232.2l57.7-12.3 -.3-.1 -57.7 12.3zM412.9 220l48.3-10.3 -.3-.1 -48.3 10.3zM611.2 232l.3-.1 -57.3-12.8 -.3 .1zM554.7 219.4l.3-.1 -47.7-10.6 -.3 0zM351.5 230.5l57.4-12.1 -.3-.1 -57.4 12zM408.1 218.6l48.3-10.1 -.4-.1 -48.2 10.1zM620.4 228.7l.3-.1 -56.9-12.2 -.3 .1zM342.8 227.1l56.9-11.4 -.3-.1 -56.9 11.4zM624.8 227.2l.3-.1 -56.6-12 -.3 .1zM338.6 225.5l56.6-11.2 -.3 0 -56.6 11.1zM629.2 225.6l.3-.1 -56.5-11.6 -.3 .1zM334.5 224l56.3-11 -.2-.1 -56.4 11zM637.6 222.7l.2-.1 -56-11.2 -.3 .1zM260.8 233.3l66.7-12.5 -.3-.1 -66.6 12.5zM326.6 221l55.8-10.5 -.3-.1 -55.8 10.5zM708 234.2l.2-.1 -67.2-13.1 -.3 .1zM641.6 221.2l.3 0 -55.8-11 -.3 .1zM257.5 231.6l66.1-12.2 -.2-.1 -66.2 12.2zM322.8 219.5l55.5-10.2 -.3-.1 -55.5 10.2zM711.5 232.6l.2-.2 -66.7-12.8 -.3 .1zM645.6 219.9l.2-.1 -55.5-10.7 -.3 0zM254.2 229.9l65.7-11.9 -.2-.1 -65.7 11.9zM319 218.1l55.3-10 -.3-.1 -55.2 10zM718.4 229.3l.2-.1 -66-12.3 -.2 .1zM247.9 226.6l64.8-11.4 -.2-.1 -64.8 11.4zM721.7 227.7l.2-.1 -65.6-12 -.2 .1zM244.8 225l64.4-11.1 -.2-.1 -64.4 11.1zM725 226.2l.2-.1 -65.2-11.8 -.3 .1zM241.8 223.5l64-10.9 -.3-.1 -63.9 10.9zM731.2 223.2l.2-.1 -64.4-11.3 -.2 .1zM161.8 232.7l75.3-12.4 -.2-.1 -75.2 12.4zM236.1 220.5l63-10.4 -.2-.1 -63 10.4zM810.4 234.9l.1-.2 -77.1-13.2 -.2 .1zM734.2 221.7l.2 0 -64-11.1 -.2 .1zM159.7 231l74.6-12.1 -.2-.1 -74.5 12.1zM233.3 219.1l62.6-10.2 -.2-.1 -62.6 10.2zM812.7 233.1l.1-.1 -76.4-12.9 -.2 .1zM737.2 220.3l.2-.1 -63.6-10.7 -.2 0zM157.7 229.3l73.9-11.8 -.2-.1 -73.9 11.8zM817.2 229.8l.1-.1 -75.2-12.3 -.2 0zM153.7 226.1l72.6-11.3 -.1-.1 -72.6 11.3zM819.4 228.3l.1-.1 -74.6-12.2 -.2 .1zM151.8 224.5l72-11 -.2-.1 -71.9 11zM821.5 226.7l.1-.1 -74-11.8 -.2 0zM149.9 223l71.4-10.8 -.2-.1 -71.3 10.8zM825.6 223.7l.1-.1 -72.8-11.3 -.2 0zM63.7 232.2l83.7-12.4 -.1-.1 -83.6 12.3zM146.3 220l70.2-10.3 -.2-.1 -70.1 10.3zM913.7 235.5l0-.1 -87.1-13.4 -.2 .1zM827.6 222.2l.1 0 -72.3-11.1 -.1 0zM62.8 230.4l82.9-12 -.1-.1 -82.8 12zM144.5 218.6l69.6-10.1 -.1-.1 -69.6 10.1zM914.7 233.7l.1-.1 -86.3-13 -.1 .1zM829.5 220.8l.2-.1 -71.8-10.8 -.1 .1zM62 228.8l81.9-11.8 -.1-.1 -81.9 11.8zM916.8 230.4l.1-.1 -84.6-12.5 -.2 .1zM833.3 218.1l.1-.1 -70.6-10.4 -.2 .1zM60.3 225.5l80.3-11.2 -.1-.1 -80.3 11.2zM917.9 228.8l0-.1 -83.8-12.2 -.1 .1zM59.5 224l79.5-11 -.1-.1 -79.5 11zM918.8 227.2l.1-.1 -83-11.9 -.1 .1zM-34.3 235.1l94.3-12.8 -.1-.1 -94.1 12.8zM58.7 222.5l78.7-10.8 0 0 -78.7 10.7zM920.8 224.2l0-.1 -81.5-11.4 -.1 .1zM-33.6 231.6l92-12.2 0-.1 -92 12.2zM57.2 219.5l77.2-10.2 -.1-.1 -77.2 10.2zM921.7 222.8l0-.1 -80.7-11.2 -.1 .1zM-33.3 229.9l91-12 -.1 0 -90.9 11.9zM56.5 218.1l76.4-10 -.1-.1 -76.4 10zM1017.7 234.3l0-.1 -96.4-13.1 0 0zM922.6 221.3l0-.1 -79.9-10.9 -.1 .1zM-33 228.2l90-11.6 -.1-.1 -89.8 11.6zM1017.3 231l0-.1 -94.2-12.6 0 .1zM924.3 218.6l.1-.1 -78.6-10.5 -.1 .1zM-32.4 225l87.9-11.1 0-.1 -87.8 11.1zM1017.1 229.4l0-.1 -93.1-12.3 -.1 .1zM-32.1 223.5l87-10.9 -.1-.1 -86.8 10.9zM1017 227.8l0-.1 -92.2-12 0 0zM-31.8 222l86-10.7 0-.1 -86 10.7zM1016.7 224.7l-.1-.1 -90.2-11.5 0 .1zM-31.2 219l84.1-10.1 0-.1 -84.1 10.2zM1016.5 223.3l0-.1 -89.3-11.3 0 .1zM1016.4 221.8l-.1-.1 -88.3-11 -.1 .1zM1016.1 219l-.1-.1 -86.5-10.5 -.1 .1z"/>
<path fill="#5a6377" fill-opacity="0.40" d="M4.3 247.2l.9-.2 -1.3-15.5 -.8 .1zM17.5 245.1l.8-.1 -2.6-15.1 -.7 .1zM30.3 243.2l.8-.1 -3.8-14.8 -.7 .1zM947.5 249.1l5.4-15.3 -.7-.2 -5.6 15.4zM62.4 256.6l.9-.1 -7.6-17.5 -.8 .2zM55 239.4l.8-.1 -6.2-14.1 -.7 .1zM921.2 244.9l7.9-14.6 -.7-.1 -8 14.5zM75.6 254.3l.8-.1 -8.9-17 -.8 .2zM66.9 237.6l.7-.1 -7.2-13.8 -.7 .1zM908.6 242.8l9-14.2 -.7-.1 -9.1 14.2zM88.3 252.1l.9-.1 -10.2-16.5 -.7 .1zM78.4 235.8l.8-.1 -8.3-13.4 -.6 0zM884.2 257.6l12.4-17 -.8-.1 -12.4 16.9zM896.4 240.8l10-13.8 -.7-.1 -10.1 13.8zM112.9 247.9l.8-.1 -12.4-15.7 -.7 .1zM858.4 252.8l14.6-16 -.7-.1 -14.7 16zM872.8 237l12-13.2 -.7-.1 -12 13.2zM124.7 245.9l.7-.2 -13.4-15.3 -.7 .1zM846.1 250.6l15.6-15.7 -.7-.1 -15.7 15.6zM136.2 243.9l.7-.2 -14.4-14.9 -.7 .1zM834.1 248.4l16.6-15.2 -.7-.2 -16.7 15.2zM178 257.4l.7-.1 -20-17.6 -.7 .1zM158.3 240l.6-.1 -16.2-14.2 -.6 .1zM811.1 244.2l18.4-14.5 -.6-.1 -18.5 14.4zM189.6 255.1l.7-.1 -21-17.1 -.7 .1zM168.9 238.2l.6-.1 -17-13.9 -.6 .1zM800 242.1l19.3-14 -.6-.1 -19.4 14zM200.9 252.9l.7-.1 -22-16.7 -.7 .1zM179.2 236.4l.7-.1 -17.9-13.5 -.6 0zM765 256.8l24.6-16.9 -.7-.1 -24.6 16.8zM789.3 240.2l20-13.8 -.6-.1 -20.1 13.7zM222.5 248.6l.7-.1 -23.7-15.9 -.6 .2zM742.8 252.1l26.2-15.9 -.7-.2 -26.2 15.9zM768.6 236.4l21.5-13.1 -.6-.1 -21.5 13.1zM232.9 246.6l.6-.2 -24.4-15.4 -.6 .1zM732.1 249.8l26.9-15.5 -.6-.1 -26.9 15.5zM243 244.6l.6-.2 -25.1-15 -.6 .1zM721.8 247.7l27.6-15.1 -.6-.1 -27.7 15zM294.7 258.3l.7-.2 -32.8-17.8 -.6 .2zM262.4 240.7l.6-.1 -26.4-14.4 -.6 .1zM701.9 243.5l28.8-14.3 -.5-.1 -28.9 14.2zM304.8 255.9l.6-.1 -33.5-17.3 -.5 .1zM271.8 238.9l.6-.2 -27.1-14 -.5 .1zM656.8 258.4l36.1-17.2 -.6-.1 -36.2 17.1zM692.4 241.5l29.4-14 -.6-.1 -29.4 13.9zM314.5 253.7l.6-.2 -34.1-16.8 -.5 .1zM280.9 237l.6-.1 -27.6-13.6 -.6 .1zM647 256l36.6-16.7 -.6-.1 -36.6 16.6zM683.1 239.5l29.9-13.6 -.5-.1 -30 13.6zM333.1 249.4l.6-.2 -35.1-16 -.6 .1zM628.2 251.3l37.6-15.8 -.6-.1 -37.6 15.8zM665.3 235.8l30.8-13 -.5-.1 -30.9 12.9zM342.1 247.3l.6-.2 -35.7-15.5 -.5 .1zM619.3 249.1l37.9-15.4 -.5-.1 -38 15.4zM350.8 245.3l.6-.2 -36.1-15.2 -.5 .1zM610.5 246.9l38.4-14.9 -.6-.1 -38.3 14.9zM412.7 259.1l.5-.2 -45.7-17.9 -.5 .1zM367.6 241.4l.5-.2 -36.9-14.4 -.5 .1zM593.8 242.8l39-14.2 -.5-.1 -39 14.2zM421.1 256.7l.5-.1 -46.1-17.5 -.5 .2zM375.6 239.5l.5-.1 -37.2-14.1 -.5 .1zM538.1 257.6l48.3-17 -.5-.1 -48.3 16.9zM585.7 240.8l39.3-13.8 -.5-.1 -39.3 13.8zM429.2 254.5l.5-.2 -46.3-17 -.5 .1zM383.5 237.7l.5-.1 -37.6-13.8 -.5 .1zM530.1 255.2l48.5-16.6 -.5-.1 -48.5 16.5zM577.9 238.9l39.6-13.5 -.5-.1 -39.6 13.4zM444.8 250.1l.5-.1 -46.8-16.2 -.5 .1zM514.8 250.6l48.7-15.7 -.5-.1 -48.7 15.6zM452.3 248l.5-.1 -47-15.8 -.5 .2zM507.4 248.4l48.9-15.3 -.5-.1 -48.8 15.2zM459.6 246l.5-.2 -47.2-15.3 -.5 .1zM500.3 246.2l48.9-14.8 -.4-.1 -48.9 14.8zM473.7 242l.4-.1 -47.5-14.6 -.4 .1zM486.6 242.1l49-14 -.4-.2 -49 14.1zM538.5 257.6l.5-.2 -58.9-17.6 -.5 .1zM480.4 240.1l.4-.1 -47.6-14.2 -.4 .1zM420.7 256.7l60.1-16.8 -.4-.1 -60.2 16.8zM480 240.1l49.1-13.7 -.4-.1 -49.1 13.7zM545.1 255.3l.4-.2 -58.9-17.1 -.4 .1zM487 238.3l.4-.1 -47.7-13.9 -.4 .1zM414.4 254.4l60-16.4 -.4-.1 -60 16.3zM473.6 238.2l49.1-13.3 -.4-.1 -49.1 13.3zM557.6 250.8l.4-.1 -58.7-16.3 -.4 .1zM402.4 249.8l59.7-15.5 -.4-.1 -59.6 15.5zM563.6 248.7l.4-.1 -58.6-15.9 -.4 .1zM396.7 247.6l59.5-15 -.4-.2 -59.5 15.1zM569.5 246.7l.3-.2 -58.5-15.4 -.4 .1zM391.1 245.5l59.3-14.7 -.4-.1 -59.2 14.7zM580.7 242.7l.4-.1 -58.3-14.7 -.4 .1zM309 258.4l72.4-17.2 -.4-.1 -72.3 17.1zM380.4 241.4l58.9-13.9 -.4-.1 -58.8 13.9zM657.2 258.4l.3-.2 -72-17.8 -.3 .2zM586.1 240.8l.4-.1 -58.2-14.4 -.3 .1zM304.3 255.9l71.9-16.6 -.3-.2 -71.8 16.7zM375.3 239.5l58.6-13.6 -.3-.1 -58.7 13.6zM662.1 256.1l.3-.2 -71.6-17.3 -.4 .1zM591.4 238.9l.3-.1 -57.9-14 -.4 .1zM299.8 253.6l71.4-16.2 -.3-.1 -71.4 16.1zM370.3 237.6l58.4-13.3 -.4-.1 -58.4 13.3zM671.5 251.6l.2-.1 -70.8-16.5 -.3 .2zM291.1 249.1l70.5-15.4 -.3-.1 -70.4 15.3zM676 249.5l.2-.2 -70.4-16 -.3 .1zM287 246.9l69.9-14.9 -.3-.1 -69.9 14.9zM680.3 247.4l.3-.1 -70-15.6 -.3 .1zM282.9 244.8l69.5-14.5 -.3-.1 -69.4 14.5zM688.7 243.4l.3-.1 -69.2-14.9 -.3 .1zM192.1 257.5l84.2-16.9 -.3-.2 -84.1 17zM275.2 240.8l68.5-13.8 -.3-.1 -68.5 13.8zM777.1 259.2l.2-.1 -85.4-18 -.3 .1zM692.8 241.5l.2-.2 -68.8-14.4 -.3 .1zM189.2 255.1l83.3-16.5 -.2-.1 -83.3 16.5zM271.4 238.8l68.1-13.4 -.3-.1 -68 13.4zM780.3 256.9l.2-.2 -84.7-17.5 -.2 .2zM696.7 239.6l.3-.1 -68.5-14.2 -.2 .1zM186.3 252.8l82.6-16.1 -.2-.1 -82.5 16.1zM267.8 237l67.6-13.2 -.3-.1 -67.5 13.1zM786.4 252.4l.2-.2 -83.2-16.5 -.2 .1zM704.3 236l.2-.1 -67.6-13.5 -.2 .1zM180.9 248.3l81-15.2 -.2-.1 -81 15.2zM789.4 250.2l.2-.1 -82.5-16.2 -.2 .1zM178.3 246.2l80.2-14.8 -.2-.1 -80.2 14.8zM792.2 248.1l.2-.1 -81.7-15.8 -.3 .1zM175.7 244.1l79.5-14.4 -.2-.1 -79.4 14.4zM797.8 244.1l.1-.2 -80.4-14.9 -.2 .1zM76.4 256.7l95.7-16.8 -.1-.1 -95.7 16.8zM170.9 240.1l78-13.7 -.2-.1 -78 13.7zM800.4 242.1l.2-.1 -79.7-14.6 -.2 .1zM75.2 254.3l94.6-16.3 -.2-.1 -94.5 16.3zM168.5 238.2l77.3-13.4 -.1-.1 -77.3 13.4zM899.6 257.7l.1-.2 -97.8-17.6 -.2 .1zM803 240.2l.2-.1 -79.1-14.2 -.2 .1zM74 252l93.5-15.9 -.2-.1 -93.4 15.9zM166.2 236.3l76.7-13 -.2-.1 -76.6 13zM902.5 253.1l.1-.1 -95.7-16.7 -.2 .1zM808 236.6l.1-.1 -77.7-13.6 -.2 .1zM71.7 247.6l91.4-15.1 -.2-.1 -91.3 15.1zM903.9 251l.1-.2 -94.7-16.3 -.2 .1zM70.6 245.5l90.3-14.7 -.1-.1 -90.3 14.7zM905.2 248.8l.1-.1 -93.7-15.9 -.1 .1zM69.5 243.4l89.4-14.3 -.2-.1 -89.2 14.3zM907.8 244.8l.1-.2 -91.8-15.1 -.1 .1zM-38.2 255.9l107.1-16.6 -.1-.2 -107 16.7zM67.5 239.5l87.4-13.6 -.2-.1 -87.3 13.6zM909 242.8l.1-.1 -90.8-14.7 -.1 .1zM-37.8 253.6l105.7-16.2 -.1-.2 -105.5 16.2zM66.5 237.6l86.4-13.3 -.1-.1 -86.4 13.3zM1020.2 258.5l0-.1 -111.4-17.9 -.1 .2zM910.2 240.9l.1-.1 -89.9-14.4 -.1 .1zM-37.3 251.3l104.2-15.8 0-.1 -104.2 15.7zM65.5 235.7l85.6-12.9 -.2-.1 -85.4 12.9zM1019.7 253.9l0-.1 -108.5-16.9 -.1 .1zM912.5 237.2l.1-.1 -88-13.7 -.2 .1zM-36.5 246.9l101.6-14.9 -.1-.2 -101.5 15zM1019.5 251.7l0-.1 -107.2-16.5 -.1 .1zM-36.1 244.8l100.3-14.6 -.1-.1 -100.2 14.6zM1019.3 249.6l-.1-.2 -105.8-16 -.1 .1zM-35.7 242.8l99-14.2 -.1-.1 -98.9 14.1zM1018.8 245.5l0-.2 -103.3-15.2 0 .1zM-35 238.8l96.6-13.4 -.1-.1 -96.4 13.4zM1018.6 243.5l0-.1 -102-14.9 -.1 .1zM-34.6 236.9l95.4-13.1 -.1-.1 -95.3 13.1zM1018.4 241.6l0-.2 -100.8-14.4 -.1 0zM1018 237.9l0-.2 -98.5-13.8 -.1 .1zM1017.8 236.1l0-.1 -97.4-13.5 0 .1z"/>
<path fill="#5a6377" fill-opacity="0.53" d="M7.8 291.2l1-.2 -2-25.1 -1 .2zM5.8 266.4l1-.2 -1.6-19.4 -.9 .1zM24.6 287.8l1-.2 -4.1-24.2 -1 .1zM20.6 263.9l.9-.2 -3.2-18.9 -.8 .1zM956 270.7l5.2-19.6 -.9-.2 -5.3 19.7zM40.8 284.6l1.1-.2 -6.1-23.5 -.9 .2zM34.9 261.4l.9-.2 -4.7-18.4 -.8 .1zM940.7 267.9l6.8-19 -.8-.2 -6.9 19.1zM71.8 278.5l1-.2 -9.7-22.1 -.8 .1zM899.4 285.1l12.4-22.8 -.9-.2 -12.5 22.8zM911.6 262.6l9.7-18 -.8-.1 -9.8 17.9zM86.6 275.6l.9-.2 -11.3-21.5 -.8 .2zM883.9 281.8l14-22 -.9-.2 -14.1 22zM897.7 260.1l11.1-17.5 -.8-.2 -11.2 17.5zM100.8 272.7l.9-.2 -12.7-20.8 -.8 .2zM868.9 278.7l15.5-21.4 -.8-.2 -15.6 21.4zM128.1 267.3l.9-.1 -15.5-19.7 -.8 .1zM840.4 272.6l18.3-20 -.8-.2 -18.4 20.1zM162.3 289l.9-.2 -21.5-24.5 -.8 .1zM141.1 264.7l.9-.1 -16.8-19.1 -.7 .1zM826.8 269.8l19.5-19.5 -.7-.1 -19.6 19.4zM176.3 285.7l.9-.2 -22.9-23.7 -.8 .1zM153.8 262.2l.8-.1 -17.9-18.6 -.8 .1zM787.7 290.8l26.3-24.1 -.8-.2 -26.4 24.1zM813.7 267l20.7-18.9 -.8-.1 -20.7 18.8zM203.1 279.5l.8-.2 -25.5-22.3 -.7 .1zM760.2 284l28.8-22.6 -.8-.1 -28.9 22.5zM788.6 261.7l22.8-17.8 -.7-.1 -22.9 17.8zM215.8 276.6l.8-.2 -26.6-21.7 -.8 .2zM747.1 280.7l29.9-21.8 -.7-.1 -30 21.7zM776.6 259.2l23.7-17.3 -.7-.1 -23.7 17.3zM228.1 273.7l.8-.2 -27.7-21 -.7 .1zM734.5 277.6l30.9-21.1 -.7-.2 -31 21.1zM251.7 268.2l.7-.1 -29.6-19.9 -.7 .2zM710.5 271.7l32.7-19.9 -.7-.1 -32.7 19.8zM301.6 290.2l.8-.3 -39.3-24.7 -.7 .1zM262.9 265.6l.8-.1 -30.6-19.3 -.6 .1zM699.1 268.8l33.5-19.2 -.7-.2 -33.5 19.3zM313.4 286.9l.7-.2 -40.1-24.1 -.7 .2zM273.9 263.1l.6-.2 -31.3-18.7 -.6 .1zM645 289.6l43.6-23.8 -.7-.2 -43.6 23.8zM688 266.1l34.2-18.7 -.6-.1 -34.3 18.6zM335.8 280.6l.7-.2 -41.6-22.6 -.7 .2zM622.6 282.9l44.9-22.3 -.7-.2 -44.9 22.3zM666.9 260.9l35.5-17.7 -.6-.1 -35.6 17.6zM346.5 277.6l.7-.2 -42.4-21.9 -.6 .2zM611.9 279.7l45.5-21.6 -.7-.2 -45.4 21.6zM356.9 274.7l.6-.2 -43-21.2 -.6 .1zM601.6 276.6l46-20.9 -.6-.2 -46 20.9zM376.6 269.2l.6-.2 -44.1-20 -.5 .1zM582 270.7l46.8-19.6 -.5-.2 -46.9 19.6zM442.6 291.3l.6-.2 -57.3-25 -.6 .1zM386 266.5l.6-.1 -44.5-19.5 -.6 .1zM572.7 267.9l47.2-19.1 -.6-.1 -47.2 19zM452.1 288l.6-.2 -57.7-24.3 -.6 .2zM395.2 264l.6-.2 -45-18.9 -.6 .1zM504 288.4l60.4-23.5 -.5-.2 -60.4 23.5zM563.6 265.2l47.6-18.5 -.6-.1 -47.5 18.4zM470.1 281.7l.6-.2 -58.2-22.9 -.6 .2zM486.6 281.8l60.6-22.1 -.6-.1 -60.6 22zM546.4 260l48-17.4 -.5-.2 -48.1 17.5zM478.7 278.6l.5-.2 -58.4-22.1 -.5 .2zM478.2 278.6l60.7-21.3 -.5-.2 -60.7 21.3zM487 275.7l.5-.2 -58.5-21.5 -.6 .2zM470.2 275.6l60.7-20.7 -.5-.2 -60.7 20.7zM502.9 270.1l.5-.1 -58.9-20.3 -.4 .1zM454.9 269.8l60.7-19.5 -.5-.1 -60.7 19.4zM510.4 267.5l.5-.2 -58.9-19.7 -.4 .1zM371.4 290.7l77.2-24 -.4-.2 -77.2 24zM447.6 267l60.6-18.9 -.4-.1 -60.6 18.8zM592.5 289.2l.4-.2 -75.6-24.6 -.5 .2zM517.8 264.9l.4-.2 -58.9-19.1 -.4 .1zM364.7 287.3l76.9-23.3 -.5-.2 -76.8 23.3zM440.6 264.3l60.5-18.3 -.4-.2 -60.6 18.3zM606 282.7l.4-.2 -75.1-23 -.5 .1zM531.8 259.9l.5-.1 -59-18.1 -.4 .1zM352.1 280.7l76-21.8 -.4-.2 -76 21.8zM427.1 259.2l60.3-17.3 -.4-.1 -60.3 17.2zM612.4 279.7l.4-.2 -74.8-22.4 -.4 .2zM346.1 277.6l75.5-21.1 -.4-.2 -75.5 21.1zM618.6 276.7l.4-.2 -74.5-21.7 -.4 .2zM340.2 274.6l75.2-20.5 -.4-.2 -75.1 20.5zM630.5 271.1l.4-.2 -73.9-20.5 -.4 .2zM329.2 268.8l74.2-19.2 -.4-.2 -74.2 19.2zM636.2 268.4l.3-.2 -73.5-19.9 -.4 .2zM231.2 289.6l93.9-23.8 -.3-.2 -93.8 23.7zM323.9 266.1l73.8-18.7 -.4-.1 -73.7 18.6zM734.5 290.3l.3-.2 -94-24.8 -.4 .2zM641.7 265.8l.3-.2 -73.1-19.3 -.4 .1zM227.1 286.1l92.9-23 -.3-.1 -92.9 22.9zM318.8 263.4l73.3-18.1 -.4-.2 -73.2 18.2zM743.4 283.8l.3-.2 -92.4-23.3 -.3 .2zM652.2 260.8l.3-.2 -72.4-18.3 -.3 .2zM219.1 279.7l91.1-21.6 -.3-.2 -91 21.6zM747.6 280.7l.3-.1 -91.6-22.7 -.3 .2zM215.4 276.6l90.1-20.9 -.3-.2 -90.1 20.9zM751.7 277.8l.3-.2 -90.8-22 -.3 .2zM211.7 273.6l89.3-20.3 -.3-.1 -89.2 20.2zM759.5 272l.3-.1 -89.2-20.7 -.3 .1zM204.8 267.9l87.5-19.1 -.3-.1 -87.5 19zM763.2 269.3l.3-.1 -88.4-20.1 -.3 .1zM92.7 288.4l110.2-23.5 -.2-.2 -110.1 23.5zM201.5 265.2l86.6-18.5 -.2-.2 -86.7 18.5zM878.3 291.5l.1-.2 -112.8-25.1 -.2 .2zM766.8 266.7l.3-.2 -87.6-19.5 -.3 .1zM91 285l108.7-22.7 -.2-.2 -108.6 22.7zM198.2 262.6l85.9-18 -.3-.2 -85.8 18zM882.4 284.9l.1-.2 -110-23.5 -.2 .1zM773.8 261.6l.2-.1 -86.1-18.5 -.3 .1zM87.7 278.6l105.8-21.3 -.2-.2 -105.7 21.3zM884.4 281.8l.1-.2 -108.6-22.8 -.3 .1zM86.1 275.6l104.5-20.7 -.2-.2 -104.4 20.7zM886.3 278.8l.1-.2 -107.3-22.2 -.2 .2zM84.6 272.6l103.1-20.1 -.2-.1 -103 20zM889.9 273l.2-.2 -104.9-20.8 -.2 .1zM-44.8 290.7l128.1-24 -.1-.2 -127.9 24zM81.7 267l100.5-18.9 -.2-.1 -100.4 18.8zM891.7 270.3l.1-.2 -103.6-20.3 -.2 .1zM-44.1 287.3l126-23.3 -.1-.2 -125.9 23.2zM80.3 264.3l99.3-18.3 -.2-.2 -99.2 18.3zM893.4 267.6l.1-.2 -102.4-19.7 -.2 .2zM-43.5 283.9l124.1-22.5 -.1-.2 -124 22.5zM78.9 261.7l98.1-17.8 -.1-.1 -98 17.7zM1023.1 286.1l0-.2 -128.1-23.9 -.1 .2zM896.6 262.5l.1-.2 -100.1-18.6 -.2 .1zM-42.3 277.6l120.3-21.2 -.1-.1 -120.2 21.1zM1022.8 282.9l-.1-.2 -126.1-23.1 -.1 .2zM898.1 260.1l.1-.2 -98.9-18.1 -.2 .1zM-41.7 274.5l118.4-20.4 -.1-.2 -118.3 20.5zM1022.4 279.8l0-.1 -124.3-22.5 -.1 .2zM-41.2 271.6l116.7-19.8 -.1-.2 -116.5 19.8zM1021.8 274l0-.2 -120.8-21.1 -.1 .2zM-40.1 266.1l113.3-18.7 -.1-.2 -113.2 18.7zM1021.5 271.2l0-.2 -119.1-20.4 -.1 .1zM-39.6 263.4l111.7-18.1 -.1-.2 -111.6 18.1zM1021.2 268.5l0-.1 -117.4-20 -.1 .2zM-39.1 260.8l110.1-17.6 -.1-.1 -110 17.6zM1020.7 263.4l0-.2 -114.3-18.8 -.1 .1zM1020.4 260.9l0-.2 -112.8-18.3 -.1 .2z"/>
<path fill="#5a6377" fill-opacity="0.67" d="M10.3 324.2l1.3-.3 -2.8-33.4 -1.1 .2zM29.9 319.7l1.2-.3 -5.5-32.2 -1.1 .2zM940.6 328.6l8.9-33.4 -1.1-.3 -9.1 33.4zM949.4 295.6l6.7-25.2 -1-.2 -6.9 25.2zM48.7 315.3l1.1-.2 -8-31.1 -1.1 .2zM920.8 323.7l11.5-32.1 -1.1-.3 -11.7 32.1zM932.1 292l8.7-24.4 -.9-.1 -8.9 24.2zM84.1 307.1l1.1-.2 -12.6-29 -1 .2zM883.5 314.5l16.1-29.8 -1-.2 -16.2 29.7zM120.4 340.8l1.2-.3 -19.9-38 -1.1 .2zM100.9 303.2l1-.2 -14.6-28 -.9 .2zM866 310.1l18.1-28.7 -.9-.2 -18.3 28.7zM139 335.6l1.2-.3 -22.4-36.5 -1 .2zM117.1 299.5l1-.3 -16.6-27 -.9 .2zM849.1 306l20.1-27.7 -1-.2 -20.2 27.6zM173.9 325.9l1.1-.3 -26.7-33.9 -.9 .2zM147.7 292.4l1-.3 -20-25.3 -.8 .2zM786.4 332l31.3-34.3 -1-.3 -31.4 34.3zM817.3 298.1l23.4-25.8 -.9-.2 -23.5 25.8zM190.4 321.3l1-.3 -28.6-32.6 -.9 .2zM769.6 326.9l33-32.9 -.9-.3 -33.2 32.9zM802.2 294.4l25-24.9 -.9-.2 -25 24.8zM206.2 316.9l1-.3 -30.4-31.5 -.9 .2zM753.5 322.1l34.7-31.7 -1-.2 -34.8 31.6zM236 308.5l.9-.2 -33.4-29.3 -.9 .1zM723.1 313l37.6-29.4 -.9-.2 -37.6 29.3zM250.1 304.6l.9-.3 -34.8-28.3 -.8 .2zM708.8 308.7l38.8-28.3 -.8-.2 -38.9 28.3zM311.7 337.4l1-.3 -48.8-37 -.9 .2zM263.7 300.8l.8-.3 -36-27.3 -.8 .2zM642 340.9l53.8-36.8 -.9-.2 -53.8 36.6zM695.1 304.6l39.9-27.3 -.7-.2 -40.1 27.2zM339.9 327.5l.9-.3 -51.3-34.3 -.8 .2zM289.4 293.6l.8-.2 -38.3-25.7 -.7 .2zM614.1 330.3l55.7-33.9 -.8-.2 -55.8 33.7zM669.1 296.8l42-25.5 -.8-.1 -42 25.4zM353.1 322.9l.9-.3 -52.3-33.1 -.8 .2zM601 325.3l56.6-32.6 -.8-.2 -56.6 32.5zM656.9 293.1l42.7-24.6 -.7-.1 -42.8 24.5zM365.9 318.4l.8-.3 -53.2-31.8 -.8 .2zM588.5 320.5l57.3-31.3 -.8-.2 -57.3 31.2zM389.9 309.9l.7-.2 -54.8-29.7 -.7 .2zM564.8 311.5l58.5-29 -.7-.2 -58.5 29zM401.2 305.9l.7-.2 -55.4-28.7 -.7 .2zM553.7 307.3l59-28 -.7-.2 -59 28zM487.1 339.3l.7-.4 -76-37.5 -.6 .2zM412.1 302.1l.7-.2 -56-27.7 -.7 .1zM464.4 339l79.6-36.2 -.6-.3 -79.7 36.2zM543 303.3l59.4-27.1 -.7-.1 -59.3 26.9zM508.2 329.2l.7-.3 -76.4-34.8 -.7 .3zM432.8 294.8l.6-.2 -56.9-25.9 -.6 .1zM444.2 328.6l79.6-33.4 -.6-.3 -79.6 33.3zM522.8 295.6l60-25.2 -.6-.2 -60 25.1zM518.2 324.5l.6-.3 -76.5-33.5 -.7 .2zM434.8 323.7l79.5-32.2 -.6-.2 -79.5 32.1zM513.3 291.9l60.2-24.3 -.6-.2 -60.2 24.3zM527.7 319.9l.6-.2 -76.6-32.3 -.6 .2zM425.7 319l79.4-31 -.6-.2 -79.3 30.9zM545.8 311.4l.5-.3 -76.6-30 -.5 .2zM408.7 310.1l78.9-28.7 -.6-.2 -78.8 28.6zM554.3 307.3l.5-.2 -76.5-29 -.6 .2zM400.7 305.9l78.6-27.6 -.6-.2 -78.6 27.6zM665.1 341.1l.4-.3 -103.8-38.1 -.5 .3zM562.5 303.4l.5-.2 -76.4-28 -.6 .1zM289.4 337.2l104.8-35.7 -.4-.3 -104.8 35.7zM392.9 301.9l78.3-26.7 -.5-.2 -78.3 26.7zM679 330.9l.5-.3 -102.3-35.2 -.5 .2zM578 296l.5-.2 -76.1-26.2 -.5 .2zM276.8 326.9l102.8-33 -.4-.2 -102.8 32.9zM378.3 294.3l77.6-24.9 -.4-.1 -77.6 24.8zM685.6 326.1l.4-.3 -101.5-33.9 -.4 .2zM585.3 292.5l.5-.2 -75.9-25.3 -.4 .1zM270.9 322.1l101.8-31.8 -.4-.2 -101.8 31.7zM691.9 321.5l.4-.3 -100.7-32.7 -.4 .3zM265.2 317.4l100.8-30.5 -.4-.2 -100.7 30.4zM703.8 312.8l.3-.2 -99-30.4 -.4 .2zM254.6 308.7l98.7-28.3 -.4-.3 -98.7 28.3zM709.4 308.7l.3-.2 -98.1-29.4 -.5 .2zM119.8 340.8l131.4-36.7 -.3-.2 -131.3 36.6zM249.5 304.6l97.8-27.4 -.4-.2 -97.7 27.3zM714.8 304.8l.3-.3 -97.3-28.3 -.4 .2zM117 335.4l129.3-35.2 -.3-.3 -129.2 35.2zM244.7 300.6l96.8-26.4 -.4-.2 -96.7 26.4zM852.3 332.6l.2-.3 -128.8-35.7 -.3 .3zM725 297.3l.3-.2 -95.7-26.5 -.3 .1zM111.7 325.2l125.5-32.5 -.3-.2 -125.3 32.4zM235.6 293.1l94.8-24.6 -.3-.2 -94.8 24.6zM855.4 327.8l.2-.3 -127.1-34.4 -.3 .2zM729.8 293.8l.3-.3 -94.8-25.6 -.4 .2zM109.3 320.5l123.5-31.3 -.3-.3 -123.4 31.3zM858.3 323.1l.2-.3 -125.3-33.1 -.3 .2zM106.9 315.9l121.7-30.1 -.3-.3 -121.5 30.1zM863.9 314.3l.2-.3 -122-30.8 -.3 .2zM102.5 307.3l118.1-28 -.2-.2 -118.1 27.9zM866.5 310.1l.2-.2 -120.3-29.7 -.3 .2zM-53.9 339l156.2-36.2 -.1-.3 -156 36.1zM100.4 303.2l116.5-27 -.3-.2 -116.4 27zM869 306.1l.2-.2 -118.7-28.7 -.3 .2zM-52.9 333.6l153.2-34.7 -.1-.3 -153 34.7zM98.4 299.3l114.8-26.1 -.2-.1 -114.8 26zM1028.1 334.4l0-.3 -156.1-36.2 -.1 .2zM873.8 298.6l.2-.3 -115.7-26.8 -.3 .2zM-51 323.6l147.4-32.1 -.1-.2 -147.2 32zM94.5 291.9l111.7-24.3 -.2-.2 -111.6 24.3zM1027.6 329.5l0-.3 -153.3-34.9 -.2 .3zM876.1 295l.1-.2 -114.2-26 -.2 .2zM-50.1 318.9l144.7-30.9 -.1-.2 -144.6 30.8zM1027.1 324.7l0-.3 -150.6-33.5 -.1 .2zM-49.3 314.4l142.1-29.8 -.1-.2 -141.9 29.7zM1026.2 315.8l0-.3 -145.5-31.2 -.1 .3zM-47.7 305.9l137.1-27.7 -.1-.1 -136.9 27.5zM1025.8 311.6l-.1-.3 -143-30.1 -.1 .2zM-46.9 301.9l134.7-26.7 -.1-.2 -134.5 26.6zM1025.3 307.5l0-.2 -140.7-29.1 -.1 .2zM-46.2 298l132.5-25.7 -.1-.2 -132.3 25.7zM1024.5 299.9l0-.3 -136.2-27.1 -.1 .2zM1024.1 296.2l0-.2 -134-26.2 -.1 .1zM1023.8 292.7l0-.2 -132-25.4 -.1 .2z"/>
<path fill="#5c6579" d="M46.8 793.3l3.8-2.7 -19.8-236.8 -2.5 1.2zM28.5 557.3l2.5-1.2 -9.8-117.6 -1.9 .6zM19.4 440.4l1.9-.6 -5.9-70.4 -1.5 .4zM13.9 370.6l1.6-.4 -3.9-46.8 -1.3 .3zM877.1 818.5l42.6-245.7 -2.5-1.3 -43.9 243.9zM919.3 575.2l21.3-122.3 -2-.7 -21.9 121.7zM940.3 454.3l12.8-73.3 -1.6-.5 -13.1 73zM952.9 381.9l8.5-48.8 -1.4-.3 -8.7 48.6zM101.8 753.1l3.3-2.4 -36.8-214.6 -2.3 1.1zM66.3 539.3l2.3-1.1 -18.8-109.8 -1.8 .6zM48.2 430.3l1.8-.7 -11.4-66.7 -1.5 .4zM37.2 364.1l1.5-.4 -7.7-44.8 -1.2 .2zM822.3 773.7l58.7-220.9 -2.4-1.2 -59.6 219.4zM880.4 555l30.2-113.4 -1.9-.7 -30.7 112.9zM910.2 442.8l18.4-69.1 -1.5-.4 -18.7 68.8zM928.4 374.5l12.4-46.5 -1.3-.3 -12.6 46.4zM150.8 717.3l2.9-2.2 -50.7-195.4 -2.2 1zM101.3 522.7l2.2-1 -26.7-102.8 -1.7 .6zM75.4 420.7l1.7-.6 -16.4-63.4 -1.4 .4zM59.5 357.9l1.4-.4 -11.2-43 -1.2 .3zM774 734.1l71.4-199.7 -2.2-1.1 -72.1 198.4zM844.7 536.5l37.7-105.6 -1.7-.7 -38.2 105.1zM882 432.1l23.4-65.3 -1.5-.5 -23.7 65.1zM905.1 367.6l15.9-44.4 -1.3-.4 -16.1 44.3zM234.3 656.2l2.5-1.8 -71.6-164.1 -1.9 .8zM164.1 492.9l1.8-.9 -39.4-90.5 -1.5 .5zM125.4 403.1l1.5-.6 -25-57.3 -1.2 .4zM101 346.3l1.3-.4 -17.3-39.5 -1.1 .2zM692.4 667.3l89.7-165.6 -1.9-.9 -90.1 164.5zM781.1 503.5l49.9-92.1 -1.6-.6 -50.2 91.7zM830.4 412.5l31.8-58.6 -1.4-.4 -31.9 58.4zM861.8 354.6l22-40.6 -1.2-.3 -22.1 40.5zM448.2 973l2.7-4.3 -180.1-343.5 -2.1 1.6zM270.3 629.9l2.2-1.6 -79.3-151.3 -1.8 .8zM192.3 479.5l1.7-.9 -44.6-85.1 -1.5 .5zM148.5 395l1.4-.5 -28.6-54.7 -1.2 .4zM445.9 972.9l213.7-337.2 -2.1-1.7 -213.9 334.4zM657.7 638.8l96.1-151.7 -1.7-.9 -96.5 150.9zM752.8 488.8l54.6-86.3 -1.4-.5 -55 85.8zM806.8 403.5l35.3-55.6 -1.3-.4 -35.5 55.4zM841.6 348.5l24.7-38.8 -1.1-.3 -24.8 38.8zM487.7 910.4l2.3-3.7 -186.8-305 -1.9 1.4zM303 606l2-1.5 -85.7-139.9 -1.6 .8zM218.6 466.9l1.7-.8 -49.2-80.3 -1.4 .5zM170.3 387.3l1.4-.5 -31.9-52.1 -1.2 .3zM412.3 907.8l216-297.5 -1.9-1.6 -216 295.3zM626.2 613.1l101.3-139.6 -1.6-.8 -101.6 138.8zM726.4 475.1l58.8-81 -1.4-.5 -59 80.6zM784.5 395l38.4-52.9 -1.2-.3 -38.6 52.7zM822.4 342.8l27-37.3 -1-.3 -27.2 37.2zM551.9 808.6l1.8-2.8 -193.5-245.4 -1.7 1.2zM360.4 564l1.7-1.2 -95.2-120.7 -1.4 .7zM266.5 444.1l1.5-.6 -56.6-71.8 -1.2 .4zM210.8 373l1.3-.4 -37.5-47.6 -1.1 .3zM358.1 802.8l215.5-236.9 -1.6-1.3 -215.4 235.3zM571.5 568.2l108.5-119.2 -1.4-.7 -108.7 118.6zM678.8 450.3l65.3-71.8 -1.3-.4 -65.5 71.5zM743.3 379.4l43.7-48 -1.1-.3 -43.8 47.8zM578.3 766.7l1.6-2.5 -194.6-222 -1.6 1.1zM385.7 545.5l1.5-1.1 -98.6-112.5 -1.3 .6zM288.4 433.8l1.3-.7 -59.6-68 -1.2 .5zM229.6 366.4l1.2-.5 -39.9-45.5 -1 .3zM336 759.8l213.7-213.3 -1.5-1.2 -213.6 211.9zM547.5 548.6l110.9-110.7 -1.3-.7 -111 110.2zM657.2 439.1l67.9-67.8 -1.2-.4 -68 67.5zM724.3 372.2l45.9-45.8 -1.1-.3 -46 45.6zM601.9 729.4l1.4-2.2 -194.8-201.9 -1.4 1zM409.1 528.4l1.4-1.1 -101.4-105.1 -1.3 .6zM308.9 424l1.3-.6 -62.2-64.5 -1.1 .4zM247.6 360l1.1-.4 -42.1-43.6 -.9 .3zM316.3 721.8l211.3-193.2 -1.3-1.1 -211.1 192zM525.5 530.5l112.7-103 -1.2-.7 -112.9 102.6zM637 428.6l70.1-64.1 -1.2-.4 -70.2 63.9zM706.2 365.3l47.8-43.7 -1-.3 -47.9 43.6zM641.9 666l1.1-1.8 -192.9-169.1 -1.2 .9zM450.9 497.8l1.2-.9 -105.5-92.5 -1.1 .6zM346.7 406l1.1-.5 -66.5-58.3 -1 .3zM281.1 348.2l1-.3 -45.8-40.1 -.9 .2zM283.1 657.4l205.3-160.7 -1.2-.9 -205 159.7zM486.2 498.4l115.1-90 -1.2-.6 -115 89.7zM599.9 409.4l73.6-57.6 -1-.4 -73.7 57.4zM672.6 352.5l51.1-40 -.9-.3 -51.2 39.9zM1097.6 997.3l-.5-4.5 -440.9-358.8 -1.1 1.6zM659.1 638.8l1-1.6 -191.3-155.6 -1.2 .8zM469.7 484.1l1.1-.9 -106.9-87 -1 .6zM364.1 397.8l1.1-.6 -68.3-55.5 -1 .4zM296.7 342.7l1-.3 -47.3-38.6 -.9 .3zM-169.4 949.9l442.4-323 -.8-1.7 -440.8 320.4zM268.9 629.9l202-147.4 -1.1-.9 -201.7 146.6zM468.7 484l115.6-84.4 -1-.5 -115.7 84.1zM583 400.6l74.9-54.7 -1-.4 -75 54.6zM657 346.6l52.5-38.4 -.9-.2 -52.6 38.2zM1090.7 931.3l-.4-3.9 -418.5-317.7 -1 1.5zM674.7 614.1l.9-1.5 -189.3-143.7 -1.1 .8zM487.2 471.2l1.1-.8 -108-81.9 -1 .5zM380.6 389.9l1-.5 -69.8-52.9 -.9 .3zM-157.7 888l417.7-285.8 -.7-1.5 -416.3 283.7zM256.1 605l198.4-135.8 -1-.8 -198.2 135zM452.4 470.7l115.9-79.4 -1-.5 -116 79zM566.9 392.3l76.1-52 -1-.4 -76.1 51.9zM1079.5 824.6l-.3-2.9 -380.1-254.6 -.8 1.3zM702 570.9l.8-1.3 -184.8-123.7 -1 .7zM519.1 447.9l.9-.7 -109.2-73.1 -1 .4zM411.1 375.4l.9-.4 -72.1-48.4 -.9 .3zM-138.7 787.7l376.1-228.5 -.7-1.3 -374.9 227zM233.6 561.5l191.4-116.3 -.9-.7 -191.1 115.7zM422.8 446.5l115.9-70.4 -.9-.5 -115.8 70.2zM537.3 376.9l77.8-47.2 -.9-.3 -77.8 47zM1074.9 780.9l-.2-2.7 -363.6-229.8 -.7 1.1zM714 551.8l.7-1.1 -182.3-115.3 -.9 .7zM533.5 437.3l.9-.6 -109.5-69.3 -.9 .4zM425.3 368.7l.9-.5 -73.1-46.2 -.9 .3zM-130.9 746.5l358.3-206.2 -.6-1.2 -357.3 204.9zM223.8 542.4l187.8-108.1 -.9-.7 -187.5 107.6zM409.5 435.5l115.5-66.5 -.8-.4 -115.6 66.3zM523.7 369.8l78.3-45.1 -.8-.3 -78.4 45zM1070.9 742l-.3-2.3 -348.3-208.6 -.7 1zM725.1 534.2l.7-1 -179.8-107.7 -.8 .6zM547.2 427.4l.8-.7 -109.7-65.7 -.8 .4zM438.8 362.2l.9-.4 -74-44.2 -.8 .2zM-124 709.9l342.2-187 -.5-1.1 -341.3 185.9zM214.7 524.8l184.3-100.7 -.8-.6 -184 100.2zM396.9 425.2l115.1-62.9 -.8-.4 -115.1 62.7zM510.6 363l78.8-43 -.7-.3 -78.9 42.9zM1064 676.2l-.2-1.9 -321.7-174.2 -.6 .9zM744.9 502.8l.6-.9 -174.5-94.5 -.8 .6zM572.2 409l.8-.5 -109.5-59.3 -.8 .3zM464 350.2l.8-.3 -75.1-40.7 -.8 .2zM-112.3 647.8l314.2-156 -.5-.9 -313.3 155.1zM198.5 493.5l177.4-88.1 -.7-.6 -177.1 87.7zM373.9 406.4l113.9-56.6 -.7-.4 -113.9 56.4zM486.4 350.5l79.4-39.4 -.7-.3 -79.4 39.3zM1061 648.1l-.2-1.7 -309.7-160.2 -.6 .9zM753.8 488.8l.5-.9 -171.8-88.8 -.7 .5zM583.8 400.6l.7-.5 -109.3-56.5 -.7 .4zM475.8 344.6l.7-.3 -75.6-39.1 -.7 .3zM-107.3 621.2l301.9-143.3 -.5-.9 -301.1 142.6zM191.3 479.4l174-82.6 -.6-.5 -173.8 82.3zM363.3 397.7l113.3-53.7 -.8-.4 -113.1 53.6zM475.2 344.6l79.5-37.8 -.7-.2 -79.5 37.7zM1058.3 622.5l-.1-1.5 -298.8-147.8 -.5 .8zM762.1 475.6l.5-.8 -169.2-83.6 -.7 .5zM594.7 392.6l.7-.5 -108.9-53.8 -.7 .3zM-102.7 597.1l290.4-132.2 -.4-.8 -289.7 131.5zM184.6 466.4l170.7-77.7 -.6-.5 -170.6 77.4zM353.3 389.6l112.5-51.2 -.7-.3 -112.4 51zM1053.7 577.9l-.2-1.3 -279-126.9 -.5 .7zM777.1 451.8l.5-.7 -164-74.6 -.6 .5zM614.9 377.8l.6-.4 -107.9-49.1 -.7 .3zM-94.7 554.9l270.1-113.4 -.4-.7 -269.5 112.8zM172.4 442.7l164.5-69 -.6-.5 -164.3 68.8zM334.9 374.5l110.7-46.5 -.6-.3 -110.7 46.3zM1051.6 558.3l-.1-1.2 -270.1-118.1 -.5 .7zM783.9 441l.5-.7 -161.5-70.6 -.5 .4zM624.3 371l.5-.4 -107.3-47 -.6 .3zM-91.2 536.3l261-105.5 -.4-.7 -260.4 105.1zM166.8 432l161.5-65.3 -.5-.4 -161.3 65zM326.4 367.5l109.8-44.4 -.6-.3 -109.8 44.3zM1049.7 540.3l-.1-1.1 -261.8-110.3 -.4 .7zM790.4 430.8l.4-.6 -158.9-67 -.6 .4zM633.2 364.4l.5-.4 -106.7-44.9 -.6 .3zM-88 519.2l252.5-98.4 -.3-.6 -252 97.9zM161.6 421.9l158.6-61.8 -.5-.4 -158.4 61.6zM318.3 360.8l108.8-42.4 -.6-.3 -108.7 42.3zM1046.3 508l-.1-.9 -246.5-96.7 -.3 .6zM802.2 412.1l.3-.6 -154-60.3 -.5 .3zM649.8 352.3l.6-.4 -105.4-41.3 -.5 .3zM-82.2 488.6l237-86.2 -.3-.5 -236.5 85.8zM152.1 403.4l152.9-55.6 -.4-.4 -152.8 55.5zM303.2 348.5l106.8-38.9 -.5-.3 -106.8 38.8zM1044.8 493.6l-.1-.9 -239.5-90.8 -.4 .6zM807.6 403.5l.3-.5 -151.6-57.5 -.5 .4zM657.6 346.6l.5-.4 -104.6-39.6 -.5 .2zM-79.6 474.9l230-80.9 -.3-.5 -229.5 80.6zM147.7 395l150.3-52.9 -.5-.4 -150.1 52.7zM296.1 342.7l105.9-37.2 -.5-.3 -105.8 37.2zM1043.4 480.1l-.1-.8 -232.9-85.4 -.4 .5zM812.7 395.4l.3-.5 -149.3-54.8 -.4 .4zM-77.2 462.2l223.4-76.2 -.3-.5 -222.9 75.9zM143.6 386.9l147.6-50.3 -.4-.3 -147.5 50.1zM1040.9 455.8l-.1-.8 -220.9-76 -.3 .4zM822.2 380.3l.3-.4 -144.8-49.9 -.4 .3zM-72.8 439l211.2-67.7 -.2-.5 -210.9 67.6zM135.9 372.1l142.7-45.8 -.4-.3 -142.5 45.6zM1039.7 444.7l-.1-.7 -215.2-71.9 -.3 .4zM826.6 373.3l.3-.4 -142.7-47.7 -.4 .3zM-70.8 428.5l205.6-64 -.2-.5 -205.3 63.9zM132.4 365.2l140.2-43.7 -.3-.3 -140.2 43.6zM1038.6 434.3l0-.6 -210-68.2 -.3 .4zM830.8 366.7l.3-.4 -140.5-45.6 -.4 .2zM-69 418.6l200.4-60.6 -.2-.5 -200 60.5zM129 358.7l138-41.8 -.4-.3 -137.8 41.7zM1036.6 415.2l0-.5 -200.1-61.5 -.3 .4zM838.6 354.3l.3-.4 -136.5-41.9 -.3 .3zM-65.5 400.5l190.5-54.7 -.2-.3 -190.2 54.5zM122.7 346.5l133.6-38.3 -.4-.3 -133.4 38.2zM1035.7 406.5l-.1-.6 -195.4-58.4 -.3 .3zM842.3 348.5l.2-.3 -134.5-40.2 -.3 .2zM-64 392.2l186.1-52 -.2-.3 -185.8 51.8zM1034.8 398.2l0-.5 -191.1-55.7 -.2 .3zM845.8 343l.2-.3 -132.6-38.7 -.3 .3zM-62.5 384.3l181.7-49.5 -.2-.3 -181.4 49.3zM1033.2 382.9l0-.5 -182.9-50.7 -.2 .3zM-59.7 369.7l173.6-45 -.2-.3 -173.3 44.9zM1032.5 375.8l-.1-.5 -179-48.4 -.2 .3zM-58.4 363l169.8-43.1 -.2-.3 -169.6 43zM1031.8 369l-.1-.4 -175.3-46.4 -.2 .3zM-57.2 356.6l166.2-41.2 -.2-.3 -166 41.1zM1030.5 356.4l-.1-.4 -168.4-42.5 -.2 .3zM-55 344.6l159.5-37.8 -.2-.3 -159.2 37.7zM1029.8 350.5l0-.3 -165.2-40.8 -.1 .2zM1029.3 344.9l-.1-.3 -162-39.2 -.2 .3z"/>
<path fill="#576074" fill-opacity="0.16" d="M24.8 189.9l1.4-.1 -2.3-6.4 -1.3 .1zM56.5 186.8l1.3-.1 -4.2-6 -1.3 .1zM86.1 183.9l1.3-.1 -6-5.6 -1.1 .1zM893.1 187l6.8-5.7 -1.2-.2 -6.9 5.8zM122.3 187l1.2-.1 -8.5-6 -1.1 .2zM114 181.1l1.2-.1 -7.5-5.2 -1.1 .1zM863.6 184l8.3-5.4 -1.1-.1 -8.4 5.3zM149.9 184.1l1.2-.1 -9.9-5.6 -1.1 .1zM825.1 186.7l11-5.7 -1.1-.1 -11.1 5.7zM835.9 181.1l9.7-5.1 -1-.1 -9.8 5.1zM188.4 187.3l1.2-.1 -12.8-6 -1 .1zM176 181.4l1-.1 -11.2-5.3 -1 .1zM784.2 189.7l13.9-6.1 -1.1-.1 -13.9 6.1zM797.9 183.7l12.3-5.3 -1.1-.2 -12.3 5.4zM214.1 184.4l1.1-.1 -14-5.7 -1 .1zM200.4 178.8l1-.1 -12.3-5 -1 .1zM757.6 186.5l15-5.7 -1-.1 -15.1 5.7zM772.4 180.9l13.4-5.1 -1-.1 -13.4 5.1zM255 187.6l1-.1 -17-6.1 -1 .1zM238.2 181.6l1-.1 -15-5.3 -.9 .1zM714.6 189.4l18.3-6 -1-.1 -18.3 6zM732.6 183.5l16.1-5.4 -.9-.1 -16.2 5.3zM278.6 184.6l1-.1 -18-5.7 -.9 .1zM260.9 179l.9-.1 -15.9-5 -.9 .1zM690.4 186.2l19.1-5.6 -.9-.1 -19.2 5.6zM709.3 180.6l16.9-5 -.9-.1 -17 5zM321.9 187.9l1-.2 -21.4-6.1 -1 .2zM300.8 181.8l.9-.1 -18.8-5.3 -.9 .1zM645.4 189.2l22.6-6.1 -.9-.1 -22.6 6zM667.7 183.2l19.9-5.3 -.9-.1 -20 5.3zM343.5 184.9l.9-.1 -22.1-5.8 -.9 .2zM321.7 179.2l.9-.1 -19.6-5 -.8 .1zM623.5 186l23.2-5.7 -.8-.1 -23.3 5.6zM646.4 180.4l20.6-5 -.9-.1 -20.5 5zM389.2 188.1l.9-.1 -25.8-6.1 -.9 .1zM363.8 182.1l.8-.1 -22.7-5.4 -.8 .1zM576.6 188.9l26.9-6 -.9-.1 -26.8 5.9zM603.1 183l23.7-5.3 -.8-.1 -23.8 5.3zM408.8 185.1l.8-.1 -26.3-5.7 -.8 .1zM382.8 179.5l.8-.2 -23.2-5 -.8 .1zM557.1 185.7l27.2-5.6 -.8-.1 -27.2 5.6zM583.9 180.2l24.1-5 -.7-.1 -24.2 5zM457 188.4l.7-.1 -30.3-6.2 -.7 .1zM427.1 182.3l.7-.1 -26.6-5.4 -.8 .1zM508.2 188.6l31.1-5.9 -.8-.2 -31 6zM538.9 182.7l27.4-5.2 -.7-.1 -27.5 5.2zM474.4 185.4l.7-.1 -30.5-5.8 -.7 .1zM444.3 179.7l.7-.1 -26.9-5.1 -.7 .1zM491 185.4l31.2-5.5 -.7-.1 -31.2 5.5zM521.7 180l27.7-5 -.7-.1 -27.7 4.9zM525.1 188.7l.6-.2 -34.8-6.1 -.7 .1zM490.7 182.6l.7-.2 -30.7-5.4 -.6 .1zM440.2 188.3l35.2-5.9 -.6-.1 -35.2 5.9zM475 182.5l31.1-5.2 -.7-.1 -31.1 5.2zM540.3 185.6l.7-.1 -34.8-5.8 -.6 .1zM506.1 179.9l.6-.1 -30.7-5.1 -.6 .1zM425.3 185.2l35.1-5.5 -.6-.2 -35.1 5.6zM459.9 179.7l31.1-4.9 -.6-.1 -31.1 4.9zM593.6 188.9l.5-.1 -39.4-6.2 -.6 .1zM554.7 182.8l.6-.1 -34.7-5.5 -.6 .1zM372.6 188.1l39.4-5.9 -.6-.1 -39.4 5.8zM411.4 182.3l34.8-5.2 -.6-.1 -34.8 5.1zM606.7 185.9l.5-.1 -39-5.9 -.6 .1zM568.1 180.1l.6-.1 -34.5-5.1 -.5 .1zM360 184.9l38.9-5.5 -.5-.1 -38.9 5.5zM398.4 179.5l34.5-4.9 -.6-.1 -34.5 4.9zM662.5 189.2l.4-.1 -44-6.3 -.5 .2zM619 183l.5-.1 -38.7-5.5 -.5 .1zM305.4 187.8l43.4-5.9 -.5-.1 -43.4 5.8zM348.2 182l38.4-5.1 -.5-.2 -38.4 5.2zM673.4 186.2l.5-.2 -43.5-5.8 -.4 .1zM630.6 180.4l.4-.2 -38.2-5.1 -.5 .1zM295 184.7l42.8-5.5 -.5-.1 -42.7 5.5zM337.2 179.3l37.9-4.9 -.5-.1 -37.9 4.9zM731.8 189.5l.4-.1 -48.8-6.3 -.4 .1zM683.7 183.3l.4-.1 -42.8-5.5 -.4 .1zM238.5 187.5l47.5-5.8 -.4-.1 -47.4 5.8zM285.3 181.8l42.1-5.2 -.5-.1 -42 5.2zM740.5 186.4l.4-.1 -47.8-5.9 -.4 .1zM693.3 180.6l.4-.1 -42.1-5.2 -.4 .1zM230.4 184.4l46.5-5.4 -.4-.1 -46.4 5.4zM276.3 179.1l41.3-4.9 -.4-.1 -41.3 4.9zM801.5 189.8l.3-.2 -53.5-6.3 -.3 .1zM748.7 183.5l.3-.1 -46.9-5.5 -.3 .1zM172.1 187.2l51.4-5.7 -.3-.1 -51.4 5.7zM222.8 181.6l45.6-5.2 -.4-.1 -45.5 5.1zM808 186.7l.3-.1 -52.3-6 -.3 .1zM756.4 180.8l.3-.1 -46-5.2 -.4 .1zM166.2 184.2l50.2-5.4 -.3-.1 -50.2 5.4zM215.7 178.8l44.6-4.8 -.3-.1 -44.6 4.8zM814.1 183.8l.3-.1 -51.1-5.6 -.3 .1zM106 187l55.4-5.8 -.2-.1 -55.4 5.8zM160.6 181.3l49.1-5.1 -.3-.1 -49 5.1zM875.9 186.9l.1-.1 -56.7-5.9 -.2 .1zM819.8 181l.3-.1 -50-5.2 -.3 .1zM102.3 183.9l53.9-5.3 -.2-.2 -53.9 5.4zM879.9 184l.1-.1 -55.3-5.6 -.2 .1zM40.3 186.7l59.3-5.7 -.2-.1 -59.2 5.7zM98.8 181.1l52.5-5.1 -.2-.1 -52.5 5.1z"/>
<path fill="#576074" fill-opacity="0.32" d="M27.2 197.1l1.5-.2 -2.6-7.2 -1.4 .1zM955.2 201.2l3.4-7.5 -1.5-.2 -3.5 7.6zM66.5 201.3l1.4-.2 -5.5-7.8 -1.4 .1zM61.1 193.5l1.4-.1 -4.8-6.8 -1.3 .1zM919 197.2l5.8-7 -1.4-.2 -5.8 7zM924.7 190.3l5-6.2 -1.3-.1 -5.1 6.1zM100.3 197.4l1.3-.1 -7.7-7.4 -1.3 .2zM92.7 190.2l1.3-.2 -6.7-6.3 -1.3 .1zM876.7 200.9l8.9-7.5 -1.4-.2 -9 7.5zM885.5 193.5l7.7-6.6 -1.3-.1 -7.8 6.5zM142.6 201.6l1.4-.1 -11.2-7.9 -1.3 .1zM131.7 193.8l1.3-.1 -9.7-6.9 -1.2 .2zM843.6 196.9l10.8-7 -1.3-.1 -10.9 6.9zM854.2 190l9.5-6.1 -1.2-.1 -9.5 6zM173.8 197.7l1.2-.1 -13-7.4 -1.2 .2zM161 190.5l1.2-.2 -11.3-6.4 -1.1 .1zM798.7 200.5l14.3-7.4 -1.2-.2 -14.4 7.5zM812.8 193.2l12.5-6.5 -1.2-.2 -12.5 6.5zM219.3 202l1.2-.2 -16.8-7.9 -1.2 .1zM202.7 194.1l1.2-.1 -14.5-6.9 -1.2 .1zM768.6 196.6l15.8-7 -1.1-.1 -16 6.9zM247.7 198.1l1.2-.2 -18.3-7.4 -1.1 .1zM229.7 190.7l1.1-.1 -15.9-6.4 -1 .1zM721.2 200.2l19.7-7.4 -1.1-.2 -19.8 7.4zM740.6 192.9l17.2-6.5 -1.1-.1 -17.2 6.4zM296.4 202.4l1.2-.2 -22.6-8 -1.1 .1zM274.2 194.4l1.1-.1 -19.5-6.9 -1.1 .1zM670.3 204.1l24.1-8 -1.1-.1 -24.1 7.9zM694 196.2l20.9-6.9 -1.1-.1 -20.9 6.9zM322.2 198.4l1-.1 -23.6-7.5 -1.1 .1zM298.9 191l1-.1 -20.6-6.5 -.9 .1zM644.2 199.9l25-7.4 -1-.2 -25.1 7.4zM668.9 192.6l21.8-6.5 -1-.1 -21.9 6.4zM374.1 202.7l1-.2 -28.4-8 -1 .1zM346.1 194.7l1-.1 -24.6-7 -.9 .2zM590.7 203.7l29.7-7.9 -1-.1 -29.7 7.8zM620 195.9l25.8-6.8 -1-.2 -25.8 6.9zM397.1 198.7l.9-.1 -29.1-7.5 -.9 .1zM368.4 191.3l.9-.1 -25.2-6.5 -.9 .1zM567.7 199.5l30.2-7.3 -.9-.2 -30.3 7.3zM597.5 192.3l26.4-6.4 -.9-.2 -26.4 6.4zM452.3 203.1l.9-.2 -34.3-8.1 -.9 .1zM418.5 195.1l.8-.2 -29.6-7 -.9 .1zM511.5 203.4l35.4-7.9 -.9-.2 -35.3 7.9zM546.4 195.6l30.6-6.8 -.8-.2 -30.7 6.8zM472.5 199.1l.8-.2 -34.6-7.5 -.8 .1zM438.4 191.6l.8-.1 -30.1-6.6 -.8 .1zM491.7 199.2l35.4-7.3 -.8-.2 -35.5 7.3zM526.6 192l30.9-6.4 -.8-.1 -30.9 6.3zM531 203.4l.8-.1 -40.3-8.2 -.8 .2zM491.3 195.4l.7-.2 -34.8-7 -.7 .1zM433 203l40.8-7.8 -.7-.2 -40.9 7.8zM473.2 195.3l35.5-6.8 -.8-.1 -35.4 6.7zM548.4 199.4l.7-.1 -40.2-7.6 -.7 .1zM508.7 191.9l.8-.1 -34.9-6.6 -.7 .1zM416.1 198.8l40.6-7.2 -.7-.2 -40.6 7.3zM456.1 191.7l35.4-6.3 -.7-.2 -35.4 6.3zM610.3 203.8l.6-.2 -46.4-8.2 -.6 .2zM564.5 195.7l.7-.2 -40-7.1 -.7 .2zM354.9 202.6l46.3-7.7 -.6-.2 -46.3 7.7zM400.6 195l40.2-6.8 -.7-.1 -40.2 6.7zM624.8 199.8l.6-.2 -45.9-7.7 -.6 .2zM579.5 192.2l.7-.1 -39.8-6.7 -.6 .1zM341.1 198.5l45.6-7.2 -.6-.2 -45.6 7.2zM386.1 191.4l39.8-6.3 -.6-.1 -39.8 6.2zM690.1 204.2l.5-.2 -52.5-8.3 -.6 .2zM638.2 196l.6-.2 -45.3-7.1 -.6 .1zM277.3 202.3l51.7-7.7 -.5-.2 -51.6 7.7zM328.3 194.7l44.9-6.7 -.5-.2 -44.9 6.7zM701.6 200.1l.5-.2 -51.5-7.7 -.5 .2zM650.8 192.5l.5-.2 -44.7-6.6 -.5 .1zM266.5 198.2l50.6-7.2 -.5-.1 -50.5 7.1zM316.4 191.1l44.2-6.2 -.5-.2 -44.2 6.3zM712.4 196.3l.4-.1 -50.6-7.2 -.4 .1zM200.3 201.9l57-7.7 -.4-.1 -56.9 7.6zM256.5 194.4l49.5-6.7 -.4-.1 -49.5 6.6zM779 200.5l.4-.2 -57.4-7.8 -.4 .2zM722.4 192.8l.4-.2 -49.6-6.7 -.5 .2zM192.4 197.8l55.6-7.1 -.4-.1 -55.5 7.1zM247.2 190.8l48.5-6.2 -.4-.1 -48.5 6.2zM787 196.6l.4-.1 -56-7.2 -.4 .1zM123.8 201.6l62.2-7.7 -.3-.1 -62.2 7.6zM185.1 194l54.2-6.6 -.4-.1 -54.1 6.6zM856.9 200.8l.2-.2 -63.1-7.8 -.4 .2zM794.5 193.1l.3-.2 -54.7-6.7 -.3 .1zM118.8 197.5l60.4-7.1 -.3-.1 -60.3 7zM178.4 190.5l52.7-6.1 -.3-.2 -52.7 6.2zM862.2 197l.2-.2 -61.5-7.3 -.3 .2zM47.7 201.2l67.4-7.6 -.1-.1 -67.4 7.5zM114.2 193.7l58.7-6.5 -.3-.2 -58.6 6.6zM935.3 201.2l.1-.2 -69.1-7.9 -.2 .2zM867 193.4l.2-.2 -59.8-6.7 -.2 .1zM45.7 197.2l65.2-7.1 -.2-.1 -65.1 7zM110 190.2l56.9-6.1 -.2-.1 -56.9 6.1zM937.7 197.3l.1-.2 -66.9-7.3 -.2 .2zM871.6 190.1l.2-.2 -58.3-6.3 -.2 .1zM-27.8 200.9l72.5-7.6 -.1-.1 -72.4 7.5zM43.7 193.4l63.1-6.5 -.1-.1 -63 6.5zM1014.2 201.5l0-.2 -75.1-7.9 -.1 .2zM940 193.7l.1-.2 -65-6.8 -.1 .2zM-27 196.9l69.9-7 -.1-.2 -69.8 7zM41.9 190l61.2-6.1 -.2-.2 -61 6.1zM1013.8 197.6l0-.1 -72.6-7.4 -.1 .1zM942.1 190.3l.1-.1 -63.1-6.4 -.1 .1zM-26.3 193.1l67.5-6.5 -.1-.1 -67.4 6.5z"/>
<path fill="#576074" fill-opacity="0.47" d="M33.4 215.3l1.7-.2 -3.5-10 -1.6 .2zM30 205.5l1.6-.2 -2.9-8.5 -1.5 .2zM946.8 220.1l4.6-10.3 -1.7-.2 -4.7 10.3zM951.4 209.9l3.9-8.8 -1.6-.2 -4 8.8zM80.2 221.2l1.7-.3 -7.7-10.9 -1.6 .2zM72.7 210.4l1.6-.2 -6.4-9.2 -1.5 .2zM904.9 214.6l7.7-9.5 -1.5-.2 -7.9 9.5zM912.5 205.2l6.6-8.1 -1.4-.2 -6.8 8.1zM119.4 215.8l1.6-.2 -10.6-10.1 -1.5 .2zM109 205.8l1.5-.1 -9-8.6 -1.4 .2zM854.6 219.6l12.1-10.2 -1.6-.2 -12.2 10.2zM866.5 209.5l10.4-8.7 -1.5-.2 -10.4 8.7zM170.5 221.7l1.6-.3 -15.5-10.9 -1.4 .2zM155.4 210.8l1.5-.2 -13.1-9.3 -1.4 .2zM816.9 214.1l14.5-9.4 -1.4-.2 -14.7 9.4zM831.2 204.8l12.5-8 -1.3-.2 -12.6 8.1zM206 216.2l1.5-.2 -17.8-10.1 -1.4 .2zM188.6 206.2l1.3-.2 -15.1-8.5 -1.2 .1zM763 219.2l19.6-10.2 -1.4-.2 -19.7 10.1zM782.3 209.1l16.6-8.7 -1.3-.2 -16.7 8.7zM261.6 222.2l1.4-.3 -23.3-11 -1.4 .2zM238.6 211.2l1.4-.2 -19.7-9.3 -1.3 .2zM729.4 213.7l21.4-9.4 -1.3-.1 -21.4 9.3zM750.5 204.5l18.3-8 -1.2-.2 -18.4 8zM293.4 216.7l1.2-.2 -25-10.2 -1.3 .2zM268.7 206.6l1.2-.2 -21.3-8.6 -1.2 .2zM672.2 218.7l26.8-10.1 -1.2-.2 -26.9 10zM698.6 208.7l22.9-8.6 -1.2-.2 -22.9 8.6zM353.4 222.7l1.3-.3 -31.5-11.1 -1.1 .2zM322.5 211.6l1.2-.2 -26.5-9.3 -1.1 .1zM642.6 213.3l28.1-9.3 -1.2-.2 -28.1 9.2zM381.3 217.1l1.2-.2 -32.5-10.2 -1.1 .2zM349.3 207l1.1-.2 -27.6-8.7 -1 .2zM582 218.2l34-10 -1.1-.2 -34 10zM615.6 208.3l29-8.6 -1.1-.1 -29 8.5zM445.9 223.2l1.1-.3 -39.6-11.2 -1 .2zM406.9 212.1l1.1-.2 -33.3-9.5 -1 .2zM516.1 223.6l40.9-10.9 -1-.2 -40.9 10.8zM556.5 212.8l34.6-9.2 -1-.2 -34.7 9.2zM470 217.6l.9-.2 -40-10.3 -.9 .2zM430.5 207.4l1-.2 -33.9-8.7 -1 .1zM492.5 217.7l41.1-9.9 -.9-.2 -41.1 9.9zM533.1 207.9l35.1-8.5 -1-.2 -35.1 8.5zM539.2 223.7l.9-.3 -47.8-11.3 -.9 .2zM492 212.5l.9-.2 -40.2-9.5 -.9 .2zM423 223.1l48.6-10.9 -.9-.2 -48.5 10.8zM470.9 212.4l41.2-9.2 -.9-.2 -41.1 9.2zM559.3 218.1l.8-.2 -47.6-10.4 -.9 .2zM512.3 207.8l.8-.2 -40.3-8.8 -.9 .2zM403.7 217.3l48.1-9.9 -.8-.2 -48.1 9.8zM451.2 207.5l41-8.4 -.8-.2 -41 8.4zM577.7 212.9l.7-.2 -47.2-9.6 -.8 .2zM330.7 222.6l56.1-10.8 -.7-.2 -56.1 10.7zM386 212l47.6-9.1 -.7-.2 -47.6 9.1zM649.3 218.6l.6-.3 -55.3-10.4 -.7 .2zM594.6 208.2l.7-.2 -46.8-8.9 -.8 .2zM315.6 216.8l55-9.8 -.7-.2 -54.9 9.8zM369.8 207.1l47-8.4 -.7-.2 -46.9 8.4zM664 213.4l.6-.2 -54.4-9.7 -.7 .2zM239.1 222l63.5-10.6 -.6-.2 -63.4 10.6zM301.7 211.5l53.9-9 -.6-.2 -53.8 9zM740 219l.4-.2 -63.1-10.5 -.6 .2zM677.6 208.6l.5-.2 -53.5-8.9 -.6 .1zM228.1 216.3l61.8-9.7 -.5-.2 -61.8 9.7zM289 206.7l52.8-8.3 -.5-.2 -52.8 8.3zM750.9 213.8l.5-.2 -61.7-9.7 -.5 .2zM148.2 221.5l70.8-10.5 -.4-.2 -70.7 10.5zM218 211.1l60.2-9 -.5-.1 -60.1 8.9zM831.3 219.5l.4-.2 -71.2-10.6 -.4 .2zM761.1 209l.4-.2 -60.2-9 -.5 .2zM141.3 215.9l68.4-9.7 -.3-.2 -68.4 9.7zM208.8 206.3l58.5-8.3 -.4-.1 -58.5 8.2zM838.5 214.2l.3-.2 -69-9.8 -.3 .2zM770.4 204.6l.4-.2 -58.8-8.4 -.4 .2zM58 221.1l78-10.5 -.3-.2 -77.9 10.4zM134.9 210.7l66.3-8.9 -.3-.2 -66.2 8.9zM923.4 220l.2-.2 -79.2-10.7 -.3 .2zM845.2 209.4l.2-.2 -66.9-9 -.4 .1zM55.1 215.4l75-9.6 -.2-.2 -74.9 9.6zM129.1 205.9l64.2-8.2 -.3-.1 -64.1 8.2zM926.8 214.7l.1-.2 -76.4-9.9 -.3 .2zM851.3 204.9l.2-.1 -65-8.4 -.3 .1zM-31.5 220.6l85.1-10.5 -.1-.2 -85 10.4zM52.4 210.3l72.4-8.9 -.3-.1 -72.2 8.8zM1016.2 220.5l0-.3 -87.4-10.7 -.1 .2zM929.8 209.8l.2-.2 -73.9-9.1 -.2 .2zM-30.5 215l81.6-9.6 -.1-.2 -81.4 9.6zM50 205.6l69.8-8.2 -.2-.2 -69.7 8.2zM1015.7 215.1l-.1-.2 -83.9-9.9 -.2 .2zM932.7 205.3l.1-.2 -71.4-8.4 -.2 .1zM-29.5 209.9l78.3-8.8 -.1-.2 -78.2 8.8zM1015.1 210.2l0-.2 -80.8-9.1 -.1 .1zM-28.6 205.2l75.3-8.1 -.1-.2 -75.2 8.1zM1014.7 205.7l-.1-.2 -77.8-8.5 -.1 .2z"/>
<path fill="#576074" fill-opacity="0.63" d="M42.2 241.4l2.1-.4 -5.1-14.4 -1.9 .3zM37.3 227.1l1.9-.3 -4.1-11.9 -1.8 .3zM934.8 247.1l6.7-15 -2-.3 -6.9 14.9zM941.4 232.3l5.5-12.3 -1.8-.3 -5.7 12.3zM100.1 250.1l2.1-.4 -11.3-16 -1.9 .2zM89.1 234.2l1.9-.3 -9.2-13.1 -1.7 .2zM885.1 239l11-13.5 -1.9-.3 -11.1 13.5zM895.9 225.7l9.1-11.3 -1.7-.2 -9.2 11.2zM146.8 242l1.8-.3 -15.3-14.5 -1.8 .2zM131.7 227.6l1.8-.2 -12.7-12 -1.6 .2zM823 246.4l17.6-14.9 -1.9-.3 -17.6 14.8zM840.3 231.7l14.5-12.2 -1.7-.3 -14.6 12.2zM211.3 250.8l1.8-.3 -22.9-16.2 -1.7 .2zM188.8 234.8l1.7-.3 -18.6-13.2 -1.6 .2zM779.4 238.3l20.7-13.3 -1.6-.3 -20.9 13.3zM799.8 225.1l17.3-11.1 -1.5-.2 -17.4 11.1zM252.3 242.7l1.7-.3 -25.9-14.7 -1.5 .3zM226.9 228.2l1.6-.3 -21.3-12.1 -1.4 .3zM712.2 245.6l28.2-14.7 -1.5-.3 -28.3 14.7zM740.1 231.1l23.2-12.1 -1.5-.3 -23.3 12.1zM323.4 251.6l1.6-.4 -34.6-16.3 -1.5 .3zM289.4 235.4l1.4-.3 -28.1-13.4 -1.4 .3zM674.6 237.7l30.3-13.3 -1.4-.2 -30.4 13.2zM704.5 224.6l25.3-11.1 -1.4-.2 -25.3 11zM358.9 243.4l1.4-.3 -36.5-14.8 -1.4 .2zM322.9 228.7l1.3-.2 -30-12.2 -1.2 .2zM602.5 244.9l38.7-14.5 -1.4-.3 -38.7 14.5zM640.6 230.6l32-12.1 -1.3-.2 -32 12zM390.8 236l1.2-.3 -37.8-13.4 -1.3 .2zM570.7 237.1l39.8-13.2 -1.3-.2 -39.8 13.1zM609.9 224.1l33.2-11 -1.2-.2 -33.2 10.9zM466.4 244.1l1.2-.4 -47.4-14.9 -1.2 .3zM419.7 229.3l1.1-.3 -38.9-12.2 -1.1 .2zM493.7 244.2l49-14.4 -1.1-.3 -49 14.4zM542.1 230l40.4-12 -1.1-.2 -40.5 11.9zM493.1 236.6l1-.3 -47.7-13.5 -1.1 .2zM467.7 236.5l49.1-13.1 -1.1-.3 -49 13zM574.9 244.8l.9-.4 -58.4-15 -1 .2zM517.2 229.8l1-.2 -47.9-12.4 -1 .2zM386 243.6l59.1-14.4 -1-.2 -59 14.2zM444.3 229.4l48.9-11.8 -1-.3 -48.9 11.8zM596.3 237.2l.8-.3 -57.8-13.6 -.9 .2zM295.6 251.4l71-15.8 -.8-.3 -70.9 15.7zM365.6 235.8l58.2-12.9 -.8-.3 -58.2 12.9zM684.4 245.5l.7-.4 -69.6-15.2 -.8 .3zM615.6 230.4l.8-.3 -57.1-12.4 -.8 .2zM279.2 242.9l69-14.2 -.7-.3 -69 14.1zM347.3 228.9l57.2-11.8 -.8-.2 -57.1 11.7zM700.4 237.9l.6-.3 -68-13.8 -.7 .2zM633.2 224.2l.7-.2 -56.2-11.4 -.8 .2zM183.7 250.7l81.8-15.7 -.6-.3 -81.6 15.6zM264.5 235.2l67.1-12.8 -.7-.3 -67 12.8zM794.9 246.2l.5-.4 -81.1-15.3 -.6 .3zM714.8 231l.6-.3 -66.4-12.5 -.6 .2zM173.4 242.2l78.8-14.1 -.5-.3 -78.7 14.1zM251.1 228.3l65.3-11.7 -.6-.2 -65.2 11.6zM805.4 238.5l.4-.3 -78.4-13.9 -.5 .3zM728 224.7l.5-.2 -64.8-11.5 -.6 .2zM72.9 249.9l92.5-15.5 -.4-.3 -92.3 15.4zM164.1 234.6l76-12.7 -.5-.3 -75.8 12.7zM906.4 246.9l.3-.4 -92.7-15.4 -.4 .3zM814.9 231.6l.3-.3 -75.8-12.7 -.5 .3zM68.5 241.5l88.4-13.9 -.3-.3 -88.2 13.9zM155.8 227.8l73.3-11.6 -.5-.2 -73.2 11.5zM911.3 239.1l.2-.3 -88.9-14 -.3 .3zM823.5 225.3l.3-.3 -73.4-11.6 -.4 .2zM-36.9 249.2l102.9-15.4 -.1-.3 -102.8 15.3zM64.7 234l84.6-12.6 -.3-.3 -84.5 12.6zM1019.1 247.6l-.1-.3 -104.5-15.6 -.1 .2zM915.7 232.1l.2-.2 -85.4-12.8 -.3 .2zM-35.4 240.9l97.9-13.9 -.2-.2 -97.6 13.7zM61.2 227.2l81.2-11.5 -.3-.2 -81.1 11.4zM1018.2 239.8l0-.3 -99.6-14.2 -.2 .3zM919.8 225.8l.1-.3 -82.2-11.6 -.3 .2zM-33.9 233.4l93.1-12.5 -.1-.3 -93 12.5zM1017.5 232.7l0-.3 -95.2-12.8 -.2 .2zM-32.7 226.7l89-11.4 -.1-.3 -88.8 11.4zM1016.8 226.3l0-.2 -91.1-11.8 -.2 .2z"/>
<path fill="#576074" fill-opacity="0.79" d="M55.8 281.7l2.6-.6 -8-22.7 -2.4 .4zM48.1 259.1l2.4-.4 -6.3-17.9 -2.1 .3zM916.4 288.6l10.4-23.5 -2.4-.5 -10.8 23.5zM926.7 265.4l8.3-18.6 -2.3-.3 -8.5 18.4zM114 270.1l2.3-.4 -14.3-20.2 -2 .3zM855.2 275.8l16.8-20.8 -2.1-.4 -17.1 20.7zM871.8 255.3l13.5-16.5 -2-.4 -13.7 16.5zM189.2 282.7l2.3-.5 -24.3-23 -2.1 .4zM165.4 259.9l2.1-.4 -19.1-18 -1.9 .3zM774.4 287.5l27.6-23.3 -2.1-.5 -27.8 23.2zM801.6 264.5l21.7-18.4 -1.9-.3 -21.9 18.2zM239.5 271.1l2-.5 -28.8-20.4 -1.8 .4zM723 274.8l31.7-20.6 -1.8-.4 -32 20.5zM754.3 254.5l25.4-16.4 -1.8-.3 -25.5 16.3zM324.2 283.8l1.9-.5 -41-23.2 -1.7 .4zM283.9 260.8l1.8-.4 -32.1-18.3 -1.7 .4zM634.2 286.4l44.2-23.1 -1.8-.5 -44.3 23zM677.8 263.6l34.9-18.2 -1.7-.3 -35 18zM366.4 272l1.6-.4 -43.5-20.6 -1.6 .3zM592.2 273.8l46.4-20.3 -1.6-.4 -46.5 20.2zM638 253.7l37.1-16.2 -1.6-.3 -37.1 16.1zM460.8 284.9l1.5-.5 -58-23.5 -1.5 .4zM403.6 261.6l1.5-.4 -45.4-18.4 -1.4 .3zM495.6 285.2l60.5-22.8 -1.4-.4 -60.6 22.7zM555.3 262.7l47.8-18 -1.4-.3 -47.8 17.9zM494.6 273l1.4-.5 -58.7-20.8 -1.4 .4zM436.7 252.4l1.3-.4 -46.6-16.5 -1.3 .3zM462.8 272.8l60.7-20.1 -1.3-.4 -60.7 20zM522.7 252.9l48.6-16 -1.2-.4 -48.7 16.1zM599 286.1l1.1-.6 -75.4-23.7 -1.2 .4zM524.5 262.5l1.2-.4 -58.9-18.6 -1.2 .3zM358.6 284.1l76.5-22.5 -1.2-.5 -76.3 22.5zM434.1 261.8l60.4-17.8 -1.1-.3 -60.5 17.7zM624.3 274l1-.5 -74.1-21 -1.1 .4zM551.1 253.1l1.1-.3 -58.8-16.7 -1.1 .3zM334.9 271.8l74.7-19.9 -1-.4 -74.6 19.8zM408.6 252.2l59.9-16 -1-.3 -59.9 15.9zM738.8 287.2l.7-.5 -93.1-24.1 -.9 .5zM646.7 263.4l.9-.5 -72.7-18.7 -1 .3zM223.2 283l92.1-22.3 -.8-.4 -91.9 22.2zM314.1 261l72.8-17.7 -.9-.3 -72.7 17.6zM755.5 275l.6-.5 -89.9-21.2 -.8 .3zM666.6 253.9l.8-.4 -71.2-16.8 -.9 .3zM208.4 270.8l88.4-19.6 -.7-.4 -88.3 19.6zM880.3 288.4l.3-.6 -111.3-24.3 -.6 .4zM770.2 264.3l.6-.5 -86.9-18.9 -.7 .3zM89.4 281.9l107.3-22 -.5-.5 -107.1 22zM195.3 260.1l85-17.5 -.6-.3 -84.9 17.4zM888.1 276l.3-.5 -106-21.5 -.6 .4zM783.2 254.7l.5-.4 -83.8-17 -.7 .3zM-45.5 294.5l130.4-24.9 -.3-.5 -130 24.8zM83.2 269.9l101.9-19.5 -.5-.4 -101.7 19.4zM1023.4 289.5l0-.5 -129.9-24.6 -.3 .4zM894.9 265.1l.3-.4 -101.2-19.1 -.4 .3zM-42.9 280.9l122.2-21.9 -.2-.4 -121.9 21.7zM77.7 259.3l97-17.3 -.4-.4 -96.8 17.3zM1022.1 277l0-.5 -122.4-21.7 -.3 .4zM901 255.5l.3-.4 -96.8-17.1 -.4 .3zM-40.7 268.9l115.1-19.2 -.2-.4 -114.8 19.2zM1021 266l-.1-.4 -115.8-19.3 -.2 .3zM-38.7 258.5l108.7-17.2 -.2-.3 -108.4 17.1zM1020 256.3l-.1-.4 -109.8-17.3 -.2 .3z"/>
<path fill="#586175" d="M943.1 872.6l21.3-276.7 -7.5-3.9 -25.1 271.3zM964.2 598.5l10.2-132.8 -5.6-2.1 -12.2 131zM192.5 686.8l7.1-5.2 -62.8-177.9 -5.3 2.5zM132.2 508l5.3-2.5 -33.9-96 -4.2 1.5zM99.8 412.1l4.2-1.5 -21.1-60 -3.6 .9zM79.6 352.3l3.5-1 -14.5-41.1 -3 .7zM65.8 311.4l3-.7 -10.5-29.9 -2.7 .5zM733.1 700.6l81.1-182.3 -5.4-2.8 -82.6 179.4zM813.3 520.2l44-98.8 -4.4-1.7 -44.9 97.7zM856.8 422.5l27.6-62 -3.7-1.1 -28.3 61.4zM884.1 361.2l18.9-42.5 -3.2-.8 -19.4 42.2zM902.7 319.2l13.8-30.9 -2.7-.6 -14.2 30.8zM520.2 858.8l5.4-8.5 -191.2-271.2 -4.8 3.5zM331.4 585.2l4.8-3.5 -91.1-129.3 -4 2zM242.1 455.8l4-2 -53.3-75.6 -3.4 1.2zM190 380.3l3.4-1.2 -35-49.6 -2.9 .8zM155.9 330.9l3-.8 -24.8-35.1 -2.6 .6zM131.8 296l2.6-.6 -18.4-26.1 -2.3 .5zM384.8 854.4l216.4-266.1 -4.6-3.8 -216.4 261.1zM599.1 590.8l105.1-129.3 -4-2.1 -105.7 127.6zM703 462.9l62.2-76.4 -3.5-1.3 -62.7 75.6zM764.4 387.4l41.1-50.5 -3.1-.9 -41.4 50.1zM805 337.5l29.1-35.8 -2.7-.7 -29.5 35.6zM833.7 302.2l21.8-26.8 -2.4-.5 -22.1 26.6zM621.9 697.7l3.4-5.3 -194.1-183.5 -3.6 2.5zM429.6 513.3l3.6-2.5 -103.8-98.2 -3.2 1.5zM327.3 415.2l3.2-1.5 -64.6-61.1 -2.8 1zM263.8 354.3l2.9-1 -44.1-41.7 -2.6 .7zM220.6 312.8l2.5-.7 -32-30.3 -2.3 .6zM299.7 689.5l208.6-176.6 -3.3-2.7 -208.1 173.9zM506.1 514.7l114.1-96.6 -3.2-1.6 -114.2 95.5zM618.9 419.2l71.9-60.9 -2.9-1 -72.2 60.3zM689.9 359.1l49.5-41.9 -2.6-.8 -49.7 41.6zM738.8 317.7l36.1-30.6 -2.3-.6 -36.4 30.4zM1085 877.2l-.9-9 -397.4-281.8 -2.3 3.6zM688.2 592.7l2.3-3.7 -187-132.6 -2.7 2zM502.8 459.8l2.7-1.9 -108.8-77.2 -2.5 1.2zM395.4 382.9l2.6-1.3 -71.1-50.4 -2.4 .8zM325.4 332.6l2.4-.8 -50.2-35.6 -2.2 .7zM276.1 297.3l2.1-.6 -37.2-26.4 -2 .4zM-148.1 837.1l396.9-256.2 -1.9-3.6 -393.4 251.4zM244.9 583.4l195.1-126 -2.5-2 -194.5 124.3zM437.9 458.8l116-74.9 -2.5-1.3 -116 74.2zM552.5 384.8l77-49.7 -2.4-.9 -77.1 49.3zM628.5 335.7l54.7-35.3 -2.2-.7 -54.9 35.1zM682.6 300.8l40.9-26.4 -2-.5 -41.2 26.3zM1067.4 709.1l-.6-5.5 -333.7-189.4 -1.7 2.6zM734.8 518.8l1.7-2.7 -177-100.4 -2.1 1.6zM559.4 418.4l2.1-1.5 -109.6-62.2 -2.2 1zM451 356.4l2.2-1 -74.6-42.3 -2.1 .7zM377.4 314.3l2.1-.7 -54.1-30.7 -1.9 .5zM-118.2 678.9l328.4-171.3 -1.4-2.7 -326 168.7zM206.7 509.4l181-94.4 -1.9-1.6 -180.4 93.3zM385.6 416l114.7-59.8 -2.1-1 -114.5 59.2zM498.9 356.9l79.1-41.2 -2-.8 -79.2 41zM577 316.2l57.9-30.2 -1.9-.6 -58 30zM1056 600.4l-.4-3.7 -288-136.2 -1.3 2zM769.4 464l1.3-2 -166.4-78.7 -1.7 1.2zM604.5 385.4l1.7-1.2 -108.4-51.3 -1.8 .9zM497.3 334.4l1.8-.9 -76.2-36 -1.8 .6zM422.1 298.6l1.7-.6 -56.5-26.8 -1.7 .5zM-98.7 576.2l280.4-122.8 -1.1-2 -278.7 121.2zM178.6 454.8l167.8-73.4 -1.6-1.3 -167.2 72.7zM344.4 382.2l111.6-48.8 -1.7-.9 -111.5 48.4zM454.6 334l79.7-34.9 -1.7-.6 -79.7 34.6zM533.3 299.5l59.7-26.1 -1.7-.5 -59.7 26zM1048.1 524.4l-.3-2.7 -253.5-102.8 -1 1.6zM796.1 421.7l1-1.6 -156.3-63.4 -1.4 1.1zM641.3 358.5l1.4-1 -106-43 -1.6 .8zM536.4 315.8l1.6-.7 -76.7-31.1 -1.5 .6zM-85.1 504.1l244.9-92.3 -.8-1.5 -243.6 91.3zM157 412.9l155.8-58.8 -1.3-1 -155.3 58.2zM310.9 354.8l107.9-40.6 -1.4-.8 -107.7 40.4zM417.5 314.7l79.1-29.9 -1.5-.5 -79.1 29.6zM1042.2 468.2l-.2-2.1 -226.5-80.3 -.8 1.3zM817.3 388.1l.8-1.3 -146.9-52.1 -1.2 .8zM671.8 336.2l1.2-.9 -103-36.5 -1.3 .6zM570 299.9l1.3-.7 -76.3-27 -1.3 .5zM-75.1 450.8l217.5-71.9 -.6-1.3 -216.5 71.3zM139.8 379.7l145.3-48.1 -1.1-.8 -144.8 47.6zM283.3 332.2l103.9-34.4 -1.3-.6 -103.7 34.1zM385.9 298.3l78-25.9 -1.3-.4 -78 25.6zM1037.6 425l-.1-1.6 -204.7-64.5 -.6 1zM834.6 360.7l.7-1.1 -138.4-43.6 -1 .8zM697.6 317.3l1-.7 -99.8-31.5 -1.1 .6zM-67.3 409.8l195.6-57.7 -.5-1 -194.8 57.2zM126 352.8l135.8-40.1 -.9-.7 -135.5 39.7zM260.1 313.2l99.8-29.5 -1.1-.5 -99.6 29.3zM1034.1 390.7l-.2-1.3 -186.7-52.9 -.5 .8zM848.9 338l.6-.9 -130.6-37 -.8 .6zM719.7 301.2l.9-.7 -96.5-27.3 -1 .5zM-61.1 377.2l177.7-47.3 -.4-.9 -177.1 47zM114.4 330.5l127.5-33.9 -.8-.7 -127.1 33.7zM240.3 297l95.9-25.5 -1-.5 -95.7 25.4zM1031.1 362.9l-.1-1.1 -171.6-44.2 -.5 .7zM861 318.9l.5-.8 -123.5-31.8 -.8 .5zM-56.1 350.7l162.9-39.5 -.4-.7 -162.3 39.2zM104.8 311.7l120-29.1 -.7-.5 -119.7 28.9zM1028.7 339.8l-.1-.9 -158.8-37.5 -.5 .6zM871.3 302.5l.5-.6 -117.2-27.7 -.6 .4zM-52 328.8l150.4-33.5 -.3-.6 -149.9 33.2zM96.5 295.7l113.3-25.2 -.6-.5 -113 25.1zM1026.7 320.4l-.1-.7 -147.9-32.3 -.3 .5zM-48.5 310.3l139.7-28.7 -.3-.6 -139.2 28.6zM1024.9 303.8l0-.6 -138.3-28 -.3 .5z"/>
<polygon points="655054.8,7210.2 211603.4,2385.4 486.6,99.3 -10662.2,214.9 -627201.6,7210.2" fill="url(#fog)"/>
<polygon points="473.1,398.4 353.1,322.4 351.3,309.3 473.0,382.3" fill="#cbd1e0" stroke="#cbd1e0" stroke-width=".7" stroke-linejoin="round"/>
<polygon points="473.1,398.4 601.1,324.9 602.9,311.6 473.0,382.3" fill="#c0c6d6" stroke="#c0c6d6" stroke-width=".7" stroke-linejoin="round"/>
<polygon points="473.0,382.3 602.9,311.6 478.5,267.3 351.3,309.3" fill="#c3c9d9" stroke="#c3c9d9" stroke-width=".7" stroke-linejoin="round"/>
<path fill="#1d2334" d="M512.4 280.6L504.3 283.4L497.1 285.9L490.6 288.4L484.7 290.0L478.7 291.4L473.1 292.5L467.6 293.5L464.4 294.3L462.5 293.8L461.2 292.9L459.9 291.4L458.2 288.9L456.7 286.4L454.8 282.5L453.0 278.7L451.7 283.0L450.5 286.7L449.8 290.3L448.2 293.2L446.0 296.0L443.6 298.4L441.1 300.8L439.9 302.3L437.6 302.6L434.9 302.2L431.1 301.5L425.2 300.2L419.5 298.7L410.8 296.3L402.0 293.9L408.9 297.6L414.9 300.8L421.0 303.8L424.8 306.5L428.1 309.3L430.6 312.0L432.9 314.6L434.7 316.1L433.3 317.1L430.5 317.7L426.0 318.5L418.4 319.5L410.6 320.3L398.0 321.6L385.0 322.8L398.8 323.2L410.6 323.6L421.7 323.7L430.0 324.4L437.9 325.3L444.7 326.4L451.2 327.5L455.4 328.0L455.9 329.2L454.9 330.6L452.7 332.7L448.4 336.2L443.7 339.7L435.6 345.4L426.8 351.5L439.4 346.3L449.7 342.1L458.7 338.0L466.2 335.6L473.7 333.4L480.5 331.9L486.9 330.4L490.7 329.4L492.9 330.0L494.6 331.3L496.6 333.5L499.3 337.3L501.8 341.2L505.6 347.9L509.6 355.2L509.6 347.2L509.6 340.7L509.1 335.0L510.1 330.9L511.6 327.1L513.4 323.9L515.2 321.0L516.0 319.1L518.3 318.9L521.4 319.2L525.8 320.1L533.0 321.7L540.3 323.5L552.0 326.6L564.3 329.9L553.1 325.0L544.0 320.9L535.5 317.4L530.0 314.4L525.3 311.5L521.6 308.9L518.3 306.4L516.1 305.0L517.1 304.1L519.5 303.5L523.4 302.9L530.0 302.1L536.7 301.3L547.5 300.3L558.5 299.3L545.9 298.9L535.1 298.6L525.2 298.5L517.6 298.0L510.3 297.3L504.1 296.5L498.3 295.7L494.6 295.3L494.0 294.4L494.6 293.4L496.1 291.9L499.1 289.6L502.2 287.4L507.3 284.0Z"/>
<path fill="#c3c9d9" d="M496.6 302.1L494.8 301.4L492.8 300.8L490.8 300.3L488.6 299.8L486.4 299.4L484.1 299.1L481.8 298.8L479.4 298.7L477.0 298.6L474.6 298.6L472.2 298.8L469.9 298.9L467.6 299.2L465.3 299.6L463.1 300.0L461.0 300.5L459.0 301.1L457.1 301.8L455.4 302.5L453.8 303.3L452.3 304.1L451.0 305.0L449.9 306.0L449.0 307.0L448.3 308.0L447.7 309.1L447.4 310.1L447.3 311.2L447.5 312.3L447.8 313.4L448.4 314.5L449.2 315.5L450.3 316.6L451.5 317.6L453.0 318.5L454.6 319.4L456.4 320.2L458.5 320.9L460.6 321.6L462.9 322.2L465.4 322.7L467.9 323.1L470.5 323.4L473.1 323.5L475.8 323.6L478.5 323.6L481.2 323.5L483.8 323.2L486.4 322.9L488.8 322.4L491.2 321.9L493.4 321.3L495.5 320.6L497.4 319.8L499.2 318.9L500.7 318.0L502.1 317.1L503.2 316.1L504.1 315.0L504.8 313.9L505.3 312.9L505.5 311.8L505.5 310.7L505.3 309.6L504.9 308.5L504.3 307.5L503.5 306.5L502.4 305.5L501.2 304.6L499.8 303.7L498.3 302.9L496.6 302.1ZM487.8 296.1L488.3 294.4L487.5 293.2L482.3 293.3L476.7 294.0L471.5 294.7L467.4 295.5L464.8 296.0L463.5 296.4L466.5 296.1L469.5 295.8L472.5 295.6L475.6 295.5L478.7 295.5L481.7 295.7L484.8 295.9ZM460.9 296.8L458.3 295.4L455.6 294.7L452.1 296.3L448.9 298.4L446.2 300.5L444.3 302.3L443.4 303.5L442.9 304.2L444.7 303.0L446.5 301.9L448.5 300.8L450.7 299.9L453.1 299.0L455.6 298.2L458.3 297.5ZM441.7 305.3L437.0 305.0L433.7 305.4L433.7 307.7L435.0 310.3L436.5 312.7L438.3 314.7L439.7 315.9L440.4 316.5L439.9 315.1L439.3 313.6L439.0 312.2L439.0 310.8L439.3 309.4L439.9 308.0L440.8 306.6ZM441.5 317.7L437.3 319.1L435.2 320.5L439.4 322.2L445.1 323.7L450.6 324.9L455.5 325.7L458.7 326.1L460.4 326.3L457.4 325.5L454.5 324.6L451.7 323.7L449.2 322.6L446.9 321.5L444.9 320.3L443.2 319.0ZM463.3 326.8L462.5 329.2L463.3 330.9L469.5 330.7L476.1 329.8L482.2 328.8L487.0 327.8L489.8 327.0L491.4 326.5L487.9 326.9L484.5 327.3L481.0 327.6L477.4 327.7L473.8 327.7L470.3 327.5L466.8 327.2ZM494.2 326.0L497.5 327.9L500.8 328.8L504.5 326.6L507.4 323.9L509.7 321.3L511.2 319.1L511.8 317.8L512.1 317.0L510.5 318.3L508.9 319.6L507.1 320.9L504.9 322.1L502.6 323.2L499.9 324.2L497.1 325.0ZM513.0 315.8L517.9 316.1L521.3 315.7L520.3 313.2L518.0 310.5L515.6 308.2L513.2 306.3L511.4 305.2L510.5 304.6L511.5 305.9L512.5 307.3L513.3 308.6L513.7 310.0L513.9 311.5L513.8 312.9L513.4 314.3ZM509.2 303.5L512.7 302.4L514.2 301.2L509.8 299.8L504.4 298.6L499.2 297.6L494.8 297.0L492.0 296.7L490.4 296.5L493.2 297.2L495.9 297.8L498.5 298.6L500.9 299.4L503.2 300.3L505.3 301.3L507.2 302.4Z"/>
</g></svg>
<div class="abs" style="left:91px;top:0;width:4px;height:287px;background:#ffcc00"></div>
<div class="abs" style="left:83px;top:0;width:20px;height:4px;background:#ffcc00"></div>
<div class="abs" style="left:70px;top:129px;width:45px;height:28px;border-radius:4.500px;background:#ffcc00"></div>
<div class="t c" style="left:92.500px;top:133px;font-weight:bold;font-size:15.6px;line-height:18px;letter-spacing:-.45px;color:#1c1703">144</div>
<div class="abs" style="left:8px;top:284px;width:172.6px;height:64px;background:#fff"></div>
<div class="abs" style="left:8px;top:284px;width:172.6px;height:2px;background:#ebe8e8"></div>
<div class="abs" style="left:8px;top:346px;width:172.6px;height:2px;background:#dcdcdc"></div>
<div class="abs" style="left:8px;top:286px;width:1.8px;height:60px;background:#dfe3ec"></div>
<div class="abs" style="left:179px;top:286px;width:1.6px;height:60px;background:#e6e6e6"></div>
<div class="abs" style="left:11px;top:286px;width:167px;height:2.2px;background:#2ea9f2"></div>
<div class="abs" style="left:11px;top:348px;width:167px;height:2.2px;background:#2ea9f2"></div>
<div class="abs" style="left:-10px;top:300px;width:28px;height:28px;border-radius:5px;background:#ffcc00"></div>
<div class="t" style="left:0.6px;top:305px;font-weight:bold;font-size:15.6px;line-height:18px;color:#2a2205">5</div>
<div class="abs" style="left:18.2px;top:308px;width:1.8px;height:20px;background:#262a33"></div>
<div class="abs" style="left:6px;top:282px;width:10px;height:10px;background:#fff;border:2px solid #8b8b8b;box-shadow:0 1px 3px rgba(0,0,0,.3)"></div>
<div class="abs" style="left:6px;top:311.8px;width:10px;height:10px;background:#fff;border:2px solid #8b8b8b;box-shadow:0 1px 3px rgba(0,0,0,.3)"></div>
<div class="abs" style="left:6px;top:340px;width:10px;height:10px;background:#fff;border:2px solid #8b8b8b;box-shadow:0 1px 3px rgba(0,0,0,.3)"></div>
<div class="abs" style="left:89px;top:282px;width:10px;height:10px;background:#fff;border:2px solid #8b8b8b;box-shadow:0 1px 3px rgba(0,0,0,.3)"></div>
<div class="abs" style="left:89px;top:340px;width:10px;height:10px;background:#fff;border:2px solid #8b8b8b;box-shadow:0 1px 3px rgba(0,0,0,.3)"></div>
<div class="abs" style="left:172.6px;top:282px;width:10px;height:10px;background:#fff;border:2px solid #8b8b8b;box-shadow:0 1px 3px rgba(0,0,0,.3)"></div>
<div class="abs" style="left:172.6px;top:311.8px;width:10px;height:10px;background:#fff;border:2px solid #8b8b8b;box-shadow:0 1px 3px rgba(0,0,0,.3)"></div>
<div class="abs" style="left:172.6px;top:340px;width:10px;height:10px;background:#fff;border:2px solid #8b8b8b;box-shadow:0 1px 3px rgba(0,0,0,.3)"></div>
<div class="abs" style="left:103px;top:358px;width:72px;height:28px;border-radius:5px;background:#ffcc00"></div>
<div class="t c" style="left:139px;top:362px;font-weight:bold;font-size:15.6px;line-height:18px;letter-spacing:-.6px;color:#322a06">85 x 30</div>
</div>
<div id="vpbottom"></div>
<div id="cmd"><div id="cmdbox"></div><div id="cmdtxt">Run a command</div></div>
<svg style="left:2px;top:959px" width="4" height="15" viewBox="0 0 4 15" ><rect x=".8" y="0.5" width="2" height="2" fill="#d0d0d0"/><rect x=".8" y="4.5" width="2" height="2" fill="#d0d0d0"/><rect x=".8" y="8.5" width="2" height="2" fill="#d0d0d0"/><rect x=".8" y="12.5" width="2" height="2" fill="#d0d0d0"/></svg>
<svg style="left:1905px;top:962px" width="8" height="5" viewBox="0 0 8 5" ><path d="M.4 .4h7L3.9 4.6z" fill="#d4d4d4"/></svg>
<div id="split"></div><div id="rightedge"></div>
<div class="abs" style="left:1591px;top:121px;width:327px;height:2px;background:#2e2e2e"></div>
<div class="abs" style="left:1591px;top:123px;width:327px;height:411px;background:#2e2e2e;border-left:2px solid #262626"></div>
<div class="phead" style="top:123px"></div>
<div class="t c" style="left:1730.5px;top:127px;color:#b4b4b4">Explorer</div>
<svg style="left:1865px;top:129px" width="12" height="8" viewBox="0 0 12 8" ><path d="M2.300 2.400L6 6.400l3.800-4" fill="none" stroke="#e0e0e0" stroke-width="1.600"/></svg>
<svg style="left:1881px;top:127px" width="14" height="14" viewBox="0 0 14 14" ><path d="M4.700 6.800H3.200a.6.600 0 0 0-.6.600v3.800a.6.600 0 0 0 .6.600h4.400a.6.600 0 0 0 .6-.6V9.900" fill="none" stroke="#e0e0e0" stroke-width="1.300"/><path d="M6 3v4.800h5.100z" fill="#e0e0e0"/><path d="M8 6l4-4" stroke="#e0e0e0" stroke-width="1.300"/></svg>
<svg style="left:1900px;top:129px" width="10" height="10" viewBox="0 0 10 10" ><path d="M1.600 1.600l7 7M8.600 1.600l-7 7" stroke="#e0e0e0" stroke-width="1.300"/></svg>
<div class="abs" style="left:1593px;top:145px;width:325px;height:20px;background:#2e2e2e;border:1px solid #202020"></div>
<svg style="left:1598px;top:152px" width="18" height="10" viewBox="0 0 18 10" ><path d="M.6 .6h9.4L6.4 4.6v4.6H4.4V4.6z" fill="#e6e6e6"/><path d="M11.6 5.6h5l-2.5 2.8z" fill="#e6e6e6"/></svg>
<div class="t" style="left:1624px;top:149px;color:#c8c8c8">Filter workspace (Ctrl+Shift+X)</div>
<svg style="left:1905px;top:152px" width="8" height="5" viewBox="0 0 8 5" ><path d="M.5 .5h6.6L3.8 4.3z" fill="#8a8a8a"/></svg>
<div class="row" style="top:166px"><div class="arr r" style="left:6.8px;top:3.900px"></div><svg class="ico" style="left:25px" width="14" height="14" viewBox="0 0 16 16"><circle cx="8" cy="8" r="7.600" fill="#2b6fd8"/><path d="M2 6c.6-2.400 2.800-4.200 5-4.600l1.400 1.800-1.800 1.400.8 2-2.200 1-.8 2.400L2 8.800z" fill="#2fc455"/><path d="M9.600 7.200l3.400-1.800 2.200 1.600c.2 2.400-.6 4.600-2.400 6l-2.200.2.200-2.600-1.800-1.200z" fill="#2fc455"/><path d="M7.200 1.200l2.600.2-.6 3-1.800 1.400zM6.600 10.800l2.400-.6.400 4.800-2.600.2z" fill="#f4f8ff"/><circle cx="8" cy="8" r="7.400" fill="none" stroke="#5b9df0" stroke-width="1"/></svg><div class="t" style="left:46px;color:#ccc">Workspace</div></div>
<div class="row" style="top:184px"><svg class="ico" style="left:25px" width="14" height="14" viewBox="0 0 16 16"><circle cx="4.400" cy="3.200" r="2.300" fill="#f5a042"/><circle cx="11.600" cy="3.200" r="2.300" fill="#f5a042"/><rect x=".4" y="6.400" width="4.600" height="4.600" rx="1.600" fill="#f5a042"/><rect x="11" y="6.400" width="4.600" height="4.600" rx="1.600" fill="#f5a042"/><circle cx="8" cy="6.600" r="2.500" fill="#1fc25c"/><rect x="4.400" y="9.600" width="7.200" height="6" rx="1.400" fill="#1fc25c"/></svg><div class="t" style="left:46px;color:#ccc">Players</div></div>
<div class="row" style="top:202px"><div class="arr r" style="left:6.8px;top:3.900px"></div><svg class="ico" style="left:25px" width="14" height="14" viewBox="0 0 16 16"><path d="M8 .8a5 5 0 0 0-2.8 9.2c.5.4.8.9.8 1.6h4c0-.7.3-1.2.8-1.6A5 5 0 0 0 8 .8z" fill="#f7e12f"/><path d="M6 12.6h4M6.3 14.2h3.4" stroke="#e8b71e" stroke-width="1.2"/><path d="M6.4 3.6a2.6 2.6 0 0 1 2.4-.8" stroke="#fff8b0" stroke-width="1.1" fill="none"/></svg><div class="t" style="left:46px;color:#ccc">Lighting</div></div>
<div class="row" style="top:220px"><svg class="ico" style="left:25px" width="14" height="14" viewBox="0 0 16 16"><circle cx="6.6" cy="6.6" r="6" fill="#f09a45"/><path d="M2 4.4c1.4.6 2.6.2 3.6-1 .8-1 2-1.4 3-1.2A6 6 0 0 0 2 4.400z" fill="#f8c88a"/><path d="M1 8.200c2 .8 4 .2 5.600-1.200" stroke="#d9782a" stroke-width="1" fill="none"/><rect x="7.400" y="7.400" width="8.600" height="8.600" rx="1.300" fill="#fff" stroke="#2e2e2e" stroke-width="1"/><circle cx="11.700" cy="11.700" r="1.800" fill="#2e2e2e"/></svg><div class="t" style="left:46px;color:#ccc">MaterialService</div></div>
<div class="row" style="top:238px"><svg class="ico" style="left:25px" width="14" height="14" viewBox="0 0 16 16"><path d="M2.800 5V1.200h10.600V5" fill="none" stroke="#4a90ec" stroke-width="1.300"/><path d="M.4 4.600h4.800L2.800 7.600zM11 4.600h4.800l-2.400 3z" fill="#4a90ec"/><rect x="0" y="9.100" width="6" height="6.800" rx="1" fill="#f4f4f4"/><rect x="10.200" y="9.100" width="6" height="6.800" rx="1" fill="#f4f4f4"/><path d="M1.400 11.400h3.200M1.400 13.600h3.200M11.600 11.400h3.200M11.600 13.600h3.200" stroke="#2e2e2e" stroke-width="1.100"/></svg><div class="t" style="left:46px;color:#ccc">ReplicatedFirst</div></div>
<div class="row" style="top:256px"><svg class="ico" style="left:25px" width="14" height="14" viewBox="0 0 16 16"><path d="M1.200 10.400V1.600h9.400" fill="none" stroke="#f2f2f2" stroke-width="2.100"/><path d="M3.300 10.400V3.700h7.300" fill="none" stroke="#a8a8a8" stroke-width="1.500"/><rect x="4.400" y="5.300" width="11.600" height="10.800" fill="#2e2e2e"/><path d="M5.200 6.200h10.200v2.600H5.200z" fill="none" stroke="#f2c314" stroke-width="1.600"/><path d="M6 9v6.200h8.600V9" fill="none" stroke="#f2c314" stroke-width="1.600"/><path d="M9 11.200h2.600" stroke="#f2c314" stroke-width="1.400"/></svg><div class="t" style="left:46px;color:#ccc">ReplicatedStorage</div></div>
<div class="row" style="top:274px"><svg class="ico" style="left:25px" width="14" height="14" viewBox="0 0 16 16"><path d="M3.600 10.400A3.500 3.500 0 0 1 3 3.500 4.400 4.400 0 0 1 11.200 2.600a4 4 0 0 1 .8 7.800z" fill="#12b45c"/><path d="M5.200 4.200q1.600-1.800 3.600-.6" fill="none" stroke="#0a8a44" stroke-width=".9"/><path d="M8.400 7.600h7.800l-.8 7.200q-.1 1.200-1.400 1.200H6.800q1.200-.2 1.300-1.400z" fill="#fff" stroke="#2e2e2e" stroke-width=".9"/><path d="M10 10.200h4M9.800 12.600h4" stroke="#2e2e2e" stroke-width="1.100"/></svg><div class="t" style="left:46px;color:#ccc">ServerScriptService</div></div>
<div class="row" style="top:292px"><svg class="ico" style="left:25px" width="14" height="14" viewBox="0 0 16 16"><path d="M3.600 10.400A3.500 3.500 0 0 1 3 3.500 4.400 4.400 0 0 1 11.200 2.600a4 4 0 0 1 .8 7.800z" fill="#12b45c"/><path d="M5.200 4.200q1.600-1.800 3.600-.6" fill="none" stroke="#0a8a44" stroke-width=".9"/><rect x="7.600" y="9.600" width="8.600" height="5.400" rx="1.300" fill="#fff" stroke="#2e2e2e" stroke-width=".9"/><path d="M12.600 11.600h2v1.400z" fill="#2e2e2e"/></svg><div class="t" style="left:46px;color:#ccc">ServerStorage</div></div>
<div class="row" style="top:310px"><div class="arr d" style="left:5px;top:5.800px"></div><svg class="ico" style="left:25px" width="14" height="14" viewBox="0 0 16 16"><g transform="translate(-.4 -.8) scale(1.14)"><path d="M.6 2.200a1 1 0 0 1 1-1h3.600l1.600 1.800h4a1 1 0 0 1 1 1v6.400a1 1 0 0 1-1 1H1.600a1 1 0 0 1-1-1z" fill="#f7e09c"/><path d="M.6 4.400h11.200v6a1 1 0 0 1-1 1H1.600a1 1 0 0 1-1-1z" fill="#f3d679"/></g><rect x="6.600" y="7.800" width="9.200" height="7.800" rx="1.200" fill="#fff" stroke="#2e2e2e" stroke-width=".9"/><rect x="8.200" y="10.400" width="6" height="3.700" fill="#2e2e2e"/></svg><div class="t" style="left:46px;color:#ccc">StarterGui</div></div>
<div class="row" style="top:328px"><div class="arr d" style="left:25px;top:5.800px"></div><svg class="ico" style="left:45px" width="14" height="14" viewBox="0 0 16 16"><rect x=".7" y="1.600" width="14.600" height="13" rx="1.600" fill="none" stroke="#2476bf" stroke-width="1.200"/><path d="M.2 4.400V3a1.800 1.800 0 0 1 1.800-1.800h12a1.800 1.800 0 0 1 1.800 1.800v1.400z" fill="#3ba6f3"/><rect x="3.300" y="6.800" width="9.400" height="5.600" fill="none" stroke="#2476bf" stroke-width="1.100"/></svg><div class="t" style="left:66px;color:#ccc">ScreenGui</div></div>
<div class="row sel" style="top:346px"><svg class="ico" style="left:65px" width="14" height="14" viewBox="0 0 16 16"><rect x="2" y="2" width="12" height="12" fill="none" stroke="#fff" stroke-width="1.300"/><rect x=".2" y=".2" width="3.600" height="3.600" fill="#fff"/><rect x="12.200" y=".2" width="3.600" height="3.600" fill="#fff"/><rect x=".2" y="12.200" width="3.600" height="3.600" fill="#fff"/><rect x="12.200" y="12.200" width="3.600" height="3.600" fill="#fff"/></svg><div class="t" style="left:86px;color:#fff">Frame</div><svg style="left:127.600px;top:3px" width="10.400" height="10.400" viewBox="0 0 11 11"><circle cx="5.500" cy="5.500" r="5.300" fill="#dedede"/><path d="M5.500 1.800v7.400M1.800 5.500h7.400" stroke="#0b5aaf" stroke-width="1.700"/></svg></div>
<div class="row" style="top:364px"><svg class="ico" style="left:25px" width="14" height="14" viewBox="0 0 16 16"><g transform="translate(-.4 -.8) scale(1.14)"><path d="M.6 2.200a1 1 0 0 1 1-1h3.600l1.600 1.800h4a1 1 0 0 1 1 1v6.400a1 1 0 0 1-1 1H1.600a1 1 0 0 1-1-1z" fill="#f7e09c"/><path d="M.6 4.400h11.200v6a1 1 0 0 1-1 1H1.600a1 1 0 0 1-1-1z" fill="#f3d679"/></g><path d="M8.300 15.600L12.300 9.400M8.600 9q3.800-2.400 7.200 1" fill="none" stroke="#2e2e2e" stroke-width="3.400" stroke-linecap="round"/><path d="M8.300 15.600L12.300 9.400M8.600 9q3.800-2.400 7.200 1" fill="none" stroke="#fff" stroke-width="1.700" stroke-linecap="round"/></svg><div class="t" style="left:46px;color:#ccc">StarterPack</div></div>
<div class="row" style="top:382px"><div class="arr r" style="left:6.8px;top:3.900px"></div><svg class="ico" style="left:25px" width="14" height="14" viewBox="0 0 16 16"><g transform="translate(-.4 -.8) scale(1.14)"><path d="M.6 2.200a1 1 0 0 1 1-1h3.600l1.600 1.800h4a1 1 0 0 1 1 1v6.400a1 1 0 0 1-1 1H1.600a1 1 0 0 1-1-1z" fill="#f7e09c"/><path d="M.6 4.400h11.200v6a1 1 0 0 1-1 1H1.600a1 1 0 0 1-1-1z" fill="#f3d679"/></g><circle cx="11.400" cy="9.400" r="2.300" fill="#fff" stroke="#2e2e2e" stroke-width=".8"/><path d="M6.800 15.800a4.600 4.600 0 0 1 9.200 0z" fill="#fff" stroke="#2e2e2e" stroke-width=".8"/></svg><div class="t" style="left:46px;color:#ccc">StarterPlayer</div></div>
<div class="row" style="top:400px"><svg class="ico" style="left:25px" width="14" height="14" viewBox="0 0 16 16"><g transform="translate(-.4 -.8) scale(1.14)"><path d="M.6 2.200a1 1 0 0 1 1-1h3.600l1.600 1.800h4a1 1 0 0 1 1 1v6.400a1 1 0 0 1-1 1H1.600a1 1 0 0 1-1-1z" fill="#f7e09c"/><path d="M.6 4.400h11.200v6a1 1 0 0 1-1 1H1.600a1 1 0 0 1-1-1z" fill="#f3d679"/></g><circle cx="8.400" cy="10" r="1.900" fill="#fff" stroke="#2e2e2e" stroke-width=".7"/><path d="M4.600 16a3.800 3.800 0 0 1 7.400-1z" fill="#fff" stroke="#2e2e2e" stroke-width=".7"/><circle cx="12.400" cy="9.400" r="2.200" fill="#fff" stroke="#2e2e2e" stroke-width=".7"/><path d="M8.200 16a4.200 4.200 0 0 1 8.200 0z" fill="#fff" stroke="#2e2e2e" stroke-width=".7"/></svg><div class="t" style="left:46px;color:#ccc">Teams</div></div>
<div class="row" style="top:418px"><svg class="ico" style="left:25px" width="14" height="14" viewBox="0 0 16 16"><path d="M.2 4h3L8 .2v12.800L3.200 9.400H.2z" fill="#35a3f2"/><path d="M9.800 2.600a5 5 0 0 1 1.400 3.600M12 .6a8 8 0 0 1 2.600 5.800" fill="none" stroke="#35a3f2" stroke-width="1.400"/><rect x="7.400" y="7.400" width="8.600" height="8.600" rx="1.300" fill="#fff" stroke="#2e2e2e" stroke-width="1"/><circle cx="11.700" cy="11.700" r="1.800" fill="#2e2e2e"/></svg><div class="t" style="left:46px;color:#ccc">SoundService</div></div>
<div class="row" style="top:436px"><div class="arr r" style="left:6.8px;top:3.900px"></div><svg class="ico" style="left:25px" width="14" height="14" viewBox="0 0 16 16"><path d="M1 5.200A4.400 4.400 0 0 1 5.400.8h4.400a4.400 4.400 0 0 1 0 8.800H6l-3 2.600V9A4.400 4.400 0 0 1 1 5.200z" fill="#bdbdbd"/><circle cx="4.600" cy="5.200" r=".9" fill="#6a6a6a"/><circle cx="7.600" cy="5.200" r=".9" fill="#6a6a6a"/><circle cx="10.600" cy="5.200" r=".9" fill="#6a6a6a"/><rect x="7.400" y="7.400" width="8.600" height="8.600" rx="1.300" fill="#fff" stroke="#2e2e2e" stroke-width="1"/><circle cx="11.700" cy="11.700" r="1.800" fill="#2e2e2e"/></svg><div class="t" style="left:46px;color:#ccc">TextChatService</div></div>
<div class="abs" style="left:1591px;top:534px;width:327px;height:5px;background:#3c3c3c"></div>
<div class="abs" style="left:1591px;top:539px;width:327px;height:415px;background:#2e2e2e;border-left:2px solid #262626"></div>
<div class="phead" style="top:539px;height:23px"></div>
<div class="t c" style="left:1730.5px;top:544px;color:#b4b4b4;letter-spacing:-.22px">Properties - Frame "Frame"</div>
<svg style="left:1865px;top:546px" width="12" height="8" viewBox="0 0 12 8" ><path d="M2.300 2.400L6 6.400l3.800-4" fill="none" stroke="#e0e0e0" stroke-width="1.600"/></svg>
<svg style="left:1881px;top:544px" width="14" height="14" viewBox="0 0 14 14" ><path d="M4.700 6.800H3.200a.6.600 0 0 0-.6.600v3.800a.6.600 0 0 0 .6.600h4.400a.6.600 0 0 0 .6-.6V9.900" fill="none" stroke="#e0e0e0" stroke-width="1.300"/><path d="M6 3v4.800h5.100z" fill="#e0e0e0"/><path d="M8 6l4-4" stroke="#e0e0e0" stroke-width="1.300"/></svg>
<svg style="left:1900px;top:546px" width="10" height="10" viewBox="0 0 10 10" ><path d="M1.600 1.600l7 7M8.600 1.600l-7 7" stroke="#e0e0e0" stroke-width="1.300"/></svg>
<div class="abs" style="left:1593px;top:562px;width:325px;height:20px;background:#2e2e2e;border:1px solid #202020"></div>
<div class="t" style="left:1598px;top:566px;color:#d4d4d4">size</div>
<svg style="left:1905px;top:569px" width="8" height="5" viewBox="0 0 8 5" ><path d="M.5 .5h6.600L3.800 4.300z" fill="#8a8a8a"/></svg>
<div class="psec" style="top:588px;height:21px"><div class="arr d" style="left:6.2px;top:7px"></div><div class="t" style="top:4px">Data</div></div>
<div class="prow" style="top:609px"><div class="arr r" style="left:6.800px;top:5.400px"></div><div class="t dim" style="left:24px">AbsoluteSize</div><div class="pdiv"></div><div class="t dim" style="left:166px">85, 30</div></div>
<div class="prow" style="top:629px"><div class="t" style="left:24px">AutomaticSize</div><div class="pdiv"></div><div class="t" style="left:166px">None</div></div>
<div class="prow" style="top:649px"><div class="t" style="left:24px">BorderSizePixel</div><div class="pdiv"></div><div class="t" style="left:166px">0</div></div>
<div class="prow" style="top:669px"><div class="arr r" style="left:6.800px;top:5.400px"></div><div class="t" style="left:24px">Size</div><div class="pdiv"></div><div class="t" style="left:166px">{0, 85},{0, 30}</div></div>
<div class="prow" style="top:689px"><div class="t" style="left:24px">SizeConstraint</div><div class="pdiv"></div><div class="t" style="left:166px">RelativeXY</div></div>
<div class="psec" style="top:709px;height:22px"><div class="arr d" style="left:6.2px;top:8px"></div><div class="t" style="top:5px">Tags</div><div class="plus"></div></div>
<div class="prow" style="top:731px"><div class="t dim" style="left:20px;font-family:'DejaVu Sans','Liberation Sans',sans-serif;font-size:11px;letter-spacing:.1px">No Tags have been added yet</div></div>
<div class="psec" style="top:751px;height:22px"><div class="arr d" style="left:6.2px;top:8px"></div><div class="t" style="top:5px">Attributes</div><div class="plus"></div></div>
<div class="prow" style="top:773px"><div class="t dim" style="left:20px;font-family:'DejaVu Sans','Liberation Sans',sans-serif;font-size:11px;letter-spacing:.1px">No Attribute has been added yet</div></div>
</body>
</html>
